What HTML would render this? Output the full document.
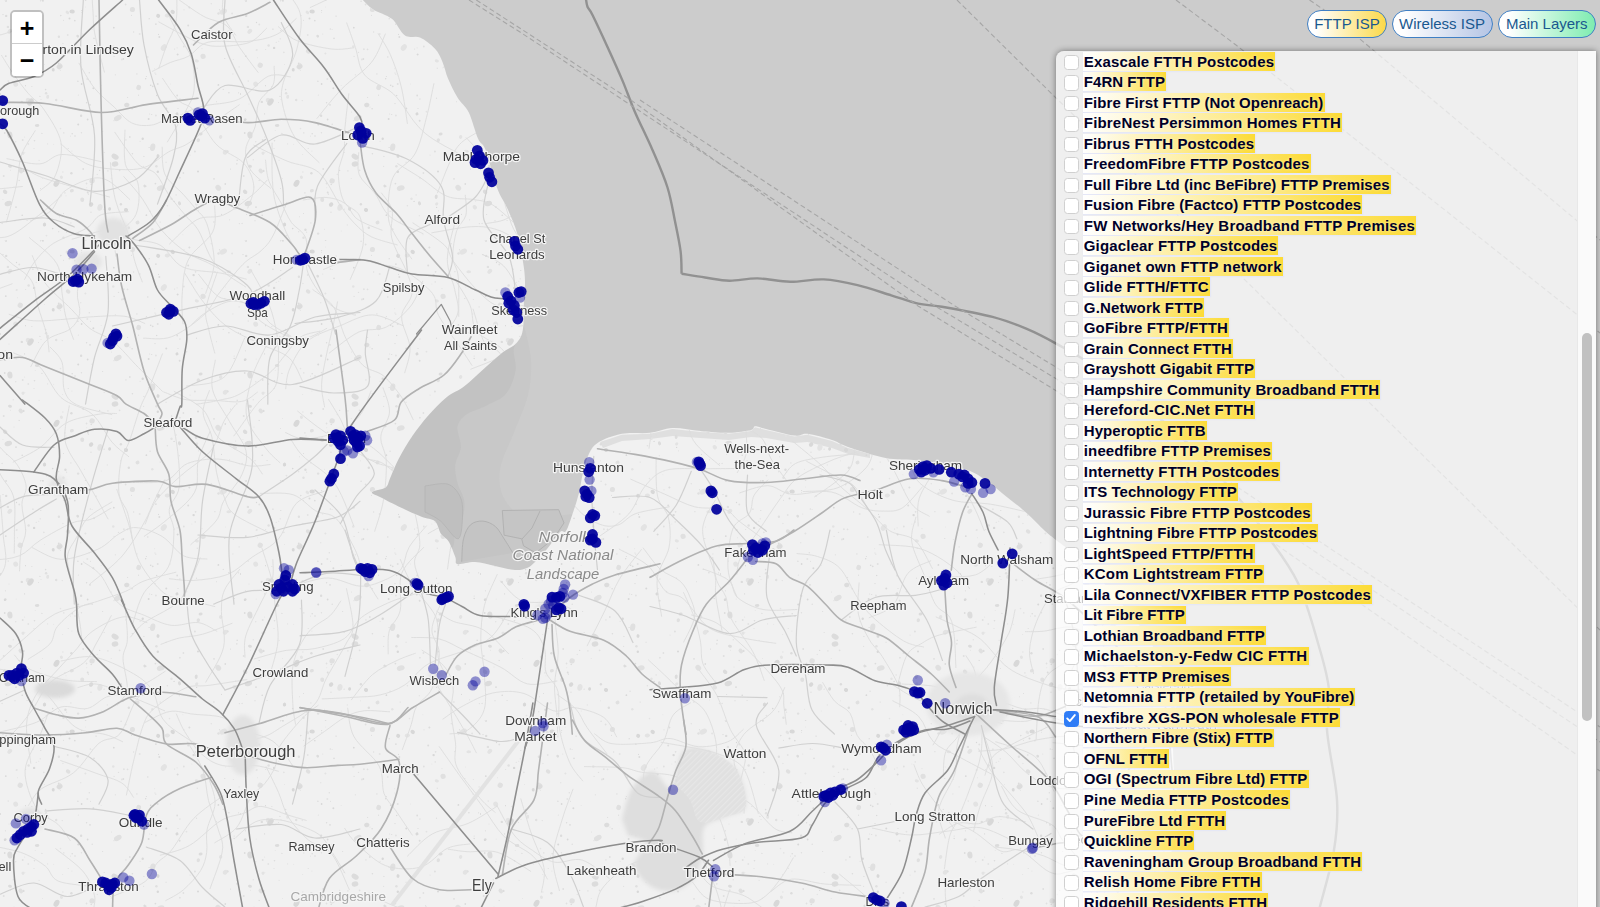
<!DOCTYPE html>
<html lang="en"><head><meta charset="utf-8"><title>FTTP ISP map</title>
<style>
html,body{margin:0;padding:0;}
body{width:1600px;height:907px;overflow:hidden;position:relative;background:#cccccc;font-family:"Liberation Sans",sans-serif;}
#map{position:absolute;left:0;top:0;width:1600px;height:907px;}
#map text{font-family:"Liberation Sans",sans-serif;}
.zoomctl{position:absolute;left:10px;top:10px;width:30px;border:2px solid rgba(0,0,0,0.2);border-radius:5px;background-clip:padding-box;}
.zoomctl a{display:block;width:30px;height:31px;background:#fff;color:#000;text-align:center;font:bold 25px/32px "Liberation Sans",sans-serif;text-decoration:none;position:relative;overflow:hidden;}
.zoomctl a:last-child{height:31.5px;line-height:33px;}
.zoomctl a:first-child{border-bottom:1px solid #ccc;border-radius:3px 3px 0 0;}
.zoomctl a:last-child{border-radius:0 0 3px 3px;}
.zoomctl i{position:absolute;background:#000;display:block;}
.btns{position:absolute;top:10px;right:4px;height:28px;}
.btn{position:absolute;top:10px;height:26px;border:1px solid #3f7fc4;border-radius:14px;color:#19588f;font-size:15px;line-height:26px;text-align:center;white-space:nowrap;}
#panel{position:absolute;left:1056px;top:51px;width:540px;height:880px;background:rgba(255,255,255,0.68);border-radius:8px 0 0 0;box-shadow:0 0 6px rgba(0,0,0,0.45);overflow:hidden;}
#track{position:absolute;right:0;top:0;width:18.7px;height:100%;background:#fafafa;border-left:1px solid #e8e8e8;box-sizing:border-box;}
#thumb{position:absolute;left:1582px;top:333.4px;width:10.3px;height:387.4px;border-radius:5.2px;background:#c1c1c1;}
.row{position:absolute;left:0;height:20.5px;white-space:nowrap;}
.cb{position:absolute;left:7.6px;top:3.4px;width:13.6px;height:13.6px;border:1px solid #d0d0d0;border-radius:3.5px;background:#fff;box-sizing:content-box;}
.cb.checked{background:#2f7cf6;border-color:#2f7cf6;}
.cb svg{position:absolute;left:-0.5px;top:-0.5px;width:14px;height:14px;}
label{position:absolute;left:27.3px;top:0.6px;height:18.8px;line-height:18.8px;padding-top:0.8px;font-weight:bold;font-size:15px;color:#000028;background:linear-gradient(to right,#ffffff,#fcdb36);padding-left:0.5px;box-sizing:border-box;text-shadow:0 0 3px rgba(255,255,255,0.55);overflow:hidden;box-shadow:0.5px 0.5px 1px 0.5px rgba(225,230,250,0.7);}
</style></head><body>
<svg id="map" width="1600" height="907" viewBox="0 0 1600 907">
<defs><filter id="soft" x="0" y="0" width="100%" height="100%"><feGaussianBlur stdDeviation="0.55"/></filter></defs>
<g filter="url(#soft)">
<rect x="-5" y="-5" width="1610" height="917" fill="#cccccc"/>
<path d="M524.0,325.0 C525.2,330.8 530.3,348.3 531.0,360.0 C531.7,371.7 530.7,383.3 528.0,395.0 C525.3,406.7 519.7,417.5 515.0,430.0 C510.3,442.5 501.7,458.3 500.0,470.0 C498.3,481.7 500.0,491.7 505.0,500.0 C510.0,508.3 518.3,517.5 530.0,520.0 C541.7,522.5 568.3,511.7 575.0,515.0 C581.7,518.3 575.0,529.2 570.0,540.0 C565.0,550.8 565.0,573.3 545.0,580.0 C525.0,586.7 477.5,593.3 450.0,580.0 C422.5,566.7 388.3,525.0 380.0,500.0 C371.7,475.0 385.0,453.3 400.0,430.0 C415.0,406.7 458.3,371.7 470.0,360.0Z" fill="#c8c8c8"/>
<path d="M521.6,332.3 C520.3,335.1 514.8,342.8 513.8,349.1 C512.8,355.5 516.9,363.0 515.6,370.5 C514.3,378.0 510.7,388.3 505.9,394.1 C501.1,399.9 493.3,402.0 486.8,405.4 C480.2,408.8 471.4,410.8 466.5,414.4 C461.6,417.9 458.5,421.3 457.5,426.8 C456.6,432.2 461.3,440.6 460.9,447.0 C460.5,453.4 455.8,459.0 455.3,465.0 C454.7,471.0 456.0,477.0 457.5,483.0 C459.0,489.0 463.5,494.6 464.3,501.0 C465.0,507.4 463.5,516.0 462.0,521.3 C460.5,526.5 456.9,528.1 455.3,532.5 C453.6,537.0 455.4,545.4 452.0,548.0 C448.6,550.6 443.7,552.3 435.0,548.0 C426.3,543.7 411.7,530.5 400.0,522.0 C388.3,513.5 368.7,505.7 365.0,497.0 C361.3,488.3 372.5,480.8 378.0,470.0 C383.5,459.2 389.7,444.2 398.0,432.0 C406.3,419.8 416.3,408.0 428.0,397.0 C439.7,386.0 455.3,376.0 468.0,366.0 C480.7,356.0 496.2,344.3 504.0,337.0 C511.8,329.7 513.2,324.5 515.0,322.0Z" fill="#c2c2c2"/>
<path d="M502.3,510.5 L558.7,509.7 L564,522.9 L553.5,538.8 L535.8,552.9 L523.5,545.8 L521.7,538.8 L504.1,535.2Z" fill="#c5c5c5" stroke="#b2b2b2" stroke-width="1"/>
<path d="M540,511 L532,528 L522,539" fill="none" stroke="#b2b2b2" stroke-width="1"/>
<path d="M461.7,561.7 C462.0,557.9 462.0,545.0 463.5,538.8 C465.0,532.6 467.4,527.7 470.6,524.7 C473.8,521.8 478.8,520.8 482.9,521.1 C487.0,521.4 491.8,523.5 495.3,526.4 C498.8,529.3 501.2,534.4 504.1,538.8 C507.0,543.2 511.4,550.5 512.9,552.9" fill="#c4c4c4" stroke="#b2b2b2" stroke-width="1"/>
<path d="M425.0,486.0 C428.8,485.7 441.8,482.4 447.6,484.1 C453.4,485.8 457.5,491.4 460.0,496.4 C462.5,501.4 462.9,507.0 462.6,514.1 C462.3,521.2 461.9,537.6 458.2,538.8 C454.5,540.0 446.1,525.6 440.6,521.1 C435.1,516.6 427.6,513.5 425.0,512.0Z" fill="#bfbfbf" stroke="#b4b4b4" stroke-width="0.8"/>
<path d="M360.9,-2.0 C362.9,-0.1 367.9,5.9 373.1,9.4 C378.3,12.9 386.6,14.4 391.9,18.8 C397.2,23.2 400.3,32.5 405.0,35.6 C409.7,38.7 415.0,35.3 420.0,37.5 C425.0,39.7 431.2,44.7 435.0,48.8 C438.8,52.9 440.3,56.9 442.5,61.9 C444.7,66.9 445.6,72.9 448.1,78.8 C450.6,84.7 454.1,91.9 457.5,97.5 C460.9,103.1 465.4,105.6 468.8,112.5 C472.2,119.4 475.3,132.6 478.1,138.8 C480.9,145.1 482.5,141.9 485.6,150.0 C488.7,158.1 493.1,177.5 496.9,187.5 C500.6,197.5 504.7,202.2 508.1,210.0 C511.5,217.8 515.0,225.7 517.5,234.4 C520.0,243.2 521.9,254.7 523.1,262.5 C524.4,270.3 524.9,275.1 525.0,281.3 C525.1,287.6 524.4,291.9 524.0,300.0 C523.6,308.1 524.1,322.8 522.8,330.0 C521.5,337.2 519.4,339.8 516.0,343.5 C512.6,347.2 507.8,348.4 502.5,352.5 C497.2,356.6 490.9,362.7 484.5,368.3 C478.1,373.9 470.7,381.4 464.3,386.3 C457.9,391.2 452.3,392.6 446.3,397.5 C440.3,402.4 433.9,409.1 428.3,415.5 C422.7,421.9 417.4,428.7 412.5,435.8 C407.6,442.9 402.8,451.2 399.0,458.3 C395.2,465.4 392.2,473.6 390.0,478.5 C387.8,483.4 388.5,485.2 385.5,487.5 C382.5,489.8 372.9,490.4 372.0,492.0 C371.1,493.6 375.1,494.4 380.0,497.0 C384.9,499.6 394.4,504.5 401.3,507.8 C408.2,511.1 415.9,514.5 421.5,516.8 C427.1,519.0 431.8,518.4 435.0,521.3 C438.2,524.2 438.8,530.7 441.0,534.0 C443.2,537.3 446.1,537.5 448.5,541.3 C450.9,545.1 453.8,553.2 455.3,557.0 C456.8,560.8 454.2,563.2 457.5,564.0 C460.8,564.8 468.8,561.7 475.0,562.0 C481.2,562.3 488.3,564.7 495.0,566.0 C501.7,567.3 509.7,569.7 515.0,570.0 C520.3,570.3 523.7,569.3 527.0,568.0 C530.3,566.7 531.7,565.2 535.0,562.0 C538.3,558.8 542.8,554.0 547.0,549.0 C551.2,544.0 556.8,535.0 560.0,532.0 C563.2,529.0 563.8,534.2 566.0,531.0 C568.2,527.8 570.9,518.7 573.0,512.5 C575.1,506.3 577.2,500.1 578.8,493.8 C580.4,487.6 581.0,481.3 582.5,475.0 C584.0,468.7 585.5,461.3 588.0,456.0 C590.5,450.7 591.9,446.7 597.5,443.0 C603.1,439.3 613.1,435.5 621.9,433.8 C630.6,432.1 641.6,433.8 650.0,432.8 C658.4,431.8 664.1,428.3 672.5,428.0 C680.9,427.7 691.2,430.2 700.6,431.0 C710.0,431.8 720.4,433.0 728.8,432.8 C737.2,432.6 746.6,431.1 751.0,430.0 C755.4,428.9 752.5,426.5 755.0,426.3 C757.5,426.1 759.4,427.4 766.0,429.0 C772.6,430.6 787.5,434.8 794.4,435.6 C801.3,436.4 801.2,433.1 807.5,433.8 C813.8,434.5 825.2,437.8 832.0,440.0 C838.8,442.2 839.1,443.9 848.0,446.9 C856.9,449.9 874.6,455.8 885.6,458.0 C896.6,460.2 904.4,459.0 913.8,460.0 C923.2,461.0 932.6,462.0 942.0,463.8 C951.4,465.6 962.2,467.9 970.0,471.0 C977.8,474.1 982.5,478.1 988.8,482.5 C995.0,486.9 1001.3,492.5 1007.5,497.5 C1013.7,502.5 1019.8,506.9 1026.0,512.5 C1032.2,518.1 1040.0,526.4 1045.0,531.0 C1050.0,535.6 1051.0,536.0 1056.0,540.0 C1061.0,544.0 1066.0,546.7 1075.0,555.0 C1084.0,563.3 1097.8,576.2 1110.0,590.0 C1122.2,603.8 1138.7,623.0 1148.0,638.0 C1157.3,653.0 1162.0,666.3 1166.0,680.0 C1170.0,693.7 1170.7,705.0 1172.0,720.0 C1173.3,735.0 1172.7,754.2 1174.0,770.0 C1175.3,785.8 1180.3,801.7 1180.0,815.0 C1179.7,828.3 1175.0,839.2 1172.0,850.0 C1169.0,860.8 1164.8,870.0 1162.0,880.0 C1159.2,890.0 1156.2,905.0 1155.0,910.0 L-5,910 L-5,-2Z" fill="#f1f1f1"/>
<path d="M600.0,442.0 L621.9,434.8 L650.0,433.8 L672.5,429.0 L700.6,432.0 L728.8,433.8 L751.0,431.0 L755.0,427.3 L766.0,430.0 L794.4,436.6 L807.5,434.8 L832.0,441.0 L848.0,447.9 L870.0,454.0 L870.0,458.0 L848.0,454.0 L832.0,448.0 L807.5,442.0 L794.4,443.0 L766.0,438.0 L751.0,437.0 L728.8,440.0 L700.6,438.0 L672.5,436.0 L650.0,439.0 L621.9,441.0 L603.0,448.0Z" fill="#dfdfdf"/>
<defs><pattern id="spk" width="240" height="240" patternUnits="userSpaceOnUse">
<ellipse cx="77.7" cy="36.2" rx="1.3" ry="1.5" fill="#dcdcdc" transform="rotate(137 77.7 36.2)"/>
<circle cx="22.6" cy="139.9" r="1.0" fill="#e0e0e0"/>
<circle cx="9.0" cy="104.1" r="0.5" fill="#e0e0e0"/>
<circle cx="21.8" cy="101.9" r="1.2" fill="#dcdcdc"/>
<circle cx="227.4" cy="151.4" r="1.2" fill="#dcdcdc"/>
<circle cx="138.5" cy="95.2" r="0.6" fill="#dcdcdc"/>
<circle cx="133.6" cy="32.0" r="0.8" fill="#e0e0e0"/>
<circle cx="129.8" cy="137.0" r="1.0" fill="#e0e0e0"/>
<circle cx="24.7" cy="137.1" r="0.6" fill="#e3e3e3"/>
<circle cx="23.4" cy="170.9" r="1.2" fill="#dcdcdc"/>
<circle cx="148.6" cy="119.1" r="1.0" fill="#d8d8d8"/>
<circle cx="186.5" cy="111.7" r="0.9" fill="#e3e3e3"/>
<ellipse cx="71.9" cy="190.7" rx="1.7" ry="2.0" fill="#e0e0e0" transform="rotate(76 71.9 190.7)"/>
<ellipse cx="126.0" cy="210.0" rx="2.1" ry="2.0" fill="#d8d8d8" transform="rotate(18 126.0 210.0)"/>
<ellipse cx="28.3" cy="100.3" rx="2.4" ry="2.6" fill="#e3e3e3" transform="rotate(125 28.3 100.3)"/>
<circle cx="101.2" cy="230.9" r="0.5" fill="#e3e3e3"/>
<circle cx="81.6" cy="84.0" r="0.9" fill="#d8d8d8"/>
<circle cx="16.5" cy="22.5" r="0.7" fill="#d8d8d8"/>
<ellipse cx="167.3" cy="15.6" rx="2.6" ry="2.0" fill="#e3e3e3" transform="rotate(174 167.3 15.6)"/>
<circle cx="197.3" cy="68.3" r="0.8" fill="#e3e3e3"/>
<circle cx="5.4" cy="110.8" r="0.6" fill="#dcdcdc"/>
<circle cx="118.5" cy="52.4" r="0.7" fill="#e0e0e0"/>
<circle cx="177.2" cy="95.5" r="0.9" fill="#dcdcdc"/>
<circle cx="39.9" cy="96.4" r="0.7" fill="#e0e0e0"/>
<circle cx="196.6" cy="207.4" r="0.7" fill="#d8d8d8"/>
<circle cx="236.8" cy="163.9" r="0.8" fill="#e0e0e0"/>
<circle cx="36.2" cy="42.3" r="0.6" fill="#e0e0e0"/>
<circle cx="2.9" cy="199.5" r="0.6" fill="#e3e3e3"/>
<circle cx="67.7" cy="35.0" r="1.0" fill="#e3e3e3"/>
<circle cx="146.4" cy="76.5" r="0.6" fill="#dcdcdc"/>
<ellipse cx="109.6" cy="209.0" rx="1.7" ry="1.5" fill="#d8d8d8" transform="rotate(100 109.6 209.0)"/>
<circle cx="24.8" cy="152.2" r="0.5" fill="#e0e0e0"/>
<circle cx="16.2" cy="50.1" r="0.6" fill="#dcdcdc"/>
<circle cx="81.6" cy="12.6" r="0.5" fill="#e0e0e0"/>
<circle cx="128.8" cy="227.7" r="1.2" fill="#dcdcdc"/>
<circle cx="16.9" cy="49.9" r="0.8" fill="#e0e0e0"/>
<circle cx="152.3" cy="229.3" r="1.2" fill="#e3e3e3"/>
<circle cx="113.8" cy="27.7" r="0.9" fill="#d8d8d8"/>
<circle cx="115.3" cy="74.8" r="0.6" fill="#dcdcdc"/>
<circle cx="179.9" cy="177.7" r="0.9" fill="#e0e0e0"/>
<circle cx="123.9" cy="49.3" r="1.0" fill="#e3e3e3"/>
<circle cx="35.2" cy="130.4" r="0.5" fill="#e3e3e3"/>
<ellipse cx="234.8" cy="207.2" rx="2.4" ry="2.0" fill="#e3e3e3" transform="rotate(42 234.8 207.2)"/>
<circle cx="85.4" cy="53.5" r="1.0" fill="#e3e3e3"/>
<ellipse cx="152.7" cy="147.2" rx="3.8" ry="2.6" fill="#e0e0e0" transform="rotate(102 152.7 147.2)"/>
<circle cx="177.6" cy="54.4" r="1.0" fill="#d8d8d8"/>
<circle cx="85.3" cy="7.0" r="0.5" fill="#e3e3e3"/>
<circle cx="113.3" cy="46.5" r="1.2" fill="#e3e3e3"/>
<circle cx="107.3" cy="224.9" r="0.7" fill="#e3e3e3"/>
<circle cx="19.3" cy="24.5" r="0.9" fill="#e0e0e0"/>
<circle cx="81.1" cy="115.8" r="1.2" fill="#dcdcdc"/>
<ellipse cx="115.1" cy="156.7" rx="3.8" ry="2.6" fill="#dcdcdc" transform="rotate(30 115.1 156.7)"/>
<ellipse cx="218.3" cy="187.8" rx="3.1" ry="2.6" fill="#e0e0e0" transform="rotate(45 218.3 187.8)"/>
<circle cx="104.1" cy="152.6" r="0.5" fill="#d8d8d8"/>
<circle cx="111.2" cy="178.4" r="0.5" fill="#e0e0e0"/>
<circle cx="40.8" cy="30.5" r="0.6" fill="#d8d8d8"/>
<circle cx="193.6" cy="35.1" r="1.2" fill="#d8d8d8"/>
<circle cx="157.7" cy="84.1" r="1.0" fill="#e0e0e0"/>
<ellipse cx="5.1" cy="191.8" rx="2.4" ry="2.0" fill="#dcdcdc" transform="rotate(35 5.1 191.8)"/>
<circle cx="104.1" cy="209.2" r="0.6" fill="#dcdcdc"/>
<circle cx="60.4" cy="70.3" r="0.6" fill="#e3e3e3"/>
<circle cx="62.2" cy="100.6" r="0.6" fill="#dcdcdc"/>
<circle cx="218.4" cy="84.9" r="0.9" fill="#d8d8d8"/>
<circle cx="198.5" cy="210.8" r="0.6" fill="#e0e0e0"/>
<circle cx="125.6" cy="4.5" r="0.9" fill="#e0e0e0"/>
<circle cx="146.1" cy="186.2" r="0.6" fill="#e0e0e0"/>
<circle cx="34.0" cy="148.6" r="0.5" fill="#dcdcdc"/>
<circle cx="78.2" cy="124.4" r="1.0" fill="#d8d8d8"/>
<circle cx="188.2" cy="25.5" r="1.0" fill="#dcdcdc"/>
<ellipse cx="59.6" cy="66.5" rx="3.1" ry="2.6" fill="#dcdcdc" transform="rotate(143 59.6 66.5)"/>
<circle cx="6.7" cy="214.6" r="0.5" fill="#d8d8d8"/>
<circle cx="78.1" cy="233.6" r="1.2" fill="#e0e0e0"/>
<circle cx="166.3" cy="108.6" r="1.0" fill="#d8d8d8"/>
<circle cx="121.9" cy="59.4" r="1.0" fill="#e3e3e3"/>
<circle cx="221.5" cy="214.3" r="0.6" fill="#d8d8d8"/>
<circle cx="32.9" cy="29.2" r="0.9" fill="#e3e3e3"/>
<circle cx="17.4" cy="57.8" r="0.5" fill="#e0e0e0"/>
<ellipse cx="160.7" cy="188.1" rx="4.0" ry="2.6" fill="#e0e0e0" transform="rotate(164 160.7 188.1)"/>
<circle cx="158.5" cy="34.3" r="0.6" fill="#d8d8d8"/>
<circle cx="52.7" cy="228.6" r="0.8" fill="#d8d8d8"/>
<circle cx="39.1" cy="160.3" r="0.6" fill="#e0e0e0"/>
<circle cx="169.5" cy="238.6" r="0.8" fill="#e3e3e3"/>
<circle cx="101.1" cy="85.6" r="0.5" fill="#e3e3e3"/>
<circle cx="4.7" cy="133.0" r="0.9" fill="#dcdcdc"/>
<circle cx="92.2" cy="124.2" r="0.7" fill="#dcdcdc"/>
<circle cx="27.1" cy="220.5" r="0.6" fill="#dcdcdc"/>
<ellipse cx="20.2" cy="65.3" rx="2.6" ry="2.6" fill="#e0e0e0" transform="rotate(33 20.2 65.3)"/>
<ellipse cx="196.7" cy="203.9" rx="1.7" ry="1.5" fill="#e3e3e3" transform="rotate(137 196.7 203.9)"/>
<ellipse cx="220.6" cy="136.9" rx="1.7" ry="2.0" fill="#e3e3e3" transform="rotate(14 220.6 136.9)"/>
<circle cx="191.9" cy="44.0" r="0.5" fill="#e3e3e3"/>
<ellipse cx="225.2" cy="152.3" rx="2.3" ry="2.6" fill="#e3e3e3" transform="rotate(56 225.2 152.3)"/>
<circle cx="16.0" cy="207.1" r="0.9" fill="#dcdcdc"/>
<circle cx="81.4" cy="132.7" r="0.7" fill="#e0e0e0"/>
<circle cx="10.4" cy="170.3" r="0.5" fill="#e0e0e0"/>
<circle cx="62.9" cy="43.5" r="0.7" fill="#e3e3e3"/>
<circle cx="127.5" cy="49.4" r="0.9" fill="#e0e0e0"/>
<circle cx="64.9" cy="192.9" r="0.7" fill="#dcdcdc"/>
<circle cx="3.7" cy="175.9" r="1.0" fill="#e0e0e0"/>
<circle cx="123.4" cy="59.0" r="0.9" fill="#dcdcdc"/>
<ellipse cx="158.0" cy="156.0" rx="1.9" ry="1.5" fill="#d8d8d8" transform="rotate(100 158.0 156.0)"/>
<circle cx="232.9" cy="73.9" r="0.6" fill="#e0e0e0"/>
<ellipse cx="82.2" cy="199.7" rx="2.2" ry="2.0" fill="#e0e0e0" transform="rotate(88 82.2 199.7)"/>
<circle cx="235.7" cy="200.9" r="0.5" fill="#dcdcdc"/>
<circle cx="150.1" cy="211.2" r="0.8" fill="#e0e0e0"/>
<circle cx="13.3" cy="159.7" r="0.8" fill="#e3e3e3"/>
<circle cx="143.7" cy="166.2" r="0.5" fill="#d8d8d8"/>
<circle cx="44.5" cy="64.6" r="0.5" fill="#e3e3e3"/>
<circle cx="87.4" cy="78.9" r="1.0" fill="#e3e3e3"/>
<circle cx="58.7" cy="231.8" r="0.7" fill="#e0e0e0"/>
<circle cx="85.6" cy="0.3" r="0.8" fill="#dcdcdc"/>
<circle cx="113.9" cy="120.7" r="0.6" fill="#e0e0e0"/>
<circle cx="121.1" cy="1.2" r="0.7" fill="#dcdcdc"/>
<circle cx="34.5" cy="140.8" r="0.8" fill="#dcdcdc"/>
<circle cx="71.9" cy="151.1" r="0.5" fill="#e0e0e0"/>
<circle cx="157.8" cy="171.8" r="1.2" fill="#d8d8d8"/>
<circle cx="183.4" cy="173.0" r="0.9" fill="#e0e0e0"/>
<circle cx="68.2" cy="148.5" r="0.6" fill="#dcdcdc"/>
<circle cx="198.0" cy="171.6" r="1.0" fill="#d8d8d8"/>
<circle cx="176.1" cy="194.9" r="0.6" fill="#dcdcdc"/>
<ellipse cx="198.3" cy="140.2" rx="1.7" ry="2.0" fill="#e0e0e0" transform="rotate(10 198.3 140.2)"/>
<circle cx="31.9" cy="86.6" r="0.5" fill="#d8d8d8"/>
<ellipse cx="200.6" cy="134.0" rx="2.0" ry="1.5" fill="#dcdcdc" transform="rotate(174 200.6 134.0)"/>
<circle cx="58.7" cy="63.3" r="0.9" fill="#dcdcdc"/>
<circle cx="179.6" cy="120.7" r="1.0" fill="#dcdcdc"/>
<ellipse cx="158.2" cy="15.9" rx="2.0" ry="2.0" fill="#d8d8d8" transform="rotate(19 158.2 15.9)"/>
<ellipse cx="203.1" cy="56.3" rx="2.6" ry="2.6" fill="#e0e0e0" transform="rotate(166 203.1 56.3)"/>
<circle cx="234.2" cy="118.5" r="0.8" fill="#dcdcdc"/>
<ellipse cx="115.0" cy="164.1" rx="3.4" ry="2.6" fill="#dcdcdc" transform="rotate(164 115.0 164.1)"/>
<circle cx="47.6" cy="143.9" r="0.7" fill="#e3e3e3"/>
<circle cx="156.4" cy="166.3" r="1.2" fill="#e0e0e0"/>
<circle cx="3.0" cy="14.6" r="0.7" fill="#dcdcdc"/>
<circle cx="166.1" cy="162.2" r="0.7" fill="#e3e3e3"/>
<circle cx="111.5" cy="111.9" r="0.5" fill="#e0e0e0"/>
<circle cx="74.8" cy="20.6" r="0.9" fill="#dcdcdc"/>
<circle cx="69.5" cy="18.4" r="1.0" fill="#d8d8d8"/>
<circle cx="238.6" cy="92.8" r="0.6" fill="#dcdcdc"/>
<circle cx="139.6" cy="34.0" r="1.0" fill="#e3e3e3"/>
<ellipse cx="228.7" cy="31.8" rx="2.3" ry="1.5" fill="#e3e3e3" transform="rotate(180 228.7 31.8)"/>
<circle cx="87.6" cy="119.5" r="0.9" fill="#d8d8d8"/>
<circle cx="6.0" cy="0.9" r="0.9" fill="#d8d8d8"/>
<circle cx="97.3" cy="174.5" r="0.8" fill="#e3e3e3"/>
<circle cx="90.3" cy="29.0" r="0.7" fill="#dcdcdc"/>
<circle cx="77.9" cy="81.2" r="0.8" fill="#dcdcdc"/>
<circle cx="225.6" cy="47.0" r="0.5" fill="#e3e3e3"/>
<circle cx="60.8" cy="15.6" r="0.8" fill="#dcdcdc"/>
<circle cx="86.6" cy="102.7" r="0.7" fill="#dcdcdc"/>
<ellipse cx="67.4" cy="12.4" rx="2.0" ry="1.5" fill="#e3e3e3" transform="rotate(38 67.4 12.4)"/>
<circle cx="59.8" cy="63.8" r="1.0" fill="#e3e3e3"/>
<circle cx="45.6" cy="89.6" r="0.8" fill="#dcdcdc"/>
<circle cx="194.9" cy="151.4" r="1.0" fill="#e0e0e0"/>
<ellipse cx="172.7" cy="11.9" rx="2.3" ry="2.0" fill="#d8d8d8" transform="rotate(35 172.7 11.9)"/>
<circle cx="154.7" cy="68.7" r="0.5" fill="#e0e0e0"/>
<circle cx="41.0" cy="99.6" r="0.7" fill="#e3e3e3"/>
<ellipse cx="61.4" cy="177.3" rx="1.7" ry="1.5" fill="#e3e3e3" transform="rotate(61 61.4 177.3)"/>
<circle cx="72.2" cy="133.8" r="0.8" fill="#dcdcdc"/>
<circle cx="40.2" cy="38.8" r="0.6" fill="#d8d8d8"/>
<circle cx="132.1" cy="108.7" r="0.7" fill="#d8d8d8"/>
<circle cx="102.6" cy="131.5" r="0.6" fill="#dcdcdc"/>
<circle cx="41.9" cy="133.4" r="0.7" fill="#e0e0e0"/>
<circle cx="88.4" cy="194.2" r="0.6" fill="#dcdcdc"/>
<circle cx="179.9" cy="99.1" r="0.8" fill="#e0e0e0"/>
<circle cx="90.4" cy="81.2" r="0.5" fill="#d8d8d8"/>
<circle cx="66.6" cy="232.2" r="0.6" fill="#e0e0e0"/>
<circle cx="22.2" cy="215.2" r="0.8" fill="#d8d8d8"/>
<circle cx="155.0" cy="103.6" r="0.7" fill="#dcdcdc"/>
<ellipse cx="30.5" cy="102.0" rx="4.1" ry="2.6" fill="#d8d8d8" transform="rotate(125 30.5 102.0)"/>
<circle cx="0.0" cy="94.0" r="1.0" fill="#d8d8d8"/>
<circle cx="233.3" cy="59.6" r="0.5" fill="#e0e0e0"/>
<ellipse cx="37.1" cy="125.4" rx="2.3" ry="1.5" fill="#dcdcdc" transform="rotate(179 37.1 125.4)"/>
<circle cx="155.4" cy="183.6" r="0.9" fill="#dcdcdc"/>
<ellipse cx="132.4" cy="9.5" rx="2.6" ry="2.6" fill="#e0e0e0" transform="rotate(9 132.4 9.5)"/>
<circle cx="154.9" cy="72.9" r="0.6" fill="#e3e3e3"/>
<ellipse cx="126.8" cy="105.0" rx="2.3" ry="2.6" fill="#dcdcdc" transform="rotate(76 126.8 105.0)"/>
<circle cx="125.9" cy="139.9" r="0.8" fill="#e3e3e3"/>
<circle cx="53.7" cy="144.3" r="0.5" fill="#e3e3e3"/>
<circle cx="239.1" cy="66.9" r="0.7" fill="#e0e0e0"/>
<circle cx="114.1" cy="56.3" r="0.6" fill="#dcdcdc"/>
<circle cx="230.5" cy="169.1" r="0.7" fill="#dcdcdc"/>
<ellipse cx="5.2" cy="119.6" rx="1.3" ry="1.5" fill="#d8d8d8" transform="rotate(58 5.2 119.6)"/>
<circle cx="160.2" cy="222.0" r="0.6" fill="#d8d8d8"/>
<circle cx="8.2" cy="81.1" r="0.8" fill="#e3e3e3"/>
<ellipse cx="163.8" cy="47.5" rx="3.6" ry="2.6" fill="#e3e3e3" transform="rotate(129 163.8 47.5)"/>
<circle cx="16.2" cy="119.0" r="0.6" fill="#e3e3e3"/>
<circle cx="183.8" cy="46.5" r="0.9" fill="#e0e0e0"/>
<circle cx="63.6" cy="213.4" r="0.5" fill="#d8d8d8"/>
<circle cx="146.4" cy="215.2" r="0.9" fill="#d8d8d8"/>
<circle cx="218.5" cy="13.5" r="1.2" fill="#e0e0e0"/>
<circle cx="221.3" cy="13.0" r="0.5" fill="#e0e0e0"/>
<circle cx="99.7" cy="170.4" r="0.6" fill="#d8d8d8"/>
<circle cx="107.9" cy="170.9" r="0.7" fill="#dcdcdc"/>
<circle cx="239.4" cy="223.6" r="0.7" fill="#e0e0e0"/>
<ellipse cx="44.5" cy="224.6" rx="1.7" ry="2.0" fill="#d8d8d8" transform="rotate(170 44.5 224.6)"/>
<circle cx="174.1" cy="201.4" r="0.7" fill="#d8d8d8"/>
<circle cx="40.6" cy="0.7" r="0.7" fill="#dcdcdc"/>
<circle cx="84.4" cy="229.3" r="0.5" fill="#e0e0e0"/>
<circle cx="91.2" cy="184.5" r="0.7" fill="#d8d8d8"/>
<circle cx="21.1" cy="169.3" r="0.6" fill="#e3e3e3"/>
<circle cx="130.0" cy="107.1" r="0.7" fill="#e3e3e3"/>
<ellipse cx="177.0" cy="113.9" rx="1.5" ry="1.5" fill="#d8d8d8" transform="rotate(160 177.0 113.9)"/>
<circle cx="184.0" cy="9.8" r="0.5" fill="#d8d8d8"/>
<circle cx="15.0" cy="220.8" r="0.7" fill="#e0e0e0"/>
<circle cx="179.3" cy="215.7" r="0.7" fill="#e3e3e3"/>
<circle cx="65.4" cy="229.8" r="1.2" fill="#dcdcdc"/>
<circle cx="62.9" cy="172.0" r="0.7" fill="#e3e3e3"/>
<circle cx="71.4" cy="173.2" r="1.2" fill="#dcdcdc"/>
<circle cx="5.8" cy="56.1" r="0.9" fill="#d8d8d8"/>
<circle cx="228.9" cy="92.8" r="0.7" fill="#d8d8d8"/>
<circle cx="195.6" cy="31.8" r="0.9" fill="#e0e0e0"/>
<circle cx="2.1" cy="223.5" r="0.7" fill="#e0e0e0"/>
<circle cx="145.7" cy="78.7" r="0.7" fill="#d8d8d8"/>
<circle cx="86.8" cy="187.7" r="0.5" fill="#e0e0e0"/>
<circle cx="94.0" cy="38.4" r="0.8" fill="#dcdcdc"/>
<circle cx="155.9" cy="115.6" r="1.0" fill="#e3e3e3"/>
<circle cx="38.6" cy="102.4" r="0.5" fill="#dcdcdc"/>
<circle cx="63.6" cy="20.2" r="0.5" fill="#d8d8d8"/>
<circle cx="119.6" cy="170.3" r="0.9" fill="#e0e0e0"/>
<circle cx="56.2" cy="100.0" r="1.2" fill="#e0e0e0"/>
<ellipse cx="179.5" cy="203.3" rx="2.1" ry="1.5" fill="#dcdcdc" transform="rotate(75 179.5 203.3)"/>
<circle cx="70.5" cy="136.1" r="0.7" fill="#e3e3e3"/>
<circle cx="177.1" cy="47.8" r="0.6" fill="#e0e0e0"/>
<circle cx="58.9" cy="36.8" r="1.2" fill="#e0e0e0"/>
<circle cx="78.3" cy="95.1" r="0.6" fill="#e0e0e0"/>
<circle cx="155.9" cy="24.1" r="0.9" fill="#dcdcdc"/>
<circle cx="24.6" cy="113.9" r="0.6" fill="#d8d8d8"/>
<circle cx="219.5" cy="9.7" r="0.7" fill="#e0e0e0"/>
<circle cx="28.6" cy="45.5" r="1.2" fill="#e0e0e0"/>
<circle cx="223.2" cy="89.3" r="0.6" fill="#d8d8d8"/>
<ellipse cx="144.7" cy="186.0" rx="1.3" ry="1.5" fill="#dcdcdc" transform="rotate(152 144.7 186.0)"/>
<circle cx="170.3" cy="83.9" r="0.5" fill="#e3e3e3"/>
<circle cx="81.6" cy="10.6" r="0.7" fill="#dcdcdc"/>
<circle cx="143.9" cy="156.4" r="0.6" fill="#dcdcdc"/>
<circle cx="196.5" cy="98.2" r="0.7" fill="#e0e0e0"/>
<circle cx="149.0" cy="18.7" r="0.5" fill="#d8d8d8"/>
<circle cx="131.5" cy="15.2" r="0.5" fill="#d8d8d8"/>
<circle cx="159.4" cy="37.1" r="1.0" fill="#dcdcdc"/>
<circle cx="156.7" cy="95.5" r="0.7" fill="#d8d8d8"/>
<circle cx="237.2" cy="160.3" r="0.8" fill="#dcdcdc"/>
<circle cx="75.0" cy="136.0" r="0.7" fill="#d8d8d8"/>
<ellipse cx="99.9" cy="207.4" rx="3.4" ry="2.6" fill="#e3e3e3" transform="rotate(100 99.9 207.4)"/>
<circle cx="174.7" cy="48.9" r="0.5" fill="#d8d8d8"/>
<circle cx="216.4" cy="101.7" r="0.5" fill="#d8d8d8"/>
<ellipse cx="138.7" cy="87.5" rx="2.4" ry="2.6" fill="#e0e0e0" transform="rotate(13 138.7 87.5)"/>
<circle cx="132.4" cy="153.8" r="0.8" fill="#dcdcdc"/>
<ellipse cx="137.5" cy="222.5" rx="1.8" ry="2.0" fill="#e0e0e0" transform="rotate(72 137.5 222.5)"/>
<circle cx="38.8" cy="41.2" r="0.5" fill="#dcdcdc"/>
<ellipse cx="92.1" cy="180.9" rx="2.7" ry="2.6" fill="#e0e0e0" transform="rotate(11 92.1 180.9)"/>
<circle cx="234.1" cy="115.9" r="0.5" fill="#d8d8d8"/>
<ellipse cx="20.7" cy="171.0" rx="2.6" ry="2.0" fill="#e0e0e0" transform="rotate(56 20.7 171.0)"/>
<circle cx="149.1" cy="147.5" r="0.6" fill="#d8d8d8"/>
<circle cx="43.9" cy="52.4" r="0.8" fill="#e0e0e0"/>
<circle cx="92.1" cy="29.5" r="0.6" fill="#e0e0e0"/>
<ellipse cx="9.9" cy="135.0" rx="3.5" ry="2.6" fill="#dcdcdc" transform="rotate(82 9.9 135.0)"/>
<circle cx="28.3" cy="143.9" r="1.0" fill="#e3e3e3"/>
<circle cx="155.8" cy="74.0" r="0.6" fill="#d8d8d8"/>
<circle cx="93.4" cy="88.2" r="1.0" fill="#d8d8d8"/>
<circle cx="42.9" cy="0.8" r="0.9" fill="#d8d8d8"/>
<ellipse cx="56.5" cy="183.3" rx="3.8" ry="2.6" fill="#d8d8d8" transform="rotate(121 56.5 183.3)"/>
<circle cx="96.1" cy="16.1" r="0.7" fill="#d8d8d8"/>
<circle cx="87.7" cy="192.5" r="1.0" fill="#dcdcdc"/>
<ellipse cx="9.8" cy="31.3" rx="2.8" ry="2.0" fill="#e3e3e3" transform="rotate(130 9.8 31.3)"/>
<circle cx="19.2" cy="180.5" r="0.8" fill="#e0e0e0"/>
<circle cx="6.2" cy="15.9" r="1.2" fill="#dcdcdc"/>
<circle cx="46.5" cy="235.6" r="0.9" fill="#e3e3e3"/>
<circle cx="229.6" cy="219.8" r="0.6" fill="#e0e0e0"/>
<ellipse cx="15.7" cy="84.2" rx="2.4" ry="2.6" fill="#e3e3e3" transform="rotate(157 15.7 84.2)"/>
<circle cx="66.0" cy="195.8" r="0.6" fill="#e3e3e3"/>
<circle cx="120.5" cy="220.8" r="0.6" fill="#e3e3e3"/>
<circle cx="147.8" cy="57.0" r="0.7" fill="#dcdcdc"/>
<ellipse cx="47.7" cy="96.8" rx="2.0" ry="1.5" fill="#e3e3e3" transform="rotate(96 47.7 96.8)"/>
<circle cx="40.5" cy="188.4" r="0.5" fill="#dcdcdc"/>
<circle cx="152.7" cy="86.3" r="0.9" fill="#dcdcdc"/>
<circle cx="60.5" cy="128.6" r="0.8" fill="#e3e3e3"/>
<circle cx="63.5" cy="237.7" r="1.2" fill="#e0e0e0"/>
<circle cx="86.5" cy="183.5" r="0.9" fill="#e0e0e0"/>
<circle cx="42.4" cy="178.5" r="0.5" fill="#e3e3e3"/>
<ellipse cx="196.8" cy="60.9" rx="2.1" ry="1.5" fill="#e3e3e3" transform="rotate(8 196.8 60.9)"/>
<ellipse cx="53.2" cy="69.8" rx="1.7" ry="1.5" fill="#d8d8d8" transform="rotate(93 53.2 69.8)"/>
<circle cx="214.9" cy="31.7" r="0.6" fill="#dcdcdc"/>
<circle cx="5.3" cy="0.6" r="0.7" fill="#e3e3e3"/>
<circle cx="25.5" cy="85.7" r="0.6" fill="#d8d8d8"/>
<circle cx="140.1" cy="141.4" r="0.6" fill="#e3e3e3"/>
<circle cx="149.7" cy="114.0" r="0.6" fill="#dcdcdc"/>
<circle cx="224.8" cy="58.5" r="0.6" fill="#d8d8d8"/>
<ellipse cx="23.0" cy="153.2" rx="1.7" ry="1.5" fill="#e3e3e3" transform="rotate(67 23.0 153.2)"/>
<circle cx="232.1" cy="13.5" r="1.0" fill="#e3e3e3"/>
<circle cx="142.7" cy="138.8" r="1.2" fill="#d8d8d8"/>
<circle cx="59.6" cy="216.8" r="0.5" fill="#dcdcdc"/>
<circle cx="127.6" cy="97.4" r="0.6" fill="#e0e0e0"/>
<circle cx="14.0" cy="186.9" r="0.5" fill="#e0e0e0"/>
<circle cx="34.1" cy="47.9" r="1.2" fill="#d8d8d8"/>
<circle cx="195.2" cy="41.9" r="0.7" fill="#dcdcdc"/>
<ellipse cx="72.1" cy="11.6" rx="2.7" ry="2.0" fill="#d8d8d8" transform="rotate(1 72.1 11.6)"/>
<circle cx="90.0" cy="104.8" r="0.9" fill="#dcdcdc"/>
<circle cx="178.0" cy="108.6" r="0.6" fill="#dcdcdc"/>
<circle cx="62.7" cy="154.6" r="0.5" fill="#e3e3e3"/>
<circle cx="213.9" cy="222.0" r="0.7" fill="#dcdcdc"/>
<circle cx="63.8" cy="132.9" r="0.8" fill="#e3e3e3"/>
<circle cx="70.9" cy="222.9" r="0.6" fill="#dcdcdc"/>
<circle cx="211.2" cy="3.7" r="0.7" fill="#e0e0e0"/>
<circle cx="202.0" cy="48.7" r="0.6" fill="#e3e3e3"/>
<circle cx="46.1" cy="93.3" r="1.2" fill="#e0e0e0"/>
<ellipse cx="91.1" cy="204.5" rx="2.4" ry="2.0" fill="#d8d8d8" transform="rotate(135 91.1 204.5)"/>
<circle cx="167.4" cy="205.8" r="0.8" fill="#e0e0e0"/>
<circle cx="136.9" cy="73.9" r="0.6" fill="#d8d8d8"/>
<circle cx="149.4" cy="18.7" r="0.6" fill="#e0e0e0"/>
<circle cx="7.9" cy="26.9" r="1.2" fill="#e0e0e0"/>
<circle cx="82.8" cy="34.0" r="0.5" fill="#dcdcdc"/>
<ellipse cx="10.0" cy="166.2" rx="2.0" ry="1.5" fill="#dcdcdc" transform="rotate(11 10.0 166.2)"/>
<circle cx="15.8" cy="141.7" r="0.7" fill="#e0e0e0"/>
<ellipse cx="196.2" cy="196.7" rx="2.3" ry="1.5" fill="#dcdcdc" transform="rotate(98 196.2 196.7)"/>
<circle cx="25.7" cy="49.4" r="0.5" fill="#dcdcdc"/>
<ellipse cx="8.3" cy="203.5" rx="3.8" ry="2.6" fill="#dcdcdc" transform="rotate(161 8.3 203.5)"/>
<circle cx="151.7" cy="114.5" r="0.6" fill="#dcdcdc"/>
<circle cx="190.1" cy="155.1" r="0.7" fill="#e3e3e3"/>
<circle cx="80.8" cy="62.7" r="0.7" fill="#e3e3e3"/>
<ellipse cx="223.2" cy="11.6" rx="4.0" ry="2.6" fill="#e3e3e3" transform="rotate(154 223.2 11.6)"/>
<circle cx="120.9" cy="204.3" r="1.2" fill="#dcdcdc"/>
<circle cx="189.4" cy="7.5" r="1.0" fill="#dcdcdc"/>
<circle cx="83.2" cy="169.1" r="1.0" fill="#e0e0e0"/>
<circle cx="171.5" cy="198.7" r="1.2" fill="#e3e3e3"/>
<circle cx="40.9" cy="0.3" r="0.6" fill="#e3e3e3"/>
<circle cx="182.9" cy="234.7" r="0.5" fill="#e3e3e3"/>
<ellipse cx="117.8" cy="118.0" rx="4.1" ry="2.6" fill="#e0e0e0" transform="rotate(151 117.8 118.0)"/>
<circle cx="83.3" cy="199.6" r="0.7" fill="#e0e0e0"/>
<ellipse cx="68.1" cy="51.5" rx="2.4" ry="2.0" fill="#e0e0e0" transform="rotate(28 68.1 51.5)"/>
<circle cx="225.3" cy="184.0" r="0.9" fill="#dcdcdc"/>
<circle cx="150.7" cy="85.3" r="0.8" fill="#d8d8d8"/>
<circle cx="214.0" cy="178.9" r="0.8" fill="#dcdcdc"/>
<circle cx="89.3" cy="72.8" r="0.8" fill="#e0e0e0"/>
<circle cx="91.0" cy="212.2" r="0.6" fill="#d8d8d8"/>
</pattern>
<clipPath id="landclip"><path d="M360.9,-2.0 C362.9,-0.1 367.9,5.9 373.1,9.4 C378.3,12.9 386.6,14.4 391.9,18.8 C397.2,23.2 400.3,32.5 405.0,35.6 C409.7,38.7 415.0,35.3 420.0,37.5 C425.0,39.7 431.2,44.7 435.0,48.8 C438.8,52.9 440.3,56.9 442.5,61.9 C444.7,66.9 445.6,72.9 448.1,78.8 C450.6,84.7 454.1,91.9 457.5,97.5 C460.9,103.1 465.4,105.6 468.8,112.5 C472.2,119.4 475.3,132.6 478.1,138.8 C480.9,145.1 482.5,141.9 485.6,150.0 C488.7,158.1 493.1,177.5 496.9,187.5 C500.6,197.5 504.7,202.2 508.1,210.0 C511.5,217.8 515.0,225.7 517.5,234.4 C520.0,243.2 521.9,254.7 523.1,262.5 C524.4,270.3 524.9,275.1 525.0,281.3 C525.1,287.6 524.4,291.9 524.0,300.0 C523.6,308.1 524.1,322.8 522.8,330.0 C521.5,337.2 519.4,339.8 516.0,343.5 C512.6,347.2 507.8,348.4 502.5,352.5 C497.2,356.6 490.9,362.7 484.5,368.3 C478.1,373.9 470.7,381.4 464.3,386.3 C457.9,391.2 452.3,392.6 446.3,397.5 C440.3,402.4 433.9,409.1 428.3,415.5 C422.7,421.9 417.4,428.7 412.5,435.8 C407.6,442.9 402.8,451.2 399.0,458.3 C395.2,465.4 392.2,473.6 390.0,478.5 C387.8,483.4 388.5,485.2 385.5,487.5 C382.5,489.8 372.9,490.4 372.0,492.0 C371.1,493.6 375.1,494.4 380.0,497.0 C384.9,499.6 394.4,504.5 401.3,507.8 C408.2,511.1 415.9,514.5 421.5,516.8 C427.1,519.0 431.8,518.4 435.0,521.3 C438.2,524.2 438.8,530.7 441.0,534.0 C443.2,537.3 446.1,537.5 448.5,541.3 C450.9,545.1 453.8,553.2 455.3,557.0 C456.8,560.8 454.2,563.2 457.5,564.0 C460.8,564.8 468.8,561.7 475.0,562.0 C481.2,562.3 488.3,564.7 495.0,566.0 C501.7,567.3 509.7,569.7 515.0,570.0 C520.3,570.3 523.7,569.3 527.0,568.0 C530.3,566.7 531.7,565.2 535.0,562.0 C538.3,558.8 542.8,554.0 547.0,549.0 C551.2,544.0 556.8,535.0 560.0,532.0 C563.2,529.0 563.8,534.2 566.0,531.0 C568.2,527.8 570.9,518.7 573.0,512.5 C575.1,506.3 577.2,500.1 578.8,493.8 C580.4,487.6 581.0,481.3 582.5,475.0 C584.0,468.7 585.5,461.3 588.0,456.0 C590.5,450.7 591.9,446.7 597.5,443.0 C603.1,439.3 613.1,435.5 621.9,433.8 C630.6,432.1 641.6,433.8 650.0,432.8 C658.4,431.8 664.1,428.3 672.5,428.0 C680.9,427.7 691.2,430.2 700.6,431.0 C710.0,431.8 720.4,433.0 728.8,432.8 C737.2,432.6 746.6,431.1 751.0,430.0 C755.4,428.9 752.5,426.5 755.0,426.3 C757.5,426.1 759.4,427.4 766.0,429.0 C772.6,430.6 787.5,434.8 794.4,435.6 C801.3,436.4 801.2,433.1 807.5,433.8 C813.8,434.5 825.2,437.8 832.0,440.0 C838.8,442.2 839.1,443.9 848.0,446.9 C856.9,449.9 874.6,455.8 885.6,458.0 C896.6,460.2 904.4,459.0 913.8,460.0 C923.2,461.0 932.6,462.0 942.0,463.8 C951.4,465.6 962.2,467.9 970.0,471.0 C977.8,474.1 982.5,478.1 988.8,482.5 C995.0,486.9 1001.3,492.5 1007.5,497.5 C1013.7,502.5 1019.8,506.9 1026.0,512.5 C1032.2,518.1 1040.0,526.4 1045.0,531.0 C1050.0,535.6 1051.0,536.0 1056.0,540.0 C1061.0,544.0 1066.0,546.7 1075.0,555.0 C1084.0,563.3 1097.8,576.2 1110.0,590.0 C1122.2,603.8 1138.7,623.0 1148.0,638.0 C1157.3,653.0 1162.0,666.3 1166.0,680.0 C1170.0,693.7 1170.7,705.0 1172.0,720.0 C1173.3,735.0 1172.7,754.2 1174.0,770.0 C1175.3,785.8 1180.3,801.7 1180.0,815.0 C1179.7,828.3 1175.0,839.2 1172.0,850.0 C1169.0,860.8 1164.8,870.0 1162.0,880.0 C1159.2,890.0 1156.2,905.0 1155.0,910.0 L-5,910 L-5,-2Z"/></clipPath></defs>
<g clip-path="url(#landclip)">
<rect width="1200" height="907" fill="url(#spk)"/>
<g fill="none" stroke="#dddddd" stroke-width="0.9" stroke-linecap="round">
<path d="M132.3,538.4 C131.5,534.2 129.9,520.6 127.7,513.2 C125.5,505.7 120.1,502.3 119.0,493.6 C117.9,484.9 119.2,469.9 121.0,461.1 C122.7,452.4 126.2,450.0 129.4,441.1 C132.6,432.2 137.0,416.5 140.2,407.8 C143.5,399.1 145.1,397.8 148.8,388.9 C152.5,379.9 160.1,359.8 162.4,353.9"/>
<path d="M265.5,160.1 C266.1,163.6 266.3,174.1 268.9,181.2 C271.6,188.4 277.6,196.3 281.3,203.2 C285.0,210.0 287.2,216.3 291.3,222.3 C295.4,228.2 303.2,230.4 306.0,238.9 C308.7,247.3 303.8,261.9 307.9,272.9 C312.0,283.8 322.7,297.8 330.5,304.8 C338.4,311.9 350.9,313.4 354.9,315.1"/>
<path d="M1160.6,727.2 C1159.2,724.1 1153.0,715.7 1152.2,708.6 C1151.5,701.5 1152.3,692.3 1156.0,684.7 C1159.6,677.1 1170.9,672.7 1174.0,663.0 C1177.1,653.3 1174.6,636.1 1174.4,626.2 C1174.2,616.3 1170.6,610.6 1172.6,603.4 C1174.6,596.2 1184.1,586.5 1186.4,583.1"/>
<path d="M6.5,221.8 C8.2,215.7 13.9,196.3 16.4,185.1 C18.9,174.0 18.4,163.9 21.5,154.9 C24.6,145.9 32.7,135.1 34.9,131.2"/>
<path d="M254.3,658.9 C259.6,657.5 276.2,652.1 286.1,650.4 C296.1,648.7 304.4,650.7 314.1,648.7 C323.7,646.7 336.3,643.8 344.2,638.6 C352.1,633.4 353.6,623.6 361.4,617.5 C369.3,611.3 382.5,605.4 391.1,601.6 C399.8,597.7 405.5,597.5 413.5,594.4 C421.5,591.3 434.9,584.9 439.1,583.1"/>
<path d="M725.9,364.8 C726.2,360.6 731.0,348.8 728.0,339.7 C724.9,330.5 710.9,318.1 707.4,309.7 C703.9,301.4 708.3,296.3 706.8,289.4 C705.2,282.5 699.7,271.8 698.3,268.2"/>
<path d="M839.5,874.2 C843.4,877.5 854.9,886.8 863.0,893.9 C871.0,901.0 879.6,909.5 887.6,917.0 C895.5,924.6 905.1,931.0 910.6,939.4 C916.0,947.8 915.8,956.8 920.3,967.2 C924.9,977.6 934.8,996.2 937.7,1002.0"/>
<path d="M232.1,623.3 C227.2,625.1 211.4,631.8 202.6,634.2 C193.8,636.7 186.2,636.4 179.3,638.0 C172.4,639.7 164.0,643.2 161.0,644.3"/>
<path d="M70.2,840.5 C68.2,837.8 63.5,829.7 57.9,824.3 C52.2,818.9 41.9,817.1 36.4,808.2 C31.0,799.2 24.5,782.7 25.1,770.4 C25.8,758.1 36.7,743.8 40.4,734.4 C44.2,725.0 46.6,717.5 47.8,714.1"/>
<path d="M1095.3,44.8 C1096.6,39.9 1102.6,26.8 1103.1,15.4 C1103.6,4.0 1100.9,-11.9 1098.3,-23.5 C1095.8,-35.0 1089.0,-42.8 1088.0,-53.8 C1087.0,-64.8 1091.5,-83.6 1092.2,-89.5"/>
<path d="M541.7,256.7 C538.1,253.7 525.4,245.0 520.0,238.5 C514.6,232.1 512.2,226.9 509.3,218.1 C506.5,209.2 501.5,195.8 503.0,185.6 C504.5,175.3 515.7,161.3 518.3,156.4"/>
<path d="M557.9,737.1 C557.7,733.0 557.2,721.2 556.7,712.5 C556.1,703.8 554.3,695.1 554.5,685.2 C554.8,675.2 558.1,664.6 558.2,652.9 C558.3,641.1 554.4,623.9 555.2,614.6 C556.0,605.2 561.7,599.9 563.0,597.0"/>
<path d="M973.5,831.5 C974.6,827.3 976.9,815.9 980.0,806.7 C983.0,797.5 989.9,784.8 991.8,776.5 C993.6,768.2 992.9,765.1 991.1,756.9 C989.3,748.7 982.8,732.1 981.1,727.1"/>
<path d="M674.2,782.9 C676.3,785.8 684.2,791.5 686.6,800.3 C689.0,809.1 685.1,824.3 688.5,835.7 C691.9,847.0 701.9,857.4 707.1,868.3 C712.3,879.3 716.8,889.5 719.7,901.2 C722.6,912.9 725.5,926.5 724.6,938.5 C723.8,950.6 716.5,967.8 714.8,973.6"/>
<path d="M216.8,631.2 C213.7,629.8 205.8,623.6 198.2,622.6 C190.5,621.6 180.0,626.5 171.1,625.3 C162.1,624.1 153.2,619.1 144.5,615.4 C135.7,611.7 125.8,610.0 118.5,603.3 C111.2,596.6 106.4,582.0 100.6,575.1 C94.7,568.2 86.2,564.2 83.4,562.0"/>
<path d="M699.5,670.5 C702.4,674.7 711.7,685.6 716.9,695.4 C722.0,705.3 725.7,719.9 730.3,729.4 C734.9,738.9 742.5,745.4 744.6,752.6 C746.6,759.7 744.5,763.7 742.7,772.1 C740.9,780.5 735.2,797.7 733.7,802.8"/>
<path d="M14.2,553.1 C14.3,549.8 14.5,542.1 14.4,533.0 C14.4,523.9 15.9,507.4 13.9,498.4 C12.0,489.3 6.7,484.7 2.8,478.6 C-1.1,472.5 -2.3,466.6 -9.4,461.8 C-16.5,457.0 -34.6,451.9 -39.7,449.9"/>
<path d="M389.6,711.8 C385.3,711.7 371.4,710.0 364.1,710.8 C356.8,711.7 352.4,713.3 345.8,716.7 C339.2,720.1 331.6,726.5 324.6,731.4 C317.6,736.3 307.3,743.5 303.9,746.0"/>
<path d="M1161.1,800.6 C1156.9,804.6 1142.0,817.4 1135.4,825.0 C1128.9,832.5 1125.6,837.5 1121.8,845.9 C1118.1,854.3 1117.1,865.4 1112.9,875.5 C1108.7,885.6 1099.2,901.5 1096.5,906.7"/>
<path d="M28.1,659.3 C31.7,656.7 45.0,649.4 49.9,643.9 C54.8,638.4 52.6,632.4 57.5,626.4 C62.3,620.4 72.4,612.0 79.0,607.8 C85.6,603.6 89.5,604.1 97.2,601.4 C105.0,598.6 117.7,594.8 125.5,591.4 C133.3,588.0 135.6,584.2 144.0,581.0 C152.4,577.8 170.6,573.6 175.9,572.2"/>
<path d="M1031.6,58.0 C1034.9,59.5 1043.3,61.7 1051.5,67.0 C1059.7,72.2 1073.2,84.0 1081.0,89.5 C1088.8,95.0 1094.1,95.5 1098.3,100.0 C1102.4,104.5 1104.9,110.4 1105.8,116.6 C1106.8,122.9 1103.2,128.6 1103.8,137.6 C1104.5,146.6 1108.6,165.2 1109.6,170.7"/>
<path d="M1014.9,153.7 C1020.3,154.3 1039.1,154.7 1046.8,157.5 C1054.5,160.2 1056.7,165.8 1061.2,170.2 C1065.7,174.6 1071.9,181.7 1074.1,184.0"/>
<path d="M122.6,741.7 C119.8,740.5 113.6,737.0 105.7,734.6 C97.9,732.2 85.0,733.4 75.6,727.2 C66.2,721.0 57.0,705.7 49.6,697.4 C42.2,689.1 39.3,682.3 31.1,677.6 C22.8,673.0 8.7,670.2 0.0,669.3 C-8.7,668.4 -17.6,671.8 -21.1,672.3"/>
<path d="M-1.4,-15.5 C0.2,-21.4 7.1,-41.8 8.3,-51.1 C9.5,-60.5 6.8,-64.2 5.6,-71.6 C4.5,-79.0 2.3,-91.4 1.6,-95.3"/>
<path d="M662.8,403.7 C661.5,398.1 656.2,379.3 655.1,370.2 C654.0,361.0 654.4,356.3 656.2,349.0 C658.0,341.7 664.3,330.3 665.9,326.6"/>
<path d="M649.0,448.2 C649.2,445.0 651.9,435.0 650.4,429.1 C648.9,423.2 641.8,421.2 639.8,413.0 C637.7,404.7 638.0,389.8 638.3,379.9 C638.6,370.0 641.7,363.1 641.5,353.5 C641.3,344.0 637.8,327.8 637.0,322.6"/>
<path d="M1129.2,764.8 C1124.8,762.4 1111.8,754.8 1102.3,750.1 C1092.8,745.5 1083.1,738.6 1072.2,736.9 C1061.3,735.2 1047.9,738.0 1036.8,739.9 C1025.7,741.9 1015.5,746.8 1005.8,748.7 C996.1,750.5 983.3,750.8 978.7,751.2"/>
<path d="M442.9,719.1 C446.3,716.9 454.8,710.2 463.1,705.9 C471.4,701.5 482.6,695.1 492.8,693.0 C502.9,691.0 513.9,690.5 524.0,693.5 C534.0,696.4 544.8,708.4 553.2,710.7 C561.6,713.1 565.9,706.5 574.3,707.6 C582.7,708.7 596.6,712.4 603.6,717.3 C610.7,722.2 614.4,733.6 616.6,736.8"/>
<path d="M444.8,333.6 C447.0,330.2 456.2,320.5 457.8,313.2 C459.4,305.8 456.4,298.5 454.7,289.6 C452.9,280.7 447.3,270.7 447.3,259.6 C447.3,248.4 453.5,228.9 454.8,222.8"/>
<path d="M30.8,763.2 C30.1,756.7 25.7,735.3 26.6,724.0 C27.4,712.7 31.1,703.9 35.7,695.4 C40.4,686.9 47.9,680.5 54.4,673.2 C60.9,665.8 68.4,658.2 74.7,651.2 C81.0,644.3 84.1,637.2 92.2,631.5 C100.2,625.7 113.6,618.4 122.8,616.9 C131.9,615.5 142.9,621.7 146.9,622.6"/>
<path d="M49.1,351.8 C48.6,348.8 48.4,341.5 46.5,333.7 C44.6,326.0 40.2,314.1 37.6,305.2 C35.1,296.3 35.7,287.3 31.2,280.2 C26.8,273.1 17.2,268.4 10.9,262.8 C4.6,257.3 -3.8,249.5 -6.7,246.9"/>
<path d="M980.0,281.7 C976.6,283.2 966.6,284.7 959.5,290.3 C952.4,295.9 943.6,306.8 937.3,315.3 C931.0,323.8 926.2,332.6 921.7,341.4 C917.3,350.3 912.2,364.0 910.3,368.5"/>
<path d="M158.8,21.9 C162.7,24.0 175.0,30.9 181.8,34.4 C188.7,37.8 193.7,40.9 199.7,42.9 C205.8,44.8 209.8,46.4 218.1,46.3 C226.3,46.2 241.1,45.5 249.2,42.5 C257.3,39.5 263.7,30.6 266.6,28.2"/>
<path d="M1024.9,511.5 C1019.2,510.3 1002.7,506.1 990.6,504.2 C978.4,502.3 963.7,503.5 952.0,500.0 C940.2,496.5 927.0,489.7 920.0,483.3 C913.0,477.0 911.7,465.6 910.0,462.0"/>
<path d="M25.4,168.9 C28.2,170.4 34.0,174.5 42.1,177.5 C50.3,180.5 63.0,183.9 74.2,187.1 C85.5,190.4 103.6,195.4 109.5,197.0"/>
<path d="M1053.8,791.2 C1052.5,788.1 1049.6,778.9 1045.9,772.8 C1042.3,766.7 1040.2,759.7 1031.8,754.5 C1023.4,749.3 1001.7,743.9 995.7,741.8"/>
<path d="M587.8,151.7 C594.2,149.8 617.1,144.1 625.9,140.2 C634.7,136.3 635.9,134.0 640.6,128.4 C645.2,122.7 646.1,112.8 654.0,106.4 C661.8,99.9 679.1,92.3 687.9,89.5 C696.8,86.8 703.8,89.7 707.0,89.8"/>
<path d="M923.6,647.0 C920.3,646.0 911.9,645.8 903.4,640.8 C894.9,635.8 880.4,624.3 872.8,617.2 C865.1,610.0 863.1,606.0 857.6,597.9 C852.1,589.7 846.5,575.0 839.8,568.1 C833.1,561.2 824.7,558.9 817.5,556.5 C810.4,554.1 800.4,554.1 797.0,553.6"/>
<path d="M557.6,138.5 C554.5,143.9 545.2,160.2 539.3,171.3 C533.4,182.5 527.9,197.5 522.3,205.4 C516.7,213.4 511.7,216.1 505.8,219.1 C499.8,222.1 489.7,222.7 486.5,223.5"/>
<path d="M722.4,330.7 C726.2,325.6 740.0,307.7 745.2,299.8 C750.4,291.9 753.0,292.6 753.6,283.4 C754.2,274.1 751.1,254.4 748.9,244.3 C746.7,234.2 745.3,229.0 740.5,222.7 C735.7,216.4 728.6,211.7 720.0,206.6 C711.4,201.6 694.1,194.8 688.9,192.4"/>
<path d="M196.3,404.3 C200.2,403.6 212.5,401.9 219.8,400.1 C227.1,398.4 231.9,398.4 240.2,393.8 C248.6,389.2 262.6,378.8 269.9,372.6 C277.2,366.3 279.1,362.1 284.2,356.2 C289.3,350.4 294.5,341.4 300.4,337.2 C306.4,333.0 316.8,332.2 320.0,331.2"/>
<path d="M1154.3,33.4 C1159.4,30.1 1177.2,22.1 1184.9,13.6 C1192.5,5.2 1193.6,-10.2 1200.3,-17.3 C1207.0,-24.5 1218.2,-24.6 1225.1,-29.3 C1231.9,-34.0 1238.8,-43.0 1241.5,-45.7"/>
<path d="M265.8,346.7 C263.5,351.9 255.1,366.0 251.9,377.7 C248.7,389.4 244.5,405.3 246.7,416.9 C248.9,428.6 259.7,439.9 265.2,447.5 C270.8,455.1 277.4,460.1 279.9,462.7"/>
<path d="M-17.7,762.3 C-20.8,762.4 -29.5,762.1 -36.6,762.9 C-43.7,763.6 -51.4,762.5 -60.4,766.6 C-69.4,770.7 -82.2,781.8 -90.5,787.3 C-98.7,792.9 -106.6,797.8 -109.9,799.9"/>
<path d="M190.8,544.6 C195.0,540.7 210.7,528.1 216.1,520.9 C221.6,513.7 219.4,508.9 223.6,501.3 C227.9,493.6 238.0,483.5 241.7,475.0 C245.4,466.6 247.9,459.5 245.9,450.6 C243.9,441.7 235.1,431.9 229.6,421.7 C224.0,411.5 214.9,399.7 212.5,389.4 C210.1,379.2 214.8,365.0 215.3,360.2"/>
<path d="M397.2,244.9 C392.9,243.5 378.4,240.3 371.4,236.8 C364.3,233.3 360.1,229.1 355.0,223.9 C349.8,218.6 346.4,214.1 340.4,205.5 C334.3,196.9 327.5,179.7 318.6,172.3 C309.7,164.9 297.9,165.6 287.1,161.1 C276.3,156.6 259.3,147.9 253.8,145.2"/>
<path d="M407.4,856.2 C411.6,852.5 422.5,839.2 432.6,833.8 C442.7,828.3 457.4,828.0 468.1,823.4 C478.9,818.8 492.3,809.1 497.1,806.2"/>
<path d="M437.7,686.2 C440.2,690.3 447.8,702.5 452.8,710.9 C457.8,719.2 463.9,729.4 467.8,736.4 C471.8,743.4 474.9,750.1 476.3,752.8"/>
<path d="M1140.9,190.3 C1144.1,194.2 1156.7,206.7 1160.1,213.6 C1163.5,220.6 1163.8,224.1 1161.0,232.0 C1158.2,240.0 1146.2,256.4 1143.2,261.3"/>
<path d="M293.7,767.1 C290.2,762.8 282.0,747.4 272.7,741.1 C263.3,734.7 246.0,732.7 237.6,728.8 C229.3,724.9 229.7,719.9 222.4,717.5 C215.1,715.0 202.5,715.2 193.7,714.2 C184.9,713.3 177.8,710.2 169.7,711.5 C161.6,712.9 149.2,720.6 145.1,722.4"/>
<path d="M144.3,536.3 C148.1,533.5 158.6,526.9 167.0,519.6 C175.4,512.2 189.4,502.1 194.6,492.2 C199.8,482.3 195.7,470.5 198.3,460.4 C200.8,450.3 208.1,436.4 210.0,431.6"/>
<path d="M703.3,14.0 C707.5,14.9 719.9,19.0 728.3,19.1 C736.6,19.3 742.8,17.4 753.3,15.1 C763.9,12.8 785.3,6.9 791.7,5.2"/>
<path d="M945.3,838.0 C944.2,833.2 937.4,819.9 938.9,809.3 C940.5,798.7 951.8,784.6 954.8,774.2 C957.8,763.8 955.4,755.7 956.8,747.0 C958.3,738.2 961.4,729.1 963.5,721.8 C965.6,714.5 967.4,711.0 969.3,703.2 C971.3,695.3 975.9,682.6 975.4,674.7 C974.8,666.8 967.5,659.0 966.0,655.8"/>
<path d="M1143.6,710.0 C1149.9,710.2 1172.2,709.4 1181.1,711.4 C1189.9,713.3 1191.3,717.1 1196.8,721.6 C1202.3,726.0 1211.0,735.4 1213.9,738.2"/>
<path d="M794.1,237.0 C790.6,235.4 780.5,230.8 772.8,227.1 C765.1,223.4 754.1,220.5 748.2,214.8 C742.2,209.1 738.9,196.8 737.0,193.2"/>
<path d="M346.5,588.7 C347.6,595.0 353.2,617.0 353.0,626.4 C352.9,635.7 349.9,636.1 345.5,644.7 C341.0,653.4 331.7,668.2 326.5,678.2 C321.2,688.2 321.5,696.8 314.2,704.8 C306.9,712.8 291.5,720.8 282.7,726.3 C273.9,731.7 270.7,734.8 261.5,737.6 C252.3,740.4 233.3,742.2 227.6,743.1"/>
<path d="M324.6,406.9 C324.1,403.2 321.3,393.0 321.6,384.7 C321.8,376.3 324.1,366.6 326.0,356.9 C327.9,347.1 331.1,335.4 333.0,326.2 C335.0,317.0 336.8,305.9 337.5,301.8"/>
<path d="M270.7,188.3 C267.4,185.3 255.1,176.8 250.9,170.4 C246.7,163.9 245.0,156.8 245.7,149.4 C246.5,142.0 253.1,134.0 255.3,126.2 C257.5,118.4 255.9,109.4 258.8,102.5 C261.8,95.6 270.6,90.8 273.1,84.8 C275.7,78.7 274.0,69.4 274.1,66.3"/>
<path d="M641.4,549.6 C637.7,554.4 625.7,568.6 619.7,578.7 C613.6,588.9 610.4,599.1 605.0,610.3 C599.6,621.5 590.1,639.9 587.2,645.8"/>
<path d="M793.2,857.9 C791.3,861.1 786.1,870.9 781.6,877.1 C777.0,883.4 771.7,891.2 766.1,895.6 C760.4,899.9 757.0,902.7 747.5,903.3 C738.1,904.0 718.6,902.9 709.4,899.4 C700.3,895.9 695.5,885.2 692.7,882.4"/>
<path d="M736.8,574.2 C737.5,571.3 737.3,563.8 740.9,556.6 C744.5,549.4 751.7,540.7 758.3,531.1 C764.9,521.4 773.7,507.5 780.3,498.6 C786.9,489.8 789.3,484.1 797.7,477.8 C806.1,471.5 821.1,465.0 830.8,460.7 C840.4,456.5 851.6,453.7 855.7,452.3"/>
<path d="M522.7,410.4 C520.9,405.8 515.0,392.7 511.9,382.9 C508.8,373.1 510.1,360.2 504.2,351.6 C498.3,342.9 482.2,338.8 476.6,331.1 C470.9,323.4 473.7,314.1 470.1,305.5 C466.6,296.9 457.6,284.0 455.2,279.7"/>
<path d="M943.5,389.5 C942.1,395.7 936.4,414.5 935.2,426.8 C933.9,439.1 938.8,451.4 936.1,463.4 C933.4,475.3 922.1,488.2 919.2,498.6 C916.2,509.0 918.4,521.4 918.2,526.0"/>
<path d="M1072.7,-9.9 C1075.4,-6.9 1083.6,2.2 1088.9,8.6 C1094.1,14.9 1099.5,20.8 1104.3,28.1 C1109.0,35.4 1115.0,42.6 1117.5,52.3 C1120.0,62.0 1118.1,76.0 1119.0,86.3 C1119.9,96.6 1118.4,105.7 1123.0,114.2 C1127.5,122.8 1140.0,131.6 1146.2,137.5 C1152.3,143.4 1157.6,147.5 1159.9,149.5"/>
<path d="M61.9,195.5 C58.1,198.8 47.8,208.4 38.9,215.2 C29.9,222.1 18.0,233.1 8.1,236.4 C-1.8,239.7 -10.5,235.1 -20.6,235.1 C-30.6,235.1 -43.6,238.7 -52.3,236.3 C-61.0,233.9 -64.6,227.1 -72.5,220.7 C-80.5,214.2 -91.4,202.4 -100.0,197.5 C-108.7,192.7 -120.3,192.6 -124.3,191.6"/>
<path d="M1154.1,756.5 C1150.2,755.3 1141.0,751.0 1130.7,749.3 C1120.4,747.6 1105.2,747.4 1092.2,746.3 C1079.3,745.2 1059.6,743.3 1053.0,742.7"/>
<path d="M737.3,472.6 C738.8,469.2 745.0,461.1 746.4,452.4 C747.8,443.7 745.3,430.1 745.7,420.6 C746.1,411.0 744.4,402.9 748.8,395.0 C753.2,387.1 768.2,376.7 772.1,373.0"/>
<path d="M30.8,366.7 C33.3,362.4 39.5,347.0 46.1,340.7 C52.6,334.4 64.5,333.5 70.1,329.0 C75.7,324.4 78.5,319.6 79.7,313.4 C80.9,307.1 76.4,300.1 77.4,291.6 C78.4,283.1 84.2,267.2 85.6,262.3"/>
<path d="M1025.4,821.8 C1020.9,821.0 1006.6,816.3 998.8,816.6 C991.0,816.9 985.3,822.6 978.6,823.7 C971.8,824.8 964.8,821.4 958.2,823.1 C951.7,824.9 942.6,832.3 939.5,834.1"/>
<path d="M607.0,753.8 C603.7,749.4 592.1,734.9 587.0,727.4 C581.8,720.0 581.1,714.8 576.1,709.3 C571.1,703.8 560.3,696.9 557.1,694.5"/>
<path d="M19.5,571.0 C19.7,567.3 20.1,555.5 21.1,548.8 C22.2,542.2 25.6,538.3 25.7,531.0 C25.8,523.6 21.8,512.0 21.9,504.5 C21.9,497.0 26.9,492.7 26.1,486.0 C25.3,479.4 21.2,470.7 17.1,464.6 C13.1,458.5 6.7,454.8 1.9,449.4 C-2.8,444.0 -9.3,435.1 -11.5,432.2"/>
<path d="M-12.6,795.0 C-19.1,795.9 -38.5,798.5 -51.4,800.3 C-64.2,802.1 -79.6,802.8 -89.9,805.8 C-100.2,808.9 -105.5,815.7 -113.2,818.6 C-120.8,821.5 -126.3,819.6 -135.6,823.1 C-144.9,826.6 -158.1,834.2 -168.9,839.8 C-179.7,845.3 -195.0,853.5 -200.2,856.3"/>
<path d="M272.1,143.1 C272.1,149.3 271.7,170.0 272.4,180.5 C273.1,191.0 273.4,196.1 276.4,206.1 C279.3,216.2 284.9,230.5 290.3,240.6 C295.7,250.7 305.8,262.6 309.0,267.0"/>
<path d="M1133.5,376.9 C1135.8,374.0 1143.5,366.0 1147.2,359.5 C1150.9,353.0 1155.6,346.6 1155.5,337.8 C1155.3,329.0 1149.5,314.9 1146.2,306.5 C1143.0,298.2 1138.3,294.2 1135.8,287.8 C1133.3,281.4 1135.3,276.7 1131.4,268.3 C1127.5,259.8 1119.8,244.6 1112.6,237.1 C1105.4,229.7 1092.4,225.9 1088.3,223.7"/>
<path d="M983.6,736.6 C987.3,739.2 998.4,745.7 1005.7,751.9 C1013.1,758.1 1019.7,767.8 1027.5,773.7 C1035.3,779.6 1042.2,784.5 1052.5,787.3 C1062.8,790.1 1077.0,787.9 1089.2,790.5 C1101.5,793.2 1119.7,801.1 1125.8,803.2"/>
<path d="M1177.5,540.2 C1173.3,541.6 1159.6,546.3 1152.0,548.8 C1144.5,551.3 1141.0,554.3 1132.3,555.2 C1123.5,556.0 1110.1,551.0 1099.4,553.9 C1088.6,556.8 1078.7,568.3 1067.7,572.6 C1056.8,576.9 1039.3,578.4 1033.6,579.6"/>
<path d="M14.5,655.1 C16.9,657.4 20.7,664.7 28.9,668.8 C37.2,672.9 52.7,677.7 63.9,679.8 C75.2,682.0 91.0,681.3 96.5,681.6"/>
<path d="M110.8,508.3 C107.5,510.1 97.8,516.6 91.3,519.1 C84.8,521.6 80.3,519.6 71.8,523.1 C63.3,526.6 48.9,534.9 40.2,540.3 C31.5,545.7 27.6,552.4 19.5,555.7 C11.4,559.0 1.6,559.5 -8.4,560.1 C-18.3,560.8 -29.4,562.8 -40.2,559.5 C-51.1,556.1 -68.0,543.2 -73.5,539.9"/>
<path d="M191.7,324.6 C194.0,322.6 199.2,316.5 205.8,312.6 C212.5,308.6 223.0,301.8 231.5,301.1 C240.1,300.4 250.8,304.8 257.3,308.5 C263.8,312.3 265.0,319.0 270.6,323.6 C276.2,328.3 287.6,334.2 291.0,336.3"/>
<path d="M710.7,186.0 C707.5,184.4 698.8,178.1 691.5,176.3 C684.2,174.4 674.1,174.9 666.8,175.1 C659.6,175.2 656.2,174.9 648.1,177.3 C640.0,179.7 627.4,182.8 618.4,189.3 C609.4,195.8 602.1,208.0 593.8,216.3 C585.6,224.5 572.9,235.1 568.8,238.9"/>
<path d="M285.7,388.8 C286.3,385.5 286.1,376.7 289.7,368.8 C293.2,360.9 298.6,348.6 307.1,341.4 C315.6,334.2 329.8,329.9 340.7,325.5 C351.6,321.0 361.9,314.8 372.3,314.9 C382.7,314.9 398.2,324.0 403.4,325.9"/>
<path d="M24.6,279.4 C26.2,276.6 29.6,268.2 34.4,262.2 C39.2,256.2 44.8,249.1 53.4,243.4 C62.1,237.8 78.4,233.1 86.3,228.3 C94.3,223.5 94.1,217.6 101.1,214.8 C108.1,212.1 123.7,212.3 128.3,211.7"/>
<path d="M1096.3,630.1 C1095.9,624.7 1097.1,607.6 1094.3,597.3 C1091.5,587.0 1081.8,578.8 1079.4,568.1 C1077.0,557.3 1079.8,542.5 1079.9,532.9 C1080.0,523.4 1076.3,519.3 1079.9,510.8 C1083.4,502.2 1095.3,489.2 1101.3,481.6 C1107.2,474.0 1113.2,467.9 1115.6,465.1"/>
<path d="M176.4,714.0 C177.8,716.9 180.6,725.0 184.6,731.5 C188.7,738.0 194.4,747.6 200.7,753.2 C207.0,758.9 213.1,763.4 222.3,765.5 C231.5,767.5 246.5,764.7 255.9,765.7 C265.2,766.7 274.7,770.4 278.4,771.3"/>
<path d="M270.1,464.5 C266.6,464.7 257.7,466.8 249.2,465.9 C240.7,465.0 229.3,459.4 219.0,459.1 C208.7,458.7 196.3,459.9 187.5,463.5 C178.7,467.1 175.2,477.4 166.1,480.6 C157.1,483.8 138.8,482.2 133.3,482.5"/>
<path d="M165.7,900.6 C168.7,898.8 177.5,894.9 183.3,889.9 C189.1,884.9 196.7,876.9 200.6,870.6 C204.5,864.3 205.6,859.0 206.7,852.3 C207.7,845.5 205.6,838.1 207.0,829.9 C208.4,821.8 214.8,811.8 215.1,803.3 C215.4,794.8 210.0,783.0 209.0,778.9"/>
<path d="M542.4,321.2 C546.7,323.1 561.7,326.6 568.2,332.7 C574.7,338.9 578.7,349.8 581.5,358.2 C584.2,366.6 584.3,379.1 584.8,383.3"/>
<path d="M866.8,228.6 C863.1,224.0 851.9,208.2 844.8,201.1 C837.6,193.9 831.6,188.4 824.1,185.5 C816.6,182.6 809.4,185.3 799.9,183.7 C790.3,182.1 776.9,179.8 766.7,175.8 C756.5,171.9 748.9,162.2 738.5,160.0 C728.0,157.8 709.8,162.3 704.1,162.8"/>
<path d="M10.4,351.6 C15.1,354.0 30.4,358.5 38.9,366.1 C47.3,373.8 52.2,389.5 61.0,397.5 C69.9,405.5 83.6,406.7 92.1,414.1 C100.6,421.6 105.9,435.1 112.0,442.1 C118.1,449.2 125.9,454.1 128.7,456.6"/>
<path d="M970.4,280.9 C964.5,282.4 943.6,286.3 935.0,289.6 C926.4,292.8 924.1,293.0 918.9,300.2 C913.7,307.3 912.0,323.6 903.8,332.5 C895.6,341.3 877.8,347.7 869.6,353.2 C861.4,358.6 859.3,359.2 854.7,365.2 C850.1,371.2 848.8,380.7 841.8,389.2 C834.7,397.8 817.5,412.0 812.6,416.5"/>
<path d="M703.2,568.9 C707.4,570.8 722.7,575.4 728.5,580.2 C734.3,585.1 732.2,593.0 737.9,597.8 C743.7,602.7 753.2,607.5 763.0,609.5 C772.9,611.4 791.3,609.5 796.9,609.5"/>
<path d="M-16.6,770.4 C-14.5,766.9 -9.4,756.7 -3.8,749.8 C1.8,742.9 10.8,735.8 16.9,729.0 C23.0,722.3 27.1,717.0 32.8,709.1 C38.4,701.3 42.4,689.7 50.9,682.0 C59.3,674.3 75.9,669.5 83.6,662.9 C91.3,656.3 92.3,650.2 96.9,642.3 C101.5,634.5 108.9,620.1 111.3,615.6"/>
<path d="M397.7,163.7 C401.6,166.1 412.8,172.8 421.0,178.2 C429.2,183.6 438.3,192.7 447.1,196.3 C455.9,199.9 466.1,198.1 473.7,199.6 C481.3,201.0 485.3,200.4 492.8,205.0 C500.2,209.5 514.2,223.4 518.5,227.0"/>
<path d="M377.9,598.9 C375.4,594.8 367.1,582.3 363.4,574.2 C359.7,566.2 360.2,560.2 355.7,550.9 C351.2,541.7 343.0,525.5 336.4,518.8 C329.7,512.1 322.9,514.9 315.7,510.8 C308.5,506.8 302.2,497.6 293.0,494.7 C283.8,491.8 265.9,493.7 260.5,493.4"/>
<path d="M426.4,525.9 C423.5,529.5 413.2,540.2 409.0,547.4 C404.7,554.6 405.6,563.4 401.1,569.1 C396.7,574.7 389.1,578.3 382.2,581.1 C375.3,584.0 368.8,586.6 359.9,586.1 C350.9,585.6 339.2,578.3 328.6,578.0 C318.0,577.6 305.6,583.3 296.4,583.9 C287.2,584.5 277.4,581.8 273.6,581.4"/>
<path d="M529.8,488.8 C531.0,483.8 532.1,468.2 537.0,459.1 C541.8,450.1 552.1,440.1 559.0,434.6 C565.8,429.1 570.5,429.4 578.1,426.1 C585.7,422.7 593.9,415.9 604.8,414.3 C615.7,412.7 630.8,414.6 643.6,416.5 C656.4,418.4 670.7,423.0 681.6,425.7 C692.5,428.4 704.3,431.6 708.8,432.8"/>
<path d="M803.2,491.6 C809.0,491.0 827.4,491.8 838.0,487.7 C848.5,483.6 860.5,474.3 866.5,467.3 C872.5,460.2 872.3,452.0 874.0,445.3 C875.7,438.6 876.3,430.2 876.8,427.2"/>
<path d="M693.2,180.3 C691.9,186.5 688.9,205.2 685.3,217.1 C681.7,228.9 676.7,240.2 671.6,251.6 C666.4,263.0 660.2,278.0 654.3,285.7 C648.4,293.4 639.2,295.7 636.2,297.6"/>
<path d="M874.5,300.9 C876.3,298.0 881.4,291.5 885.2,283.2 C889.0,274.9 890.6,259.6 897.4,251.2 C904.1,242.8 921.0,235.7 925.7,232.6"/>
<path d="M32.2,547.6 C37.0,549.5 50.2,559.0 61.2,559.3 C72.1,559.6 88.3,553.4 97.9,549.2 C107.4,545.0 112.4,537.7 118.7,534.1 C125.1,530.5 128.8,527.2 136.0,527.6 C143.3,528.0 154.3,531.8 162.2,536.5 C170.2,541.2 176.1,552.0 183.6,555.8 C191.0,559.5 203.1,558.5 207.0,559.0"/>
<path d="M160.3,855.2 C165.2,853.6 179.5,851.2 189.6,845.4 C199.7,839.6 211.9,825.9 220.9,820.6 C229.9,815.2 237.0,815.7 243.7,813.3 C250.4,811.0 253.5,806.1 260.9,806.4 C268.3,806.7 280.7,812.8 288.2,815.1 C295.8,817.4 303.2,819.5 306.2,820.4"/>
<path d="M984.6,50.1 C980.7,47.4 971.1,37.4 961.2,33.9 C951.2,30.4 937.2,29.9 924.9,29.2 C912.7,28.6 897.2,30.3 887.7,30.0 C878.3,29.7 875.2,27.5 868.2,27.4 C861.2,27.4 854.0,31.6 845.6,29.8 C837.1,28.0 825.9,18.0 817.6,16.4 C809.4,14.9 799.9,19.9 796.3,20.6"/>
<path d="M413.2,419.7 C411.3,416.0 406.8,404.9 401.8,397.5 C396.8,390.2 389.8,381.2 383.3,375.7 C376.7,370.3 368.7,371.1 362.5,364.8 C356.2,358.6 350.6,347.9 345.8,338.2 C340.9,328.5 338.7,314.7 333.3,306.6 C327.8,298.5 316.3,292.5 312.9,289.7"/>
<path d="M56.2,911.9 C51.9,916.8 38.0,936.0 30.7,941.5 C23.4,946.9 21.1,943.6 12.2,944.7 C3.3,945.7 -11.5,949.6 -22.6,947.7 C-33.7,945.7 -44.7,938.5 -54.4,932.9 C-64.0,927.3 -72.4,919.1 -80.4,914.3 C-88.4,909.5 -94.6,910.5 -102.4,904.2 C-110.1,897.9 -123.0,881.1 -127.1,876.4"/>
<path d="M1106.4,620.5 C1103.3,624.3 1094.4,636.7 1088.1,643.3 C1081.8,649.8 1075.5,654.5 1068.6,660.0 C1061.7,665.4 1051.9,669.3 1046.9,675.9 C1042.0,682.6 1040.7,689.4 1038.9,700.1 C1037.1,710.7 1036.6,733.1 1036.1,739.7"/>
<path d="M557.8,325.2 C555.6,328.1 548.4,333.3 544.8,342.2 C541.1,351.1 539.4,368.6 535.8,378.6 C532.2,388.7 527.4,393.0 523.4,402.5 C519.4,412.0 513.7,430.0 511.8,435.5"/>
<path d="M1095.4,531.6 C1099.7,534.3 1112.4,540.5 1121.3,547.7 C1130.3,555.0 1141.0,570.1 1149.3,575.3 C1157.6,580.6 1163.8,575.1 1171.1,579.3 C1178.4,583.6 1185.7,595.3 1193.1,601.0 C1200.5,606.6 1211.9,611.3 1215.7,613.4"/>
<path d="M541.4,892.3 C541.9,888.2 545.7,877.5 543.9,867.4 C542.1,857.4 534.6,843.5 530.8,832.0 C526.9,820.6 522.5,804.3 520.8,798.8"/>
<path d="M731.7,202.7 C735.5,202.6 744.3,201.6 754.1,202.4 C764.0,203.1 781.2,205.1 790.8,207.1 C800.5,209.2 808.4,213.3 811.9,214.5"/>
<path d="M860.7,885.4 C854.7,885.1 836.3,885.0 824.7,884.0 C813.2,883.0 800.2,877.9 791.3,879.2 C782.3,880.5 774.2,889.6 770.8,891.7"/>
<path d="M751.0,-5.9 C750.8,-1.7 751.9,10.1 749.6,19.3 C747.2,28.4 740.5,38.7 736.9,48.9 C733.3,59.2 729.5,75.4 728.1,80.7"/>
<path d="M385.3,34.0 C383.0,38.7 378.8,53.2 371.5,62.3 C364.3,71.4 351.0,79.4 341.9,88.8 C332.8,98.1 321.1,113.5 317.0,118.4"/>
<path d="M1028.0,4.2 C1029.0,9.3 1033.7,25.7 1034.3,35.1 C1034.9,44.4 1030.3,52.8 1031.4,60.1 C1032.5,67.5 1034.6,72.8 1040.9,79.4 C1047.2,85.9 1058.7,95.9 1069.4,99.5 C1080.1,103.1 1099.3,100.7 1105.3,100.9"/>
<path d="M487.9,486.3 C481.3,485.9 458.8,484.7 448.4,483.5 C438.0,482.4 435.1,482.2 425.7,479.5 C416.3,476.8 400.5,470.4 391.9,467.5 C383.3,464.5 381.7,465.4 374.1,461.8 C366.4,458.2 355.3,451.5 345.9,445.8 C336.6,440.0 326.1,433.0 318.0,427.2 C310.0,421.5 301.0,413.8 297.6,411.1"/>
<path d="M615.6,237.5 C615.6,242.9 617.5,260.5 616.1,269.9 C614.6,279.3 611.6,288.2 606.7,294.1 C601.8,300.1 593.3,303.1 586.7,305.5 C580.1,307.9 572.7,305.6 567.0,308.7 C561.3,311.7 555.7,316.6 552.7,324.0 C549.6,331.3 550.2,344.4 548.7,352.7 C547.3,361.1 544.8,370.7 544.1,374.2"/>
<path d="M1107.7,323.7 C1108.4,329.8 1112.5,349.4 1111.9,360.3 C1111.2,371.1 1105.5,378.4 1103.8,388.8 C1102.0,399.1 1101.8,410.5 1101.5,422.3 C1101.2,434.0 1101.9,453.1 1102.0,459.2"/>
<path d="M235.8,837.6 C239.0,835.0 248.7,824.9 255.3,821.9 C262.0,818.9 269.0,819.3 275.6,819.6 C282.1,819.9 287.3,821.2 294.6,823.7 C301.8,826.2 313.1,830.2 319.1,834.6 C325.1,839.0 326.4,843.6 330.7,850.0 C335.0,856.4 342.5,869.2 344.9,873.0"/>
<path d="M1083.0,868.3 C1079.9,867.8 1071.3,867.7 1064.7,865.6 C1058.1,863.6 1051.1,858.4 1043.5,855.8 C1035.9,853.2 1027.1,851.5 1019.0,850.1 C1011.0,848.6 999.1,847.5 995.1,847.0"/>
<path d="M1035.3,448.7 C1041.7,447.7 1060.7,442.5 1073.4,443.0 C1086.1,443.5 1101.1,451.4 1111.4,451.8 C1121.7,452.1 1129.1,448.4 1135.0,445.0 C1141.0,441.5 1144.9,433.6 1146.9,431.3"/>
<path d="M1026.5,214.7 C1024.0,218.7 1017.8,229.5 1011.3,238.2 C1004.8,247.0 993.3,256.4 987.6,267.2 C981.9,278.0 979.5,291.3 977.3,303.2 C975.1,315.0 976.9,329.3 974.3,338.2 C971.8,347.1 970.0,350.4 962.0,356.4 C954.0,362.5 934.6,369.3 926.4,374.5 C918.2,379.6 915.1,385.0 912.9,387.1"/>
<path d="M113.9,895.9 C119.1,893.5 137.8,887.0 145.0,881.6 C152.1,876.2 152.4,868.7 156.8,863.4 C161.3,858.2 165.5,857.5 171.6,850.0 C177.7,842.5 184.9,827.7 193.5,818.7 C202.0,809.6 218.1,799.6 223.0,795.8"/>
<path d="M1155.6,10.9 C1158.9,14.5 1167.9,26.8 1175.3,32.4 C1182.7,37.9 1192.8,42.7 1200.0,44.3 C1207.2,46.0 1215.3,42.8 1218.3,42.5"/>
<path d="M1168.9,277.5 C1175.4,276.7 1198.5,273.7 1208.0,272.7 C1217.5,271.6 1218.5,273.6 1226.0,271.1 C1233.4,268.6 1248.1,259.7 1252.6,257.5"/>
<path d="M739.8,492.8 C744.5,491.6 759.2,485.5 767.9,485.7 C776.6,486.0 781.5,493.3 792.1,494.3 C802.7,495.3 819.7,489.7 831.3,492.0 C842.9,494.2 853.0,504.4 861.6,507.6 C870.3,510.8 876.4,511.1 883.2,511.1 C890.0,511.1 895.9,511.9 902.5,507.8 C909.0,503.7 919.2,490.2 922.6,486.7"/>
<path d="M469.7,503.2 C468.3,506.0 464.3,513.6 461.3,520.1 C458.3,526.7 454.2,534.3 451.9,542.4 C449.6,550.6 448.3,564.7 447.5,569.1"/>
<path d="M1172.0,680.6 C1172.6,685.0 1177.3,699.2 1175.7,707.5 C1174.2,715.8 1166.3,722.4 1162.5,730.5 C1158.6,738.5 1153.5,744.9 1152.8,755.7 C1152.1,766.5 1153.5,785.2 1158.2,795.3 C1163.0,805.4 1176.6,809.2 1181.4,816.5 C1186.1,823.9 1185.9,835.7 1186.8,839.5"/>
<path d="M713.1,334.4 C712.5,337.6 711.3,347.8 709.7,354.0 C708.1,360.2 707.2,365.1 703.5,371.6 C699.7,378.2 693.7,385.5 687.3,393.2 C681.0,400.9 669.0,413.8 665.4,417.9"/>
<path d="M510.9,607.9 C507.7,612.7 499.2,629.5 491.7,636.5 C484.2,643.5 476.4,645.5 465.8,650.1 C455.3,654.6 438.6,658.1 428.4,663.9 C418.2,669.7 412.6,679.9 404.6,685.0 C396.6,690.2 388.7,692.9 380.2,694.9 C371.7,697.0 363.3,696.6 353.6,697.3 C344.0,698.0 327.4,698.7 322.2,698.9"/>
<path d="M792.6,282.8 C789.4,277.3 777.1,259.2 773.2,249.8 C769.4,240.3 768.2,236.0 769.5,226.3 C770.8,216.5 778.5,202.2 781.0,191.3 C783.5,180.3 782.3,172.1 784.2,160.5 C786.1,148.8 793.3,133.1 792.3,121.3 C791.4,109.5 783.1,97.9 778.7,89.4 C774.3,81.0 768.2,73.9 766.1,70.8"/>
<path d="M183.0,323.8 C182.8,319.2 181.3,306.4 182.1,295.7 C183.0,285.1 183.1,270.6 188.2,260.0 C193.3,249.4 208.2,241.2 212.6,232.1 C217.1,223.1 214.4,210.2 214.7,205.8"/>
<path d="M978.5,748.7 C980.7,752.5 985.8,763.6 991.5,771.6 C997.1,779.5 1006.5,789.1 1012.5,796.4 C1018.6,803.8 1023.6,808.9 1027.9,815.7 C1032.2,822.5 1036.5,833.8 1038.2,837.4"/>
<path d="M328.6,399.4 C330.5,402.5 336.5,412.4 339.9,418.1 C343.3,423.8 343.3,428.8 349.0,433.8 C354.6,438.9 365.8,442.4 373.7,448.4 C381.7,454.5 388.8,462.3 396.8,470.2 C404.8,478.0 413.1,489.1 421.9,495.5 C430.6,501.9 444.6,506.3 449.2,508.5"/>
<path d="M-19.0,224.1 C-21.6,221.0 -28.7,211.0 -34.4,205.6 C-40.2,200.3 -48.6,197.2 -53.3,191.9 C-58.0,186.7 -59.2,183.0 -62.5,174.1 C-65.7,165.3 -68.1,148.1 -72.8,138.7 C-77.5,129.3 -87.5,121.3 -90.4,117.9"/>
<path d="M930.8,560.8 C926.9,562.9 914.0,566.1 907.8,573.4 C901.5,580.8 899.9,597.5 893.4,604.9 C887.0,612.3 873.2,615.6 869.1,617.7"/>
<path d="M708.9,221.4 C711.9,225.8 724.1,237.2 726.5,247.6 C729.0,258.1 724.7,275.0 723.6,284.3 C722.5,293.5 719.2,294.1 720.0,303.3 C720.7,312.5 723.4,330.1 728.2,339.3 C732.9,348.5 741.3,352.6 748.4,358.4 C755.5,364.2 765.1,366.3 770.6,373.9 C776.2,381.5 779.9,399.1 781.7,404.1"/>
<path d="M930.0,81.3 C926.4,78.4 912.8,70.5 908.5,64.0 C904.2,57.5 908.1,49.2 904.2,42.5 C900.3,35.9 893.7,28.6 884.9,24.0 C876.1,19.5 860.5,15.2 851.4,15.3 C842.4,15.5 837.2,19.7 830.5,25.0 C823.7,30.4 814.1,43.8 810.8,47.6"/>
<path d="M1090.9,256.3 C1088.3,258.5 1079.2,264.4 1075.0,269.4 C1070.8,274.5 1070.0,281.9 1065.8,286.8 C1061.5,291.7 1054.2,291.4 1049.5,298.8 C1044.7,306.2 1040.8,322.9 1037.4,331.2 C1033.9,339.5 1034.0,341.4 1029.0,348.5 C1024.0,355.7 1010.9,369.9 1007.3,374.2"/>
<path d="M559.3,31.5 C559.7,28.0 561.3,17.2 561.7,10.5 C562.0,3.9 560.7,-1.3 561.3,-8.6 C561.9,-15.9 566.4,-22.8 565.2,-33.3 C564.1,-43.8 559.5,-61.3 554.4,-71.4 C549.3,-81.5 540.2,-87.6 534.8,-93.9 C529.5,-100.3 524.3,-106.8 522.2,-109.3"/>
<path d="M440.5,604.1 C439.0,608.4 432.0,621.7 431.9,630.0 C431.7,638.2 439.3,643.8 439.3,653.5 C439.3,663.2 435.8,679.6 432.0,688.4 C428.2,697.2 420.1,700.3 416.6,706.4 C413.2,712.4 413.5,717.6 411.2,724.7 C408.8,731.9 403.9,745.3 402.4,749.5"/>
<path d="M537.1,439.6 C535.3,435.8 530.7,425.3 526.2,416.6 C521.6,407.8 514.2,397.5 510.0,387.2 C505.8,376.8 505.0,361.7 500.8,354.4 C496.6,347.1 489.4,350.8 484.8,343.2 C480.2,335.7 475.1,314.8 473.1,309.1"/>
<path d="M22.4,186.5 C16.5,187.0 -2.6,189.3 -13.1,189.6 C-23.7,190.0 -32.8,191.5 -41.1,188.5 C-49.5,185.5 -58.3,177.4 -63.2,171.7 C-68.2,165.9 -69.4,156.8 -70.6,153.9"/>
<path d="M500.5,580.9 C504.0,584.2 512.5,596.9 521.7,600.6 C530.9,604.3 546.5,601.1 555.5,602.9 C564.4,604.7 572.1,609.9 575.4,611.3"/>
<path d="M245.0,657.2 C245.1,653.6 243.3,644.4 245.8,635.7 C248.3,627.0 255.5,614.4 259.8,605.0 C264.2,595.7 270.0,587.2 272.2,579.6 C274.3,572.1 272.7,563.0 272.8,559.6"/>
<path d="M40.4,190.3 C42.9,187.8 52.1,183.2 55.5,175.2 C58.9,167.2 62.8,153.2 61.0,142.4 C59.1,131.5 49.7,118.2 44.3,110.0 C38.8,101.8 33.4,99.4 28.2,93.4 C23.0,87.3 17.5,79.8 13.1,73.5 C8.6,67.1 3.5,58.4 1.6,55.4"/>
<path d="M1074.3,284.9 C1079.3,282.9 1094.8,279.5 1104.7,273.0 C1114.5,266.6 1126.8,253.6 1133.5,246.1 C1140.3,238.7 1141.8,236.4 1145.3,228.2 C1148.7,220.0 1152.9,202.3 1154.4,197.1"/>
<path d="M813.0,166.3 C816.7,170.3 825.6,184.9 835.1,190.7 C844.5,196.6 857.7,201.1 869.7,201.4 C881.7,201.7 895.0,191.2 907.0,192.6 C919.0,194.0 935.8,207.0 941.6,209.9"/>
<path d="M611.6,253.3 C605.8,255.8 585.2,263.0 576.7,268.5 C568.1,274.0 565.4,278.8 560.4,286.3 C555.3,293.9 551.6,306.8 546.5,313.9 C541.5,321.0 536.9,322.5 530.1,329.1 C523.2,335.8 515.3,347.2 505.4,353.9 C495.6,360.5 476.6,366.6 470.8,369.2"/>
<path d="M674.5,261.9 C672.8,258.0 664.9,247.6 664.3,238.4 C663.7,229.3 671.6,215.9 671.0,206.7 C670.4,197.6 662.4,187.4 660.7,183.6"/>
<path d="M519.5,212.6 C516.2,207.5 503.5,193.1 499.2,182.5 C494.9,171.9 495.9,160.2 493.7,149.0 C491.6,137.8 489.8,123.6 486.1,115.4 C482.3,107.3 473.6,102.5 471.1,99.9"/>
<path d="M451.9,13.7 C457.0,12.1 474.0,9.2 482.6,3.8 C491.1,-1.7 497.6,-11.4 503.3,-18.9 C509.0,-26.5 511.9,-35.1 516.7,-41.5 C521.4,-47.9 527.2,-48.3 531.6,-57.1 C536.0,-65.9 540.7,-81.8 543.0,-94.1 C545.4,-106.3 542.4,-120.5 545.4,-130.5 C548.4,-140.6 558.6,-150.4 561.3,-154.3"/>
<path d="M158.8,68.4 C160.1,64.6 163.7,53.3 166.5,45.7 C169.3,38.0 174.2,31.3 175.9,22.4 C177.6,13.4 176.6,-3.0 176.7,-8.1"/>
<path d="M30.5,220.9 C33.8,219.2 45.1,215.9 50.7,211.0 C56.2,206.2 57.2,197.1 63.8,191.8 C70.3,186.4 82.5,180.8 89.8,179.0 C97.2,177.2 101.4,177.3 108.1,180.7 C114.8,184.1 126.2,196.4 129.8,199.5"/>
<path d="M929.3,516.2 C926.3,514.1 917.5,511.7 911.4,503.7 C905.3,495.8 898.9,478.7 892.8,468.4 C886.8,458.1 882.7,448.5 875.1,442.0 C867.6,435.5 852.0,431.3 847.4,429.2"/>
<path d="M124.9,604.1 C125.3,609.9 127.7,630.2 127.4,639.2 C127.1,648.2 123.1,649.8 123.0,658.1 C123.0,666.4 128.1,681.2 127.1,689.0 C126.2,696.9 118.9,702.5 117.3,705.2"/>
<path d="M721.9,630.3 C720.9,624.6 717.0,605.5 715.8,596.2 C714.6,586.8 716.9,584.0 714.8,574.2 C712.7,564.4 704.9,546.7 703.3,537.4 C701.7,528.2 703.1,525.0 705.1,518.8 C707.1,512.6 713.6,503.3 715.3,500.2"/>
<path d="M593.7,137.1 C592.9,130.8 589.2,110.9 589.3,99.0 C589.3,87.1 594.7,74.0 594.1,65.8 C593.6,57.5 587.2,55.4 586.1,49.6 C585.0,43.8 587.2,34.0 587.4,30.8"/>
<path d="M610.7,290.2 C613.7,292.4 621.5,296.7 628.8,303.3 C636.1,309.8 648.9,322.1 654.3,329.5 C659.8,337.0 660.1,340.8 661.6,348.2 C663.0,355.6 659.6,364.0 663.2,373.9 C666.9,383.7 678.3,396.5 683.3,407.6 C688.4,418.7 687.3,430.8 693.4,440.5 C699.4,450.1 715.2,461.3 719.6,465.5"/>
<path d="M1104.6,830.5 C1102.4,826.6 1095.9,817.3 1091.8,807.3 C1087.8,797.3 1083.8,782.1 1080.2,770.4 C1076.7,758.8 1072.9,748.2 1070.5,737.4 C1068.0,726.5 1066.2,713.9 1065.4,705.4 C1064.7,696.8 1063.4,694.5 1066.0,685.9 C1068.5,677.2 1074.0,663.2 1080.7,653.4 C1087.4,643.6 1102.1,631.6 1106.4,627.3"/>
<path d="M268.1,532.4 C262.5,529.3 241.4,519.9 234.2,514.2 C226.9,508.4 227.4,504.7 224.5,497.7 C221.5,490.7 218.5,482.3 216.5,472.3 C214.4,462.2 214.3,447.4 212.0,437.5 C209.8,427.6 203.5,420.6 203.1,412.7 C202.6,404.9 208.4,394.3 209.4,390.6"/>
<path d="M786.3,724.3 C785.9,721.3 784.8,712.4 783.9,706.4 C783.0,700.3 785.4,695.8 781.1,688.2 C776.9,680.6 765.8,668.8 758.2,660.7 C750.6,652.5 742.5,645.4 735.5,639.1 C728.5,632.7 723.5,626.7 716.1,622.7 C708.8,618.7 695.6,616.3 691.5,615.0"/>
<path d="M993.4,562.1 C990.4,564.3 982.9,572.5 975.4,574.9 C967.9,577.4 956.9,576.4 948.5,576.8 C940.1,577.2 929.1,577.2 925.2,577.2"/>
<path d="M239.6,569.5 C237.1,572.9 227.6,582.9 224.6,589.9 C221.5,596.9 221.6,601.8 221.4,611.4 C221.3,620.9 226.2,635.4 223.6,647.2 C221.0,659.0 208.8,676.3 205.8,682.1"/>
<path d="M350.3,279.4 C352.4,273.7 361.4,256.0 363.0,245.4 C364.6,234.9 362.8,223.4 359.6,216.0 C356.4,208.6 347.3,208.1 343.7,201.0 C340.2,193.9 338.3,181.9 338.4,173.5 C338.5,165.1 343.0,157.9 344.0,150.7 C345.1,143.5 344.0,140.0 344.7,130.5 C345.5,121.0 348.1,99.8 348.8,93.7"/>
<path d="M596.6,334.1 C599.8,333.4 608.0,330.8 615.9,329.9 C623.7,329.0 635.4,326.5 643.6,328.7 C651.8,331.0 657.9,337.0 665.0,343.3 C672.2,349.7 679.2,359.9 686.7,366.8 C694.2,373.6 706.3,381.7 710.2,384.6"/>
<path d="M791.9,832.8 C788.9,832.0 781.5,833.3 774.1,828.1 C766.7,822.9 756.1,807.1 747.4,801.6 C738.7,796.2 731.1,796.2 721.9,795.2 C712.8,794.2 702.1,793.1 692.7,795.7 C683.2,798.2 669.8,808.2 665.2,810.8"/>
<path d="M530.7,871.3 C525.2,868.2 508.7,855.8 498.1,852.5 C487.5,849.2 475.5,852.3 467.2,851.7 C458.9,851.1 451.5,849.6 448.3,849.2"/>
<path d="M450.7,682.5 C448.8,679.1 441.7,668.6 439.4,662.1 C437.2,655.6 437.8,651.2 437.2,643.7 C436.5,636.1 439.8,626.5 435.7,616.7 C431.6,607.0 418.5,595.0 412.6,585.5 C406.7,575.9 402.3,563.7 400.3,559.4"/>
<path d="M1149.5,318.6 C1151.9,314.1 1156.7,299.5 1163.8,291.5 C1171.0,283.6 1185.4,276.8 1192.5,270.7 C1199.7,264.6 1200.0,262.2 1206.6,255.0 C1213.2,247.8 1226.3,237.8 1232.1,227.7 C1237.9,217.7 1239.9,200.3 1241.5,194.8"/>
<path d="M184.8,273.3 C188.0,278.2 196.8,293.8 203.9,302.7 C210.9,311.6 217.6,319.7 227.0,326.6 C236.5,333.5 250.1,338.8 260.4,344.0 C270.7,349.2 281.9,351.5 288.9,357.7 C295.9,363.8 300.2,377.0 302.4,380.9"/>
<path d="M797.9,320.1 C797.5,323.8 798.7,335.1 795.4,342.4 C792.0,349.8 785.6,358.3 777.8,364.1 C769.9,369.8 757.5,374.7 748.5,377.0 C739.4,379.3 732.7,374.7 723.5,377.6 C714.4,380.6 702.7,389.1 693.3,394.6 C684.0,400.1 671.9,407.9 667.6,410.6"/>
<path d="M784.7,687.5 C782.7,691.5 779.6,703.6 772.8,711.4 C766.0,719.1 750.5,726.1 744.0,734.2 C737.6,742.4 734.1,751.2 734.0,760.2 C733.8,769.3 741.5,779.7 743.2,788.5 C744.9,797.3 744.0,809.1 744.1,813.2"/>
<path d="M702.6,318.2 C705.7,319.5 712.8,321.7 721.1,326.1 C729.3,330.6 743.9,337.0 752.0,345.0 C760.1,352.9 766.8,368.8 769.8,373.6"/>
<path d="M1096.0,136.0 C1096.4,140.4 1100.7,153.2 1098.1,162.6 C1095.5,171.9 1084.8,182.9 1080.5,192.0 C1076.2,201.2 1073.6,213.1 1072.2,217.3"/>
<path d="M946.9,308.7 C948.6,313.3 954.7,325.5 957.2,336.3 C959.7,347.2 958.6,364.2 961.8,373.9 C965.1,383.5 970.2,389.5 976.9,394.4 C983.7,399.2 998.3,401.6 1002.6,403.1"/>
<path d="M582.6,780.8 C580.4,777.7 573.4,771.0 569.5,762.2 C565.7,753.5 561.4,740.2 559.4,728.4 C557.5,716.7 560.2,701.1 558.0,691.7 C555.7,682.3 548.2,679.3 546.0,672.2 C543.7,665.1 547.0,656.2 544.5,649.0 C542.0,641.8 539.5,634.4 531.0,628.9 C522.6,623.4 500.0,618.3 493.8,616.2"/>
<path d="M1096.3,338.1 C1094.8,341.8 1087.5,351.5 1087.1,360.3 C1086.7,369.1 1093.6,381.9 1093.7,390.9 C1093.9,399.9 1088.3,406.5 1088.0,414.2 C1087.6,421.8 1087.4,429.0 1091.6,436.8 C1095.9,444.7 1109.5,451.3 1113.5,461.3 C1117.6,471.3 1115.5,491.0 1115.8,496.9"/>
<path d="M411.7,637.5 C416.3,637.7 430.8,636.9 439.7,639.1 C448.6,641.3 454.8,646.0 465.0,650.7 C475.2,655.4 490.5,661.8 500.8,667.3 C511.2,672.8 517.8,681.5 527.2,683.8 C536.5,686.1 551.9,681.5 556.9,681.0"/>
<path d="M541.1,434.7 C537.1,437.7 523.9,445.2 517.3,452.5 C510.8,459.8 507.6,471.8 501.5,478.3 C495.5,484.7 489.7,489.6 481.2,491.4 C472.7,493.1 459.2,490.5 450.6,488.5 C442.0,486.6 432.9,481.3 429.4,479.8"/>
<path d="M187.6,742.1 C190.2,746.8 199.4,760.4 202.9,770.1 C206.4,779.8 206.0,790.8 208.5,800.5 C211.0,810.1 215.5,819.8 217.8,828.2 C220.1,836.6 223.7,840.7 222.4,850.7 C221.1,860.8 212.1,882.3 210.0,888.7"/>
<path d="M945.0,883.7 C945.5,888.4 944.7,903.5 947.9,912.0 C951.0,920.6 959.4,925.9 964.0,934.9 C968.6,944.0 972.1,957.2 975.8,966.4 C979.5,975.5 981.1,982.8 986.2,989.6 C991.3,996.5 1003.1,1004.3 1006.5,1007.3"/>
<path d="M319.1,162.6 C315.0,158.3 300.9,146.8 294.8,137.2 C288.7,127.6 284.7,114.2 282.7,105.1 C280.8,96.0 280.9,92.0 283.3,82.6 C285.6,73.3 294.0,60.3 296.9,48.8 C299.7,37.3 302.8,24.4 300.3,13.7 C297.7,3.0 286.0,-7.5 281.7,-15.1 C277.4,-22.7 275.6,-29.1 274.4,-31.9"/>
<path d="M404.7,372.8 C405.6,368.6 410.5,356.9 410.0,347.6 C409.5,338.2 401.3,325.7 401.6,316.8 C401.9,307.9 410.9,301.5 411.8,294.2 C412.7,286.9 410.5,282.2 407.1,272.9 C403.8,263.6 394.3,248.8 391.8,238.3 C389.3,227.9 393.8,217.9 392.1,210.3 C390.4,202.8 383.2,195.9 381.5,193.0"/>
<path d="M164.7,710.8 C159.2,708.5 143.0,701.6 131.9,697.1 C120.8,692.7 107.2,685.9 98.2,684.3 C89.2,682.7 81.4,687.0 78.0,687.5"/>
<path d="M656.1,457.5 C656.3,463.9 655.5,486.0 657.5,496.1 C659.6,506.1 666.4,509.1 668.4,517.6 C670.3,526.1 671.0,536.8 669.1,547.0 C667.3,557.2 658.5,567.3 657.2,578.8 C656.0,590.4 660.9,610.0 661.6,616.3"/>
<path d="M504.0,110.0 C506.3,112.1 512.9,114.4 517.7,122.6 C522.5,130.8 525.4,149.7 532.7,159.0 C540.1,168.4 551.9,174.7 561.7,178.9 C571.6,183.2 582.4,179.4 591.8,184.6 C601.2,189.8 609.6,203.3 618.4,210.2 C627.2,217.0 634.9,220.4 644.4,225.7 C653.9,231.1 670.1,239.3 675.3,242.1"/>
<path d="M1064.9,-13.1 C1066.3,-10.1 1071.1,-1.2 1073.7,5.2 C1076.3,11.5 1076.0,18.1 1080.3,24.9 C1084.6,31.6 1093.0,37.7 1099.3,45.5 C1105.5,53.3 1113.3,62.8 1117.9,71.5 C1122.6,80.2 1125.5,93.3 1127.0,97.6"/>
<path d="M61.1,661.0 C66.4,660.3 81.7,655.2 93.2,657.0 C104.7,658.7 120.3,666.3 130.1,671.8 C139.9,677.2 146.6,681.8 152.0,689.7 C157.5,697.5 157.3,711.1 162.9,719.1 C168.4,727.0 176.7,731.5 185.3,737.3 C193.9,743.1 209.5,751.1 214.3,753.9"/>
<path d="M940.0,815.9 C945.4,818.4 962.6,825.2 972.7,831.0 C982.9,836.9 992.7,847.8 1000.6,851.0 C1008.6,854.3 1012.6,847.1 1020.7,850.5 C1028.8,854.0 1041.3,868.3 1049.3,871.9 C1057.2,875.4 1059.2,874.1 1068.3,871.8 C1077.5,869.5 1094.3,864.0 1104.2,857.9 C1114.2,851.8 1124.0,839.1 1128.0,835.3"/>
<path d="M1096.4,580.3 C1098.4,576.0 1103.6,564.8 1108.0,554.5 C1112.4,544.2 1116.2,529.0 1122.9,518.4 C1129.7,507.9 1143.6,499.2 1148.6,491.2 C1153.5,483.2 1150.7,479.0 1152.6,470.4 C1154.4,461.8 1158.6,444.8 1159.8,439.7"/>
<path d="M367.9,459.2 C370.8,460.1 378.7,460.2 385.1,464.8 C391.5,469.3 401.1,478.3 406.1,486.5 C411.1,494.7 412.9,504.4 415.2,514.1 C417.4,523.8 419.9,536.6 419.8,544.8 C419.7,553.1 413.7,556.0 414.6,563.8 C415.4,571.7 423.2,587.3 425.0,592.0"/>
<path d="M329.2,353.1 C334.1,349.6 349.2,336.5 358.7,332.1 C368.2,327.8 377.6,331.4 386.3,327.0 C395.0,322.7 404.7,313.6 410.8,306.0 C416.8,298.3 420.7,285.4 422.7,281.2"/>
<path d="M112.5,897.9 C109.6,896.2 104.4,890.4 95.4,887.6 C86.4,884.9 66.9,884.8 58.5,881.2 C50.2,877.6 51.1,870.8 45.4,866.2 C39.6,861.6 32.2,856.9 24.0,853.6 C15.8,850.3 0.7,847.7 -4.0,846.5"/>
<path d="M671.5,294.8 C674.3,296.7 682.2,300.6 688.3,306.5 C694.4,312.5 701.9,322.9 708.1,330.6 C714.3,338.3 722.5,349.0 725.3,352.7"/>
<path d="M468.9,554.4 C468.5,548.3 466.3,527.1 466.7,518.0 C467.1,508.9 467.6,508.3 471.2,499.9 C474.9,491.5 485.8,473.0 488.7,467.6"/>
<path d="M496.9,805.5 C499.7,810.3 507.7,827.0 513.7,834.5 C519.6,842.0 525.6,845.8 532.5,850.4 C539.3,855.0 546.3,860.6 554.6,862.2 C563.0,863.8 573.2,857.4 582.3,860.1 C591.4,862.8 604.6,875.2 609.1,878.3"/>
<path d="M1098.6,696.6 C1099.5,692.8 1102.8,680.6 1104.0,673.7 C1105.2,666.8 1107.3,664.4 1106.0,655.4 C1104.6,646.3 1096.3,629.2 1095.9,619.2 C1095.6,609.2 1098.8,603.7 1103.9,595.3 C1108.9,586.8 1122.6,572.9 1126.4,568.4"/>
<path d="M1047.8,726.9 C1042.3,729.6 1023.8,738.0 1014.7,742.9 C1005.6,747.8 998.1,750.9 993.1,756.3 C988.1,761.6 986.3,772.1 984.9,775.2"/>
<path d="M529.6,178.8 C536.0,178.7 557.4,175.4 567.8,178.0 C578.3,180.6 585.3,187.1 592.4,194.2 C599.5,201.3 606.0,212.6 610.4,220.5 C614.9,228.4 617.5,231.8 619.2,241.5 C620.9,251.3 621.5,268.3 620.6,279.0 C619.6,289.6 612.9,294.9 613.5,305.5 C614.0,316.2 622.1,336.7 623.9,342.9"/>
<path d="M712.7,557.4 C713.4,561.3 714.5,574.0 716.7,580.5 C718.9,587.1 723.4,590.4 725.8,596.8 C728.2,603.1 726.8,609.6 731.2,618.7 C735.7,627.8 747.2,641.3 752.7,651.5 C758.2,661.8 762.3,675.5 764.2,680.3"/>
<path d="M767.3,542.0 C762.8,538.6 747.0,527.2 739.9,521.8 C732.8,516.4 732.3,511.9 724.7,509.4 C717.1,506.9 704.5,509.3 694.6,506.8 C684.6,504.2 675.5,498.8 664.8,494.2 C654.2,489.6 636.4,481.7 630.7,479.2"/>
<path d="M1084.9,403.0 C1087.6,399.5 1095.0,388.1 1101.5,381.8 C1108.0,375.5 1116.9,369.0 1123.8,365.2 C1130.7,361.4 1135.6,358.8 1142.9,358.9 C1150.2,359.1 1161.0,362.8 1167.4,366.1 C1173.8,369.4 1178.8,376.7 1181.1,378.9"/>
<path d="M974.5,192.7 C977.7,190.2 989.5,183.8 993.4,177.7 C997.3,171.6 994.8,162.2 998.1,156.0 C1001.4,149.8 1006.3,146.0 1013.2,140.7 C1020.0,135.4 1031.4,128.1 1039.2,124.1 C1047.0,120.1 1056.5,117.9 1059.9,116.7"/>
<path d="M152.4,71.3 C155.4,69.8 164.3,65.1 170.3,62.5 C176.4,60.0 182.3,59.5 188.6,56.2 C194.9,52.8 198.4,44.7 208.0,42.2 C217.7,39.8 235.3,42.7 246.6,41.5 C257.9,40.3 267.6,38.8 275.8,34.9 C284.1,31.1 292.8,21.3 296.2,18.6"/>
<path d="M864.6,328.3 C864.6,334.6 862.1,354.8 864.8,366.3 C867.5,377.7 878.4,388.9 880.6,397.2 C882.8,405.4 878.6,412.6 878.2,415.7"/>
<path d="M758.3,813.4 C756.6,807.4 751.3,785.8 747.8,777.3 C744.3,768.8 743.1,766.6 737.3,762.4 C731.5,758.3 721.0,754.9 713.1,752.3 C705.1,749.8 698.1,748.9 689.4,747.2 C680.7,745.6 665.8,743.1 661.1,742.3"/>
<path d="M111.9,502.0 C107.9,504.6 94.0,511.8 88.0,517.7 C82.1,523.7 79.8,531.2 76.4,537.6 C73.0,544.1 68.3,548.9 67.5,556.2 C66.7,563.6 69.6,571.3 71.6,581.9 C73.6,592.4 77.6,610.1 79.3,619.7 C81.0,629.2 81.4,635.9 81.8,639.1"/>
<path d="M246.9,679.6 C240.5,680.5 218.8,684.0 208.6,685.4 C198.3,686.8 194.5,684.3 185.4,688.1 C176.4,691.9 161.4,702.2 154.4,708.3 C147.4,714.4 146.9,715.8 143.4,724.8 C139.9,733.7 136.3,750.0 133.4,761.8 C130.6,773.5 127.6,789.6 126.4,795.1"/>
<path d="M69.3,405.8 C68.6,411.7 63.2,430.2 65.1,440.9 C67.0,451.7 76.2,462.2 80.7,470.5 C85.3,478.9 88.0,483.0 92.5,491.1 C97.1,499.1 105.4,514.2 108.0,518.9"/>
<path d="M953.9,828.5 C951.6,825.4 945.7,817.0 940.5,809.6 C935.2,802.2 926.7,791.6 922.3,784.1 C917.9,776.6 915.3,767.9 913.9,764.6"/>
<path d="M944.4,868.8 C945.2,863.5 947.3,845.0 949.5,836.9 C951.6,828.8 953.9,828.3 957.2,820.3 C960.6,812.3 965.9,799.9 969.8,788.8 C973.8,777.7 979.1,766.3 981.0,753.9 C982.9,741.5 981.3,721.0 981.3,714.4"/>
<path d="M987.1,266.2 C983.3,268.5 971.0,277.0 964.3,280.3 C957.6,283.5 953.4,286.1 946.8,285.7 C940.3,285.4 933.2,281.0 924.9,278.3 C916.6,275.7 901.6,271.3 896.9,269.9"/>
<path d="M1118.0,442.6 C1121.2,444.4 1130.4,449.8 1137.3,453.6 C1144.2,457.3 1153.1,460.0 1159.4,464.9 C1165.6,469.9 1172.0,474.5 1174.7,483.3 C1177.5,492.1 1173.3,509.3 1175.8,517.9 C1178.3,526.5 1183.4,528.2 1189.7,534.9 C1196.1,541.5 1206.2,549.8 1214.1,558.0 C1221.9,566.3 1233.1,580.1 1236.9,584.5"/>
<path d="M266.1,766.7 C268.2,771.0 274.8,784.0 278.5,792.4 C282.2,800.7 283.4,809.1 288.3,817.0 C293.3,824.9 301.1,833.7 308.3,839.9 C315.5,846.0 324.8,845.5 331.6,853.8 C338.4,862.1 346.3,883.7 349.3,889.6"/>
<path d="M142.3,281.9 C141.1,278.6 137.2,269.5 134.9,261.6 C132.5,253.7 131.7,244.8 128.4,234.4 C125.2,224.0 118.3,211.2 115.2,199.2 C112.2,187.3 111.2,168.7 110.4,162.6"/>
<path d="M1128.3,232.8 C1131.1,229.1 1136.2,217.4 1144.8,210.7 C1153.3,203.9 1170.5,195.2 1179.5,192.4 C1188.6,189.6 1192.5,192.2 1199.0,194.0 C1205.6,195.8 1212.3,201.9 1218.8,203.2 C1225.4,204.5 1231.2,203.0 1238.4,201.8 C1245.6,200.6 1258.3,196.9 1262.3,195.9"/>
<path d="M775.8,643.3 C770.4,642.5 754.8,640.6 743.7,638.1 C732.7,635.5 719.6,634.6 709.5,628.1 C699.5,621.5 690.8,605.0 683.4,598.9 C676.1,592.7 671.3,596.5 665.4,591.0 C659.5,585.5 655.8,572.8 648.1,565.8 C640.4,558.8 624.1,552.0 619.3,549.2"/>
<path d="M286.8,202.4 C284.5,207.9 277.3,227.7 273.0,235.7 C268.7,243.8 266.1,246.0 261.0,250.8 C256.0,255.6 250.0,257.2 242.9,264.4 C235.8,271.6 225.1,285.5 218.6,293.9 C212.2,302.4 211.9,307.7 204.0,314.8 C196.2,322.0 181.8,332.9 171.7,336.7 C161.7,340.6 148.2,337.9 143.5,338.2"/>
<path d="M369.1,893.0 C372.4,894.8 379.5,899.6 388.9,903.8 C398.2,908.1 416.9,912.8 425.3,918.3 C433.6,923.8 436.7,933.8 439.0,936.9"/>
<path d="M862.3,318.1 C859.0,316.3 849.6,309.3 842.3,307.0 C835.0,304.8 825.5,303.1 818.6,304.5 C811.6,305.9 807.1,310.7 800.6,315.4 C794.1,320.0 784.4,324.7 779.3,332.4 C774.3,340.2 771.6,356.9 770.1,361.8"/>
<path d="M1110.9,522.3 C1108.5,527.8 1102.5,545.5 1096.8,555.3 C1091.0,565.1 1083.5,574.6 1076.2,581.0 C1068.9,587.4 1059.4,587.1 1052.8,593.8 C1046.3,600.5 1040.6,611.8 1036.7,621.3 C1032.8,630.7 1030.0,641.8 1029.5,650.5 C1029.0,659.2 1032.9,669.8 1033.5,673.6"/>
<path d="M690.6,702.8 C687.7,704.9 677.5,708.8 673.0,715.3 C668.4,721.7 668.2,732.3 663.4,741.6 C658.6,750.8 647.1,759.6 644.3,770.7 C641.5,781.9 646.4,797.6 646.4,808.4 C646.4,819.2 644.7,830.9 644.3,835.4"/>
<path d="M652.8,7.3 C651.7,3.6 649.9,-8.8 646.4,-15.3 C642.9,-21.7 635.2,-23.0 631.8,-31.5 C628.3,-40.0 628.3,-57.8 625.8,-66.3 C623.2,-74.7 617.8,-79.5 616.2,-82.1"/>
<path d="M79.0,63.2 C81.6,67.4 88.6,80.9 94.5,88.2 C100.4,95.6 107.9,101.3 114.1,107.0 C120.3,112.8 125.5,119.9 131.7,122.9 C137.9,125.9 145.0,125.9 151.4,125.1 C157.9,124.3 161.6,120.3 170.2,118.1 C178.7,115.8 197.4,112.9 202.9,111.8"/>
<path d="M295.5,724.2 C295.1,720.7 293.1,713.4 292.8,703.3 C292.4,693.2 290.9,675.4 293.4,663.5 C296.0,651.7 302.2,640.3 308.3,632.4 C314.3,624.4 324.5,621.0 329.9,615.8 C335.4,610.5 339.0,603.4 340.8,601.0"/>
<path d="M353.7,47.8 C350.0,48.0 341.0,50.2 331.5,49.0 C322.0,47.8 305.7,44.3 296.8,40.6 C287.9,36.8 281.4,29.0 278.4,26.7"/>
<path d="M92.0,603.6 C85.8,605.4 65.8,608.5 54.9,614.0 C43.9,619.6 35.3,629.1 26.3,636.7 C17.3,644.3 8.5,652.6 0.6,659.8 C-7.4,666.9 -17.7,676.1 -21.4,679.4"/>
<path d="M378.2,33.7 C380.3,37.2 386.6,46.0 390.4,54.8 C394.2,63.5 398.3,74.8 401.1,86.2 C404.0,97.7 406.4,117.3 407.4,123.5"/>
<path d="M225.6,272.5 C222.7,270.9 215.3,266.5 208.6,263.1 C202.0,259.7 193.6,257.5 185.7,252.0 C177.8,246.4 168.5,238.5 161.3,229.8 C154.2,221.0 148.9,208.2 142.7,199.3 C136.4,190.4 127.0,180.4 123.8,176.6"/>
<path d="M347.7,708.2 C348.7,712.9 348.8,727.1 354.0,736.7 C359.3,746.4 374.1,756.5 379.1,766.0 C384.1,775.5 381.3,786.2 384.1,793.7 C386.9,801.1 391.1,803.8 395.8,810.7 C400.5,817.6 409.5,831.0 412.3,835.1"/>
<path d="M415.4,653.3 C412.4,654.5 404.3,656.8 397.2,660.4 C390.0,663.9 380.0,668.2 372.4,674.7 C364.8,681.3 354.9,695.6 351.4,699.8"/>
<path d="M246.3,279.1 C242.0,278.1 231.4,275.1 220.8,273.1 C210.2,271.1 193.0,271.7 182.9,267.0 C172.7,262.4 168.5,249.7 160.1,245.1 C151.7,240.5 141.0,241.7 132.7,239.2 C124.4,236.6 120.6,229.7 110.5,229.7 C100.4,229.7 78.5,237.6 72.1,239.2"/>
<path d="M1071.6,101.2 C1068.1,105.3 1059.1,119.8 1050.5,125.9 C1042.0,132.0 1029.3,133.0 1020.2,137.8 C1011.1,142.5 1002.5,146.6 995.8,154.2 C989.2,161.9 987.1,174.9 980.5,183.8 C973.9,192.8 961.2,197.8 956.4,208.1 C951.6,218.5 954.2,234.9 951.6,245.8 C949.1,256.7 942.8,268.9 941.1,273.6"/>
<path d="M820.2,277.0 C823.0,274.8 831.9,271.0 837.2,263.5 C842.5,256.0 848.1,241.2 852.0,232.0 C855.9,222.7 859.7,215.8 860.4,208.0 C861.1,200.1 855.1,191.9 856.0,185.1 C856.8,178.2 863.0,175.4 865.3,166.7 C867.6,158.0 865.1,143.3 869.8,132.7 C874.5,122.1 889.7,108.2 893.7,103.3"/>
<path d="M547.3,879.0 C545.0,875.2 540.5,863.5 533.3,856.4 C526.1,849.3 512.7,844.9 504.1,836.5 C495.5,828.0 489.2,815.6 481.8,805.5 C474.5,795.4 466.9,785.5 459.8,775.7 C452.7,765.8 442.6,751.4 439.2,746.6"/>
<path d="M13.2,462.1 C17.8,459.5 32.1,453.3 40.9,446.9 C49.6,440.5 56.1,428.8 65.5,423.4 C74.9,418.0 88.8,416.1 97.3,414.5 C105.8,412.8 113.3,413.6 116.5,413.5"/>
<path d="M-19.9,197.8 C-24.1,202.5 -36.9,220.3 -45.3,225.8 C-53.7,231.2 -60.1,231.6 -70.0,230.7 C-79.9,229.9 -94.4,222.0 -104.5,220.5 C-114.6,219.0 -122.0,220.4 -130.5,221.5 C-139.1,222.6 -151.5,226.1 -155.7,227.0"/>
<path d="M433.9,83.6 C432.6,89.3 429.6,106.0 426.4,117.8 C423.3,129.5 420.5,144.1 414.9,154.0 C409.3,164.0 397.3,167.4 392.9,177.5 C388.4,187.6 387.8,205.2 388.2,214.8 C388.5,224.3 391.2,227.6 395.1,234.9 C399.1,242.2 408.9,254.8 411.7,258.8"/>
<path d="M371.1,390.8 C369.4,394.7 365.8,407.4 360.9,414.0 C355.9,420.7 350.6,426.5 341.4,430.7 C332.3,434.8 315.0,438.6 305.7,438.9 C296.4,439.3 289.0,433.7 285.6,432.6"/>
<path d="M1105.9,679.6 C1105.6,673.5 1100.7,654.4 1104.1,643.1 C1107.6,631.8 1120.4,620.7 1126.8,611.6 C1133.1,602.4 1139.7,592.0 1142.2,588.0"/>
<path d="M878.7,767.1 C877.1,764.1 873.0,754.5 869.4,749.2 C865.7,743.9 860.3,741.2 857.1,735.3 C853.9,729.3 853.8,719.0 850.1,713.3 C846.4,707.7 839.3,706.5 834.8,701.3 C830.2,696.2 824.7,685.7 822.7,682.5"/>
<path d="M534.5,357.7 C534.8,352.4 533.4,335.1 536.5,325.9 C539.6,316.7 544.9,308.8 552.9,302.7 C560.8,296.7 574.2,295.6 584.4,289.6 C594.5,283.6 606.0,272.4 613.8,266.8 C621.6,261.2 622.7,260.4 631.1,256.0 C639.4,251.7 658.4,243.3 663.9,240.8"/>
<path d="M602.2,435.0 C599.7,438.5 592.2,446.5 586.8,455.9 C581.4,465.2 575.0,482.7 570.0,491.1 C564.9,499.6 561.6,503.3 556.3,506.7 C551.0,510.2 541.2,510.9 538.2,511.8"/>
<path d="M689.0,386.4 C690.8,383.2 696.8,375.0 699.5,367.0 C702.2,359.0 702.6,345.9 705.4,338.3 C708.1,330.6 709.8,326.9 715.8,321.0 C721.8,315.1 735.7,310.0 741.4,302.9 C747.1,295.8 743.9,285.7 750.0,278.3 C756.1,270.9 773.3,261.8 777.9,258.6"/>
<path d="M169.3,578.7 C173.4,579.0 184.2,581.1 193.9,580.4 C203.6,579.7 217.8,578.3 227.5,574.5 C237.2,570.6 243.5,563.2 252.1,557.2 C260.6,551.2 271.5,547.4 278.8,538.5 C286.2,529.5 288.7,511.3 296.2,503.5 C303.7,495.6 319.4,493.4 324.0,491.4"/>
<path d="M934.3,152.3 C937.7,152.2 948.1,151.6 954.7,151.7 C961.3,151.7 966.6,155.2 973.9,152.9 C981.2,150.5 988.3,140.0 998.5,137.4 C1008.8,134.9 1023.8,135.8 1035.3,137.5 C1046.7,139.2 1057.4,146.3 1067.4,147.5 C1077.4,148.8 1087.6,147.4 1095.4,144.8 C1103.3,142.3 1111.3,134.5 1114.4,132.4"/>
<path d="M163.8,392.0 C167.6,393.3 178.0,398.4 186.2,399.7 C194.5,401.1 204.2,400.0 213.5,400.3 C222.7,400.6 234.4,402.8 241.8,401.4 C249.1,400.1 254.8,393.7 257.4,392.2"/>
<path d="M388.2,653.9 C388.4,650.0 387.3,638.0 389.3,630.8 C391.3,623.6 398.1,620.0 400.2,610.5 C402.3,600.9 397.8,583.8 401.7,573.3 C405.6,562.8 420.0,551.8 423.6,547.5"/>
<path d="M111.8,414.6 C105.9,413.0 84.6,408.9 76.7,404.8 C68.8,400.7 66.7,397.2 64.3,390.2 C61.9,383.1 64.4,369.7 62.1,362.5 C59.7,355.3 52.1,349.6 50.1,347.1"/>
<path d="M936.2,617.0 C939.7,618.6 949.5,622.8 956.9,626.5 C964.3,630.2 972.1,632.4 980.7,639.3 C989.2,646.2 998.1,660.7 1008.4,668.0 C1018.6,675.4 1032.1,679.7 1042.2,683.3 C1052.4,686.8 1059.3,688.6 1069.1,689.3 C1079.0,690.1 1095.8,688.2 1101.1,687.9"/>
<path d="M514.6,114.0 C511.6,112.0 503.1,106.5 496.1,102.1 C489.0,97.7 478.0,94.7 472.4,87.8 C466.7,81.0 463.8,65.5 462.1,61.0"/>
<path d="M1113.8,423.1 C1115.3,427.7 1118.5,442.8 1122.8,450.7 C1127.0,458.6 1133.9,465.1 1139.1,470.6 C1144.3,476.1 1145.7,480.4 1153.8,483.5 C1161.9,486.5 1176.3,488.4 1187.5,488.9 C1198.7,489.4 1210.4,484.8 1220.9,486.6 C1231.4,488.3 1239.9,495.0 1250.5,499.3 C1261.1,503.5 1278.9,509.9 1284.6,512.0"/>
<path d="M637.5,19.1 C637.6,13.8 635.3,-3.7 637.9,-12.7 C640.5,-21.7 648.6,-27.6 653.1,-34.8 C657.6,-42.1 660.0,-48.2 665.0,-56.3 C670.0,-64.4 674.8,-75.0 682.9,-83.5 C691.0,-92.0 706.8,-99.4 713.6,-107.4 C720.5,-115.3 722.4,-127.2 724.1,-131.2"/>
<path d="M1001.9,723.6 C995.8,721.4 975.5,714.5 965.3,710.6 C955.2,706.6 948.3,701.5 940.7,699.8 C933.2,698.2 928.8,703.4 920.2,700.5 C911.6,697.7 894.5,685.7 889.3,682.7"/>
<path d="M12.1,283.8 C7.7,285.9 -7.9,289.9 -14.5,296.5 C-21.2,303.1 -22.4,316.3 -27.7,323.5 C-33.1,330.7 -40.3,336.8 -46.9,339.8 C-53.5,342.9 -59.2,339.2 -67.3,341.8 C-75.5,344.3 -85.3,350.8 -95.8,355.1 C-106.3,359.4 -124.7,365.5 -130.4,367.6"/>
<path d="M0.1,732.0 C6.2,730.4 26.3,726.5 36.4,722.3 C46.6,718.1 52.5,709.3 61.0,707.0 C69.4,704.7 79.6,710.2 87.2,708.5 C94.8,706.8 100.0,699.6 106.6,696.9 C113.3,694.3 120.5,695.1 127.3,692.6 C134.1,690.2 141.3,685.9 147.6,682.3 C154.0,678.8 162.3,673.2 165.2,671.3"/>
<path d="M1145.4,832.5 C1150.1,836.9 1162.6,853.1 1173.6,858.5 C1184.6,863.9 1201.4,863.6 1211.4,864.9 C1221.4,866.3 1224.3,863.8 1233.6,866.7 C1242.9,869.5 1261.6,879.3 1267.2,881.9"/>
<path d="M442.9,67.6 C448.1,63.5 468.0,50.4 474.0,43.3 C480.1,36.1 479.0,30.8 479.0,24.7 C479.0,18.6 474.8,15.2 474.2,6.9 C473.5,-1.4 474.9,-19.7 475.0,-25.0"/>
<path d="M114.8,132.3 C118.6,137.5 130.9,156.6 137.7,163.5 C144.5,170.4 150.5,168.4 155.7,173.7 C160.9,179.0 163.8,187.9 169.0,195.1 C174.1,202.2 181.6,210.7 186.5,216.6 C191.4,222.6 193.7,222.7 198.6,230.7 C203.4,238.7 207.6,255.2 215.5,264.5 C223.3,273.9 240.7,283.2 245.7,287.0"/>
<path d="M932.4,568.5 C929.5,563.8 922.3,546.7 915.1,540.4 C907.9,534.1 897.2,535.8 889.3,530.5 C881.3,525.3 875.7,516.8 867.3,509.2 C858.9,501.6 846.3,492.2 838.8,485.0 C831.2,477.7 829.7,473.3 821.9,465.9 C814.2,458.6 797.2,445.1 792.3,441.0"/>
<path d="M1011.3,839.9 C1006.2,837.9 991.0,829.2 980.5,827.7 C970.0,826.2 960.1,829.8 948.4,831.0 C936.8,832.2 923.0,835.5 910.3,835.0 C897.7,834.5 878.7,829.2 872.3,828.1"/>
<path d="M993.4,320.2 C992.3,314.7 990.2,298.6 987.2,286.8 C984.2,275.0 975.2,261.8 975.3,249.5 C975.4,237.2 983.7,222.9 987.7,213.1 C991.8,203.4 997.5,194.8 999.5,191.1"/>
<path d="M431.9,232.8 C438.5,231.8 460.5,227.2 471.2,226.7 C481.9,226.1 488.4,227.1 496.1,229.4 C503.8,231.6 510.9,236.2 517.3,240.1 C523.7,244.0 529.8,246.3 534.7,252.7 C539.7,259.1 540.7,269.7 547.1,278.6 C553.6,287.6 562.9,300.3 573.5,306.4 C584.2,312.4 604.8,313.6 611.0,315.0"/>
<path d="M888.3,120.1 C888.1,116.1 887.5,105.4 887.1,95.7 C886.7,86.0 889.4,71.6 885.8,62.2 C882.1,52.8 872.6,44.5 865.0,39.2 C857.4,34.0 847.7,36.2 840.1,30.9 C832.5,25.5 827.4,15.5 819.5,7.3 C811.5,-0.9 798.1,-11.1 792.4,-18.5 C786.6,-25.9 786.3,-33.8 785.1,-36.9"/>
<path d="M518.7,326.3 C524.0,325.3 541.4,323.6 550.6,320.6 C559.8,317.6 563.4,309.8 573.7,308.4 C584.0,307.0 602.6,308.4 612.3,312.3 C621.9,316.2 624.5,324.0 631.4,331.9 C638.3,339.9 649.9,355.3 653.6,359.9"/>
<path d="M890.2,408.8 C894.8,405.7 910.0,393.0 917.7,390.0 C925.5,387.0 928.4,387.7 936.8,390.8 C945.1,393.9 957.7,404.3 968.0,408.4 C978.3,412.4 989.2,410.3 998.5,415.3 C1007.8,420.3 1018.6,430.3 1023.8,438.3 C1029.0,446.3 1028.5,459.2 1029.5,463.4"/>
<path d="M1001.6,786.4 C1004.2,790.4 1009.2,803.8 1017.5,810.1 C1025.8,816.4 1043.9,819.5 1051.3,824.4 C1058.8,829.3 1057.5,833.4 1062.2,839.7 C1067.0,845.9 1074.9,852.9 1079.8,861.9 C1084.8,870.9 1086.4,883.0 1091.9,893.7 C1097.5,904.3 1106.6,918.6 1113.1,925.8 C1119.7,933.0 1128.1,934.9 1131.1,936.7"/>
<path d="M957.6,92.9 C960.1,95.5 969.1,102.4 972.2,108.9 C975.2,115.3 976.6,124.1 976.0,131.5 C975.4,138.8 969.8,146.3 968.6,153.1 C967.3,160.0 965.6,163.3 968.7,172.5 C971.8,181.6 979.5,197.2 987.1,207.9 C994.7,218.6 1005.6,231.1 1014.5,236.9 C1023.4,242.6 1036.1,241.3 1040.4,242.2"/>
<path d="M729.6,889.8 C727.6,895.4 722.8,913.1 717.6,923.4 C712.4,933.8 702.5,942.5 698.3,951.8 C694.0,961.2 697.2,969.7 692.1,979.3 C687.0,989.0 675.1,1003.8 667.6,1010.0 C660.1,1016.1 655.5,1015.1 647.1,1016.4 C638.6,1017.7 622.0,1017.6 616.9,1017.8"/>
<path d="M466.2,137.7 C470.6,142.4 486.0,158.5 492.5,165.8 C499.0,173.2 498.8,173.9 504.9,181.7 C511.1,189.5 521.9,204.9 529.3,212.7 C536.7,220.5 541.7,225.4 549.4,228.4 C557.2,231.5 565.4,233.4 575.7,231.0 C585.9,228.6 605.2,216.9 611.2,214.0"/>
<path d="M578.4,245.7 C576.2,249.1 566.9,259.4 564.9,266.6 C563.0,273.8 564.3,282.0 567.0,289.0 C569.6,296.1 576.5,300.9 581.0,308.8 C585.4,316.7 592.7,326.4 593.7,336.4 C594.8,346.4 588.4,357.0 587.4,368.9 C586.3,380.7 588.3,396.4 587.4,407.7 C586.4,419.1 582.7,432.3 581.8,437.2"/>
<path d="M1015.1,609.7 C1014.0,613.6 1012.8,624.6 1008.8,633.3 C1004.8,642.0 996.9,653.6 991.1,661.9 C985.3,670.2 977.8,676.5 974.1,683.2 C970.4,689.9 971.3,693.7 968.9,702.0 C966.5,710.4 963.5,725.0 959.6,733.3 C955.8,741.6 948.4,744.7 945.7,751.8 C943.0,759.0 943.7,772.0 943.3,776.0"/>
<path d="M100.9,161.6 C94.4,160.4 72.2,154.1 62.0,154.5 C51.9,154.9 48.9,163.2 39.8,163.9 C30.6,164.6 12.4,159.6 6.9,158.7"/>
<path d="M598.2,309.0 C598.8,306.0 602.1,297.7 601.9,291.1 C601.7,284.6 597.2,276.5 597.3,269.7 C597.3,262.8 598.5,255.9 602.3,250.1 C606.2,244.2 612.6,237.9 620.4,234.4 C628.2,231.0 638.5,232.8 649.3,229.2 C660.0,225.6 674.3,218.6 685.0,212.9 C695.6,207.2 708.5,198.1 713.2,195.2"/>
<path d="M60.7,760.6 C66.6,762.7 86.0,769.5 96.2,773.3 C106.3,777.0 115.6,779.0 121.8,783.0 C128.0,787.0 131.6,794.9 133.5,797.3"/>
<path d="M12.7,31.2 C9.2,32.0 0.3,35.8 -8.2,36.3 C-16.7,36.8 -27.0,33.6 -38.3,34.0 C-49.5,34.4 -66.4,36.3 -75.8,38.6 C-85.2,40.9 -89.4,43.6 -94.7,48.1 C-99.9,52.5 -101.0,58.1 -107.2,65.3 C-113.3,72.5 -126.1,82.3 -131.5,91.3 C-136.9,100.3 -138.1,114.6 -139.4,119.3"/>
<path d="M669.3,506.8 C663.8,508.0 644.5,510.5 636.0,513.5 C627.5,516.5 624.2,523.1 618.2,524.9 C612.2,526.7 606.7,526.8 600.1,524.4 C593.5,521.9 585.5,517.5 578.5,510.2 C571.4,502.8 563.3,489.3 557.8,480.3 C552.2,471.2 548.7,462.7 545.0,455.9 C541.4,449.2 537.3,442.2 535.7,439.5"/>
<path d="M1150.6,913.0 C1153.8,912.8 1163.1,910.2 1169.4,911.9 C1175.8,913.6 1179.7,920.3 1188.6,923.4 C1197.6,926.4 1213.6,926.9 1223.0,930.4 C1232.3,933.8 1235.2,941.8 1244.6,943.8 C1253.9,945.9 1268.7,946.3 1279.2,942.7 C1289.7,939.1 1298.6,929.0 1307.6,922.0 C1316.5,915.0 1328.6,904.2 1332.8,900.6"/>
<path d="M186.5,386.0 C191.0,385.4 206.5,384.6 213.6,382.2 C220.8,379.7 224.1,378.6 229.2,371.3 C234.4,363.9 242.0,343.6 244.6,338.0"/>
<path d="M757.6,127.2 C754.9,125.7 748.6,119.1 740.9,118.4 C733.3,117.6 720.3,122.7 711.8,122.7 C703.3,122.7 693.7,119.0 690.0,118.3"/>
<path d="M465.3,195.2 C465.4,198.5 467.3,209.3 465.9,215.2 C464.5,221.1 458.9,223.7 456.7,230.7 C454.5,237.8 452.5,249.6 452.8,257.2 C453.0,264.8 457.2,266.6 458.2,276.4 C459.2,286.2 458.6,309.6 458.7,316.3"/>
<path d="M382.0,230.2 C377.8,228.4 363.3,223.5 357.2,219.0 C351.1,214.6 350.2,207.2 345.2,203.6 C340.2,200.1 334.0,198.1 327.0,197.5 C320.0,196.9 307.3,199.5 303.3,200.0"/>
<path d="M734.1,339.5 C730.0,336.0 717.9,325.6 709.2,318.3 C700.5,310.9 692.3,301.6 681.8,295.2 C671.4,288.8 655.5,286.0 646.4,279.9 C637.4,273.8 635.3,263.8 627.6,258.6 C620.0,253.4 605.2,250.5 600.7,248.9"/>
<path d="M132.5,624.6 C134.4,619.3 138.1,602.4 144.0,592.8 C150.0,583.2 163.3,577.1 168.3,567.0 C173.2,556.8 173.7,541.4 173.9,531.8 C174.1,522.2 168.4,516.8 169.3,509.4 C170.1,502.1 177.7,497.3 179.1,487.6 C180.5,477.9 178.9,463.4 177.7,451.4 C176.4,439.4 172.6,421.6 171.6,415.7"/>
<path d="M174.2,391.5 C179.0,394.5 195.6,401.8 203.0,409.5 C210.4,417.1 210.7,429.4 218.4,437.5 C226.2,445.6 242.1,452.0 249.4,458.0 C256.8,464.1 260.2,471.3 262.4,474.0"/>
<path d="M436.7,611.2 C439.5,612.9 445.9,618.4 453.7,621.5 C461.5,624.6 474.4,624.6 483.5,629.9 C492.6,635.3 504.3,649.7 508.5,653.7"/>
<path d="M650.9,858.4 C646.9,859.7 635.4,861.0 627.3,866.1 C619.1,871.2 607.5,881.0 602.0,888.9 C596.4,896.7 597.9,903.2 594.0,913.4 C590.0,923.6 584.0,939.4 578.5,950.1 C573.1,960.7 564.2,969.8 561.1,977.5 C558.1,985.2 560.1,987.7 560.3,996.0 C560.4,1004.2 561.6,1021.9 561.9,1027.1"/>
<path d="M32.3,255.6 C34.4,260.0 38.0,273.3 44.6,282.3 C51.1,291.3 64.1,301.8 71.6,309.5 C79.2,317.2 82.9,323.1 89.8,328.4 C96.8,333.7 105.2,335.0 113.2,341.5 C121.3,348.0 130.0,359.1 138.3,367.4 C146.5,375.7 158.5,387.4 162.5,391.4"/>
<path d="M235.5,404.9 C233.6,407.6 228.1,413.5 224.0,421.2 C219.9,428.8 218.1,441.6 210.8,450.7 C203.5,459.9 189.4,467.8 180.4,476.1 C171.3,484.4 162.2,492.4 156.3,500.4 C150.4,508.3 147.1,520.0 145.2,524.0"/>
<path d="M0.1,495.5 C0.6,502.0 2.4,522.6 3.2,534.6 C3.9,546.5 7.8,556.9 4.6,567.3 C1.4,577.6 -11.5,587.5 -15.9,596.5 C-20.2,605.5 -22.5,611.5 -21.7,621.3 C-20.8,631.0 -12.4,644.6 -10.6,655.0 C-8.8,665.4 -10.9,678.9 -11.0,683.7"/>
<path d="M423.1,233.7 C417.7,230.9 398.4,223.6 390.5,217.0 C382.5,210.3 380.4,200.9 375.2,193.9 C370.1,186.8 362.1,181.6 359.3,174.7 C356.6,167.8 358.8,156.3 358.7,152.7"/>
<path d="M169.4,244.1 C173.9,240.0 187.8,224.6 196.8,219.7 C205.9,214.8 214.5,219.0 223.8,214.8 C233.1,210.7 245.3,200.6 252.5,194.8 C259.7,189.0 264.7,182.7 267.1,180.2"/>
<path d="M1063.3,393.2 C1056.7,392.9 1033.9,391.4 1023.7,391.6 C1013.4,391.7 1010.8,395.2 1001.7,394.1 C992.6,392.9 978.4,385.0 968.9,384.5 C959.4,384.0 950.9,387.6 944.7,390.9 C938.4,394.1 936.9,400.1 931.3,404.1 C925.7,408.0 919.4,410.9 911.3,414.4 C903.2,418.0 887.4,423.5 882.7,425.3"/>
<path d="M258.1,72.4 C255.0,68.3 244.9,55.3 239.7,47.6 C234.5,39.8 233.0,31.2 227.0,26.0 C221.0,20.8 211.9,20.9 203.7,16.4 C195.5,11.9 182.1,1.9 177.8,-1.0"/>
<path d="M592.0,95.0 C589.2,100.7 577.2,119.8 575.2,129.2 C573.3,138.7 577.5,143.9 580.3,151.7 C583.1,159.4 589.0,167.3 592.1,175.7 C595.2,184.1 595.8,194.4 598.6,202.2 C601.5,210.1 607.5,219.5 609.3,222.9"/>
<path d="M740.4,468.5 C734.6,468.6 717.8,468.5 705.3,468.8 C692.9,469.1 675.7,467.3 665.7,470.3 C655.6,473.2 651.0,479.2 644.8,486.5 C638.7,493.7 636.3,505.6 628.8,513.9 C621.3,522.2 604.7,532.4 599.8,536.1"/>
<path d="M638.0,344.0 C642.8,340.8 655.8,329.5 666.9,324.7 C677.9,320.0 694.2,315.9 704.4,315.5 C714.6,315.1 724.3,321.4 728.2,322.6"/>
<path d="M1025.4,631.6 C1028.4,631.5 1035.9,632.0 1043.5,631.2 C1051.2,630.5 1062.8,626.0 1071.3,627.2 C1079.7,628.4 1090.6,636.4 1094.4,638.2"/>
<path d="M422.1,650.3 C425.7,652.8 438.3,659.6 443.4,665.5 C448.6,671.5 451.9,678.2 453.1,685.9 C454.4,693.6 450.6,702.2 451.0,711.7 C451.4,721.2 454.5,733.7 455.5,742.9 C456.5,752.1 452.8,757.9 456.9,767.1 C461.0,776.4 473.8,790.9 480.2,798.4 C486.6,806.0 492.7,810.1 495.2,812.4"/>
<path d="M767.8,480.1 C765.5,482.6 757.2,489.8 754.1,495.3 C751.0,500.9 753.0,507.6 749.4,513.2 C745.9,518.8 736.3,519.7 732.8,528.9 C729.2,538.2 727.3,557.3 728.0,568.6 C728.7,580.0 735.4,592.2 736.9,597.0"/>
<path d="M412.9,222.9 C418.1,226.5 437.3,238.4 444.1,244.8 C450.9,251.3 448.0,254.0 453.6,261.6 C459.2,269.2 469.9,283.1 477.5,290.6 C485.0,298.0 490.5,303.8 499.1,306.4 C507.7,309.0 519.6,304.1 529.1,306.1 C538.7,308.0 552.0,316.0 556.6,318.0"/>
<path d="M61.0,144.0 C65.1,147.2 76.9,159.2 85.8,163.4 C94.7,167.5 104.7,168.5 114.4,169.2 C124.2,169.9 135.5,170.3 144.5,167.4 C153.5,164.5 161.4,155.9 168.6,151.9 C175.8,147.9 180.3,148.4 187.8,143.6 C195.3,138.8 204.9,129.4 213.5,123.0 C222.1,116.5 235.0,107.9 239.3,104.8"/>
<path d="M915.9,517.2 C915.2,521.3 910.3,532.0 911.8,541.9 C913.2,551.7 920.7,565.9 924.7,576.3 C928.6,586.7 931.3,597.6 935.5,604.4 C939.6,611.2 946.7,612.0 949.8,617.3 C952.9,622.7 953.2,628.2 954.3,636.6 C955.3,645.0 955.6,662.4 955.9,667.6"/>
<path d="M806.7,461.4 C812.0,464.2 830.8,473.8 838.9,478.0 C846.9,482.3 850.0,481.4 854.9,486.9 C859.9,492.4 866.4,506.9 868.7,510.9"/>
<path d="M976.2,627.2 C970.1,628.5 948.3,632.4 939.3,635.0 C930.3,637.7 927.8,639.6 922.5,642.9 C917.1,646.2 911.3,647.8 907.1,654.9 C903.0,661.9 899.1,680.1 897.5,685.1"/>
<path d="M125.0,130.1 C125.0,135.8 123.2,155.4 125.4,164.3 C127.5,173.1 136.1,174.7 137.9,183.0 C139.7,191.3 139.7,205.2 136.1,214.2 C132.5,223.2 119.7,229.9 116.3,236.9 C112.9,243.9 115.9,253.0 115.8,256.2"/>
<path d="M323.6,269.4 C328.5,267.7 343.8,259.8 353.0,258.9 C362.2,258.0 370.3,262.1 378.9,264.0 C387.4,266.0 395.4,265.7 404.3,270.6 C413.3,275.5 426.7,286.0 432.5,293.5 C438.2,300.9 434.0,306.4 438.6,315.5 C443.3,324.5 454.9,339.5 460.4,347.8 C466.0,356.1 470.0,362.4 471.9,365.3"/>
<path d="M346.7,22.9 C348.2,27.0 352.4,38.8 355.4,47.5 C358.4,56.2 358.3,67.2 364.7,75.0 C371.0,82.8 385.0,85.9 393.5,94.0 C402.1,102.2 409.4,116.4 415.9,123.8 C422.5,131.3 425.0,133.6 432.8,138.9 C440.6,144.2 457.6,152.8 462.5,155.6"/>
<path d="M769.6,361.7 C765.9,361.5 754.1,363.2 747.6,360.6 C741.0,357.9 734.5,353.6 730.4,345.9 C726.3,338.2 726.9,323.9 722.8,314.4 C718.7,304.9 708.7,293.2 705.9,288.9"/>
<path d="M1061.0,227.9 C1058.5,231.5 1051.2,243.1 1046.2,249.6 C1041.3,256.2 1035.7,261.7 1031.5,267.0 C1027.3,272.3 1022.8,279.3 1021.0,281.7"/>
<path d="M938.4,218.7 C941.2,214.5 947.2,199.9 955.1,193.3 C962.9,186.7 976.9,185.8 985.4,179.2 C993.9,172.6 1001.8,164.4 1005.9,153.6 C1010.0,142.8 1009.4,125.7 1010.2,114.5 C1011.0,103.3 1008.0,95.9 1010.7,86.2 C1013.4,76.6 1021.4,67.0 1026.4,56.4 C1031.4,45.8 1038.3,28.3 1040.6,22.7"/>
<path d="M167.4,142.0 C170.5,136.6 181.7,118.7 186.2,110.0 C190.6,101.4 193.0,98.6 194.0,90.2 C194.9,81.8 194.5,68.9 191.9,59.6 C189.3,50.3 182.5,43.0 178.2,34.7 C173.9,26.4 168.2,13.9 166.2,9.7"/>
<path d="M584.4,766.6 C590.7,766.8 612.5,766.7 622.0,767.6 C631.5,768.6 632.4,770.6 641.7,772.3 C651.0,773.9 668.4,772.7 678.0,777.4 C687.7,782.2 696.1,796.9 699.8,800.8"/>
<path d="M693.4,863.1 C696.3,866.9 703.0,880.2 711.1,885.5 C719.2,890.8 733.8,891.3 741.9,894.8 C750.1,898.2 752.4,900.9 760.0,906.1 C767.6,911.4 776.9,922.5 787.6,926.3 C798.2,930.0 817.9,928.4 823.9,928.9"/>
<path d="M1024.5,27.5 C1026.6,33.1 1032.6,53.0 1037.0,61.6 C1041.4,70.1 1042.4,74.6 1050.9,78.6 C1059.5,82.7 1082.2,84.5 1088.5,85.7"/>
<path d="M247.8,208.1 C248.8,204.4 254.6,193.5 253.8,186.0 C253.1,178.5 249.8,169.9 243.5,163.0 C237.2,156.0 224.2,152.8 216.0,144.1 C207.8,135.4 200.4,118.0 194.2,110.7 C187.9,103.4 183.7,105.7 178.5,100.3 C173.2,94.9 165.3,82.1 162.6,78.4"/>
<path d="M1097.3,348.9 C1094.1,354.0 1085.8,370.8 1078.3,379.2 C1070.9,387.7 1061.0,393.6 1052.4,399.5 C1043.9,405.5 1031.3,412.4 1027.1,414.9"/>
<path d="M889.1,238.0 C889.4,234.9 892.5,228.4 890.8,219.0 C889.0,209.7 879.1,194.6 878.8,182.0 C878.4,169.3 886.1,153.1 888.7,143.3 C891.2,133.5 890.0,132.2 894.0,123.4 C898.1,114.6 908.5,98.9 912.9,90.7 C917.3,82.4 919.1,76.8 920.4,74.1"/>
<path d="M290.7,439.0 C292.7,441.8 296.4,449.6 302.8,455.9 C309.2,462.2 322.8,470.2 329.2,476.8 C335.7,483.5 337.5,487.5 341.6,495.6 C345.6,503.8 351.6,520.7 353.7,525.8"/>
<path d="M769.4,0.6 C765.7,1.9 753.1,4.4 747.6,8.3 C742.1,12.1 738.4,18.0 736.4,23.7 C734.4,29.4 734.3,33.8 735.7,42.6 C737.0,51.5 743.0,67.7 744.4,77.0 C745.8,86.4 744.2,95.0 744.1,98.6"/>
<path d="M90.0,583.8 C94.4,580.2 109.5,568.6 116.1,562.2 C122.8,555.8 125.3,552.3 130.2,545.3 C135.1,538.4 141.4,527.8 145.3,520.5 C149.3,513.3 150.6,508.5 153.9,501.7 C157.1,494.9 163.0,483.3 164.8,479.7"/>
<path d="M1140.7,340.1 C1137.6,342.1 1129.6,347.1 1121.9,352.3 C1114.1,357.5 1102.3,364.7 1094.1,371.3 C1086.0,377.9 1081.2,384.6 1073.1,391.9 C1064.9,399.1 1049.8,411.2 1045.1,415.1"/>
<path d="M683.6,592.6 C685.3,596.6 691.2,608.7 694.1,617.0 C696.9,625.2 699.1,634.3 700.6,642.1 C702.0,649.9 700.3,656.8 702.9,663.7 C705.6,670.7 714.2,680.3 716.5,683.6"/>
<path d="M985.6,95.4 C989.6,93.0 1001.3,83.2 1009.3,81.0 C1017.4,78.7 1024.3,80.8 1034.0,81.8 C1043.6,82.8 1061.7,86.1 1067.2,87.0"/>
<path d="M55.7,848.7 C60.3,852.5 76.9,864.0 83.3,871.7 C89.8,879.5 92.5,888.0 94.4,895.2 C96.4,902.5 91.8,908.1 94.9,915.2 C98.1,922.3 107.4,928.7 113.3,937.7 C119.2,946.7 127.5,964.1 130.3,969.4"/>
<path d="M643.3,548.1 C646.2,551.6 654.2,563.7 660.4,569.3 C666.5,574.8 675.3,576.6 680.3,581.3 C685.3,586.1 687.9,591.6 690.2,597.6 C692.6,603.6 695.6,609.9 694.5,617.3 C693.4,624.7 685.5,637.9 683.7,642.0"/>
<path d="M697.2,791.5 C700.0,794.0 709.1,798.4 714.1,806.7 C719.1,815.0 724.6,831.4 727.3,841.2 C729.9,851.0 729.6,861.4 730.1,865.4"/>
<path d="M669.3,0.1 C665.9,2.2 655.4,9.5 648.9,12.8 C642.4,16.1 638.2,18.9 630.2,19.7 C622.3,20.6 609.5,17.1 601.4,17.8 C593.3,18.6 589.8,21.7 581.9,24.2 C574.0,26.6 558.7,31.3 554.1,32.8"/>
<path d="M843.4,331.4 C839.1,336.5 828.4,354.5 817.8,361.6 C807.3,368.8 790.1,373.2 780.0,374.1 C770.0,375.0 765.1,371.8 757.5,367.1 C749.8,362.3 744.4,351.5 734.3,345.8 C724.1,340.1 707.9,338.1 696.4,332.9 C685.0,327.8 673.5,319.6 665.6,314.7 C657.8,309.8 652.2,305.2 649.5,303.3"/>
<path d="M1016.0,144.9 C1013.2,148.5 1003.4,157.3 999.6,166.1 C995.8,174.9 993.7,186.6 993.1,197.8 C992.5,209.0 992.7,222.7 995.8,233.3 C999.0,243.8 1007.0,252.5 1011.8,261.2 C1016.5,269.9 1022.7,274.8 1024.3,285.3 C1025.9,295.9 1021.5,312.3 1021.4,324.3 C1021.3,336.3 1023.5,351.8 1023.9,357.3"/>
<path d="M214.8,606.6 C209.9,605.3 193.7,601.2 185.3,599.0 C176.8,596.7 171.5,599.1 163.9,593.0 C156.3,586.9 145.5,573.7 139.6,562.2 C133.7,550.7 132.4,536.1 128.6,523.9 C124.8,511.8 118.8,495.2 116.8,489.4"/>
<path d="M268.8,678.2 C270.3,672.1 276.8,653.9 277.9,641.9 C279.0,630.0 276.1,616.7 275.1,606.7 C274.2,596.7 274.5,591.8 272.3,582.0 C270.1,572.2 263.6,553.7 261.9,548.0"/>
<path d="M991.3,774.0 C985.8,771.0 967.7,761.7 958.1,756.3 C948.4,750.9 940.1,748.5 933.5,741.9 C926.9,735.2 925.4,723.2 918.6,716.4 C911.8,709.5 897.1,703.4 892.8,700.8"/>
<path d="M1155.1,743.6 C1158.7,741.8 1170.4,736.4 1176.5,732.9 C1182.5,729.4 1185.6,727.0 1191.4,722.4 C1197.3,717.9 1207.1,714.3 1211.6,705.4 C1216.1,696.6 1217.3,678.2 1218.5,669.1 C1219.7,660.1 1218.7,654.1 1218.7,651.1"/>
<path d="M1132.4,194.7 C1131.7,199.4 1129.1,212.5 1128.2,222.6 C1127.3,232.7 1124.9,245.8 1127.0,255.2 C1129.2,264.6 1138.9,275.2 1141.3,279.2"/>
<path d="M235.5,35.0 C233.7,32.1 226.5,23.5 224.4,17.5 C222.3,11.5 221.9,8.0 223.0,-0.9 C224.0,-9.8 229.4,-30.1 230.7,-35.9"/>
<path d="M814.6,496.8 C818.4,494.1 831.3,485.8 837.5,480.4 C843.7,475.0 848.4,473.5 851.9,464.3 C855.3,455.1 854.2,436.3 858.1,425.2 C862.0,414.1 872.5,402.2 875.4,397.5"/>
<path d="M383.0,387.7 C384.1,391.7 389.9,403.9 389.5,412.0 C389.1,420.2 381.3,428.5 380.8,436.7 C380.3,444.9 385.8,450.9 386.3,461.4 C386.7,471.9 385.5,488.2 383.5,499.8 C381.6,511.4 376.2,525.9 374.7,531.2"/>
<path d="M1104.8,711.2 C1100.1,713.1 1086.7,721.9 1076.6,722.8 C1066.5,723.6 1052.8,716.4 1044.1,716.2 C1035.4,716.0 1033.0,721.0 1024.3,721.4 C1015.5,721.8 1000.5,720.4 991.5,718.6 C982.5,716.8 979.4,711.5 970.4,710.4 C961.5,709.2 943.2,711.3 937.8,711.5"/>
<path d="M205.7,293.3 C207.1,288.2 214.0,274.1 214.2,262.6 C214.4,251.0 210.0,232.9 206.9,223.9 C203.7,214.8 199.0,213.1 195.1,208.1 C191.1,203.2 188.1,199.8 183.1,194.2 C178.1,188.5 168.4,182.0 164.9,174.1 C161.4,166.3 162.6,151.7 162.2,147.2"/>
<path d="M999.7,713.0 C994.7,711.3 977.6,705.3 969.4,703.0 C961.3,700.7 956.0,701.9 950.6,699.2 C945.2,696.6 945.2,689.6 937.1,687.0 C928.9,684.5 907.7,684.5 901.9,684.0"/>
<path d="M497.4,188.2 C499.9,186.3 505.7,182.7 512.7,176.6 C519.6,170.4 528.9,158.7 539.1,151.5 C549.2,144.3 568.0,136.3 573.8,133.2"/>
<path d="M984.3,530.7 C982.2,525.9 976.9,512.1 971.3,501.7 C965.7,491.3 956.8,478.1 950.8,468.4 C944.8,458.6 937.9,447.4 935.3,443.2"/>
<path d="M104.4,72.1 C102.9,66.3 97.4,46.7 95.6,37.6 C93.7,28.4 93.5,26.8 93.3,17.2 C93.1,7.6 90.3,-9.4 94.2,-20.0 C98.2,-30.6 112.6,-35.8 116.8,-46.4 C121.0,-57.0 117.8,-73.5 119.4,-83.6 C121.1,-93.6 125.4,-102.7 126.6,-106.6"/>
<path d="M1084.1,756.5 C1087.1,752.9 1098.6,743.8 1102.4,734.9 C1106.2,726.1 1105.4,711.8 1107.1,703.5 C1108.8,695.2 1111.7,692.0 1112.7,685.1 C1113.7,678.2 1113.1,665.8 1113.2,662.0"/>
<path d="M971.0,355.5 C975.3,351.0 988.4,336.0 996.9,328.5 C1005.4,321.0 1015.2,318.8 1021.9,310.7 C1028.6,302.6 1034.5,285.1 1037.0,280.0"/>
<path d="M344.7,828.3 C346.6,830.7 349.2,836.6 356.0,842.8 C362.8,849.0 374.7,861.5 385.5,865.6 C396.3,869.6 410.6,869.9 420.8,867.0 C431.1,864.2 439.0,852.3 447.2,848.4 C455.4,844.6 466.2,844.7 470.0,843.9"/>
<path d="M437.5,192.8 C439.7,187.4 446.6,168.9 450.6,160.5 C454.7,152.1 454.8,148.8 461.6,142.4 C468.4,136.1 484.6,129.8 491.5,122.2 C498.3,114.6 495.5,104.9 502.6,96.9 C509.8,89.0 527.1,82.4 534.5,74.5 C541.9,66.6 539.7,57.6 547.1,49.7 C554.6,41.8 573.8,30.8 579.1,27.0"/>
<path d="M326.7,328.4 C323.6,330.0 314.2,336.0 308.1,337.5 C302.0,338.9 297.9,339.7 290.0,337.1 C282.2,334.4 268.6,327.2 261.0,321.5 C253.3,315.8 251.2,306.9 244.1,302.8 C237.0,298.6 226.1,301.3 218.5,296.6 C210.9,291.8 201.9,278.0 198.5,274.3"/>
<path d="M28.5,805.5 C30.7,802.7 33.9,794.2 41.5,788.8 C49.0,783.3 64.1,780.2 73.7,772.6 C83.3,765.1 91.2,749.8 98.9,743.3 C106.6,736.9 113.8,741.0 119.9,733.8 C126.1,726.7 130.6,708.0 136.0,700.4 C141.3,692.7 149.1,690.0 151.8,687.9"/>
<path d="M899.7,706.8 C899.5,703.3 901.3,694.3 898.4,686.0 C895.5,677.6 887.1,664.3 882.3,656.6 C877.5,648.9 873.4,646.8 869.4,639.7 C865.4,632.7 860.1,623.6 858.4,614.1 C856.7,604.6 859.0,588.0 859.1,582.8"/>
<path d="M200.1,557.8 C198.0,562.9 191.3,580.6 187.0,588.4 C182.7,596.3 181.6,599.2 174.5,604.9 C167.4,610.6 151.8,617.2 144.5,622.6 C137.1,628.0 132.8,634.7 130.5,637.1"/>
<path d="M318.2,705.3 C315.6,707.5 309.0,711.2 302.4,718.2 C295.9,725.2 283.7,739.3 279.1,747.4 C274.6,755.5 277.6,760.6 275.2,766.6 C272.8,772.7 268.8,778.5 264.7,783.6 C260.6,788.8 255.3,790.4 250.6,797.6 C246.0,804.9 242.9,819.7 236.9,827.2 C230.9,834.7 218.5,840.1 214.8,842.7"/>
<path d="M519.5,9.2 C516.6,12.8 507.0,22.8 501.9,30.4 C496.8,38.1 492.9,45.3 489.0,55.3 C485.2,65.3 482.8,82.4 478.7,90.5 C474.6,98.6 466.9,101.7 464.6,103.9"/>
<path d="M482.3,254.5 C485.9,256.4 497.2,259.5 503.6,265.9 C510.1,272.3 515.6,284.8 520.9,292.9 C526.3,301.0 533.2,304.6 535.7,314.7 C538.2,324.8 535.5,341.9 535.9,353.4 C536.4,364.9 539.5,375.1 538.3,383.8 C537.0,392.4 530.0,401.7 528.4,405.2"/>
<path d="M290.4,76.9 C286.7,76.8 276.8,72.6 268.2,76.3 C259.6,80.0 250.1,94.2 238.7,99.3 C227.4,104.4 211.6,103.4 200.2,106.8 C188.9,110.2 175.7,117.6 170.8,119.7"/>
<path d="M648.5,660.0 C651.5,662.8 660.7,671.3 666.6,676.9 C672.5,682.6 677.5,688.1 684.0,694.0 C690.5,699.8 700.2,703.1 705.6,712.2 C711.1,721.2 716.2,737.9 716.6,748.5 C717.1,759.0 712.4,769.1 708.2,775.7 C703.9,782.3 693.9,785.9 691.0,787.9"/>
<path d="M1085.3,581.9 C1090.5,579.0 1107.8,571.1 1116.4,564.6 C1124.9,558.0 1129.0,550.9 1136.6,542.7 C1144.2,534.5 1153.3,521.2 1161.8,515.2 C1170.4,509.3 1179.9,513.9 1188.0,507.0 C1196.1,500.2 1202.2,482.9 1210.3,474.0 C1218.5,465.1 1232.4,457.0 1236.8,453.6"/>
<path d="M798.8,67.2 C795.7,65.1 788.3,58.9 780.2,54.6 C772.2,50.3 759.0,46.6 750.4,41.5 C741.8,36.4 735.9,29.3 728.6,24.0 C721.2,18.6 710.1,11.8 706.4,9.4"/>
<path d="M250.9,270.0 C253.9,275.7 264.6,293.5 268.9,304.1 C273.2,314.8 275.2,324.9 276.8,333.7 C278.4,342.5 278.7,348.2 278.5,356.9 C278.3,365.6 278.9,378.1 275.5,385.9 C272.0,393.7 264.4,395.3 257.5,403.6 C250.6,412.0 237.9,430.6 233.9,435.9"/>
<path d="M857.6,14.9 C854.7,16.2 845.6,18.0 840.0,22.6 C834.4,27.2 832.1,36.2 823.9,42.5 C815.7,48.8 800.2,52.9 790.8,60.4 C781.5,67.8 774.7,78.6 768.0,87.1 C761.3,95.6 755.4,104.8 750.5,111.3 C745.7,117.8 741.1,118.2 738.8,126.1 C736.4,134.0 737.0,153.3 736.7,158.7"/>
<path d="M806.9,337.5 C809.6,335.3 817.7,329.9 823.0,323.9 C828.4,317.9 836.0,308.6 839.0,301.6 C842.0,294.6 841.5,291.3 840.9,282.0 C840.3,272.6 838.0,257.0 835.5,245.4 C833.0,233.9 827.5,218.2 826.0,212.8"/>
<path d="M425.6,905.5 C427.6,911.1 433.4,928.6 437.6,939.4 C441.8,950.2 445.2,960.4 450.9,970.4 C456.5,980.4 465.6,989.9 471.6,999.5 C477.5,1009.2 481.1,1019.3 486.6,1028.2 C492.1,1037.1 495.9,1045.4 504.6,1052.7 C513.4,1059.9 533.4,1068.5 539.1,1071.7"/>
<path d="M786.6,480.5 C784.0,476.9 775.6,466.4 771.2,459.0 C766.8,451.7 767.1,442.6 760.2,436.6 C753.3,430.5 735.1,425.1 730.0,422.8"/>
<path d="M497.2,574.5 C495.1,579.7 487.2,594.7 484.4,605.5 C481.7,616.3 480.8,627.8 480.8,639.2 C480.7,650.6 483.7,662.0 484.3,673.7 C484.9,685.5 487.0,700.3 484.2,709.7 C481.5,719.1 473.4,726.1 467.7,730.1 C461.9,734.2 452.8,733.3 449.9,733.9"/>
<path d="M1032.8,8.0 C1028.0,5.6 1012.9,-2.0 1004.0,-6.5 C995.1,-11.0 987.5,-13.6 979.3,-18.9 C971.1,-24.2 965.4,-33.3 954.9,-38.3 C944.5,-43.2 929.2,-45.5 916.7,-48.7 C904.2,-51.8 892.0,-55.7 880.1,-56.9 C868.1,-58.2 850.8,-56.3 845.0,-56.2"/>
<path d="M814.2,254.6 C813.3,250.1 809.0,237.3 808.8,227.4 C808.6,217.4 813.7,205.1 813.0,194.9 C812.3,184.8 806.9,176.7 804.7,166.3 C802.5,156.0 800.6,138.3 799.8,132.7"/>
<path d="M217.3,272.1 C215.4,278.2 207.4,299.0 206.0,308.5 C204.6,318.1 207.3,322.2 208.8,329.6 C210.2,337.0 213.8,349.2 214.8,353.1"/>
<path d="M428.2,533.6 C432.3,530.9 444.8,525.2 452.7,517.6 C460.7,510.1 468.3,494.3 476.0,488.3 C483.8,482.3 489.9,482.2 499.3,481.5 C508.7,480.7 523.1,482.7 532.5,483.6 C542.0,484.5 552.0,486.5 555.9,487.1"/>
<path d="M1119.5,879.1 C1125.1,877.4 1143.6,870.1 1153.1,868.8 C1162.6,867.6 1167.1,871.8 1176.7,871.7 C1186.3,871.6 1200.9,868.4 1210.6,868.3 C1220.2,868.1 1224.2,869.6 1234.7,870.8 C1245.1,872.0 1266.9,874.8 1273.3,875.6"/>
<path d="M144.8,323.4 C141.4,322.2 132.6,317.3 124.1,316.2 C115.5,315.1 102.6,316.2 93.4,316.7 C84.1,317.1 78.7,318.2 68.7,318.9 C58.8,319.6 43.7,321.6 33.8,320.8 C23.8,320.1 13.2,315.4 9.1,314.3"/>
<path d="M1081.6,723.8 C1075.7,721.4 1056.2,711.9 1046.3,709.4 C1036.5,706.9 1030.3,710.0 1022.7,708.8 C1015.0,707.5 1008.1,702.9 1000.5,702.1 C992.9,701.2 985.3,700.9 977.1,703.4 C968.8,706.0 958.3,710.2 951.0,717.2 C943.6,724.1 936.1,740.3 933.1,744.9"/>
<path d="M573.0,789.2 C571.2,794.2 565.7,807.7 562.3,819.1 C558.9,830.5 553.3,845.7 552.9,857.6 C552.4,869.5 558.3,885.1 559.4,890.6"/>
<path d="M29.4,237.7 C34.0,242.0 51.2,254.0 56.7,263.5 C62.2,273.0 60.8,286.2 62.3,294.9 C63.8,303.6 63.7,308.5 65.6,315.9 C67.4,323.3 72.2,335.4 73.5,339.3"/>
<path d="M679.2,294.3 C683.5,295.5 698.1,296.9 705.0,301.4 C711.9,306.0 718.0,312.0 720.7,321.6 C723.3,331.2 718.8,348.4 721.0,359.2 C723.1,370.0 732.0,378.6 733.4,386.5 C734.8,394.4 733.8,398.8 729.5,406.7 C725.2,414.6 711.2,429.5 707.5,434.0"/>
<path d="M879.2,544.7 C885.1,545.2 904.7,545.3 914.4,547.3 C924.1,549.2 930.1,552.4 937.5,556.6 C945.0,560.9 953.9,567.5 959.2,572.8 C964.5,578.2 967.8,586.0 969.5,588.7"/>
<path d="M1100.1,341.4 C1100.2,337.1 1097.7,325.5 1100.4,315.8 C1103.1,306.2 1113.6,292.3 1116.3,283.2 C1119.0,274.1 1118.3,268.9 1116.7,261.3 C1115.1,253.7 1109.5,245.2 1106.8,237.8 C1104.1,230.3 1101.5,223.3 1100.6,216.5 C1099.7,209.7 1101.1,200.3 1101.2,197.1"/>
<path d="M783.1,476.8 C785.2,474.6 789.1,466.7 795.7,463.4 C802.2,460.1 812.2,458.8 822.6,457.2 C833.1,455.6 852.4,454.4 858.4,453.8"/>
<path d="M310.3,7.5 C313.9,5.8 325.0,0.7 331.9,-2.8 C338.8,-6.3 344.5,-11.8 351.7,-13.5 C358.9,-15.3 367.0,-10.1 375.1,-13.3 C383.2,-16.4 392.7,-27.8 400.6,-32.6 C408.5,-37.4 418.9,-40.5 422.6,-42.0"/>
<path d="M564.1,320.1 C566.4,318.0 572.4,309.4 578.1,307.0 C583.8,304.6 589.9,302.7 598.4,305.8 C606.8,308.9 621.9,319.9 628.9,325.7 C636.0,331.5 636.9,333.7 640.7,340.6 C644.5,347.5 648.5,359.5 651.8,367.2 C655.0,374.9 658.8,383.4 660.2,386.7"/>
<path d="M594.7,733.9 C597.6,735.5 602.7,742.2 612.0,743.7 C621.3,745.2 640.7,743.7 650.4,742.8 C660.0,741.9 662.0,737.9 670.1,738.5 C678.1,739.2 689.1,746.1 698.7,746.7 C708.3,747.2 720.2,744.7 727.7,741.8 C735.1,738.9 740.7,731.4 743.3,729.3"/>
</g></g>
<defs><filter id="bl" x="-20%" y="-20%" width="140%" height="140%"><feGaussianBlur stdDeviation="2.2"/></filter><pattern id="hat" width="4" height="4" patternUnits="userSpaceOnUse" patternTransform="rotate(45)"><rect width="4" height="4" fill="#e1e1e1"/><rect width="1.2" height="4" fill="#e9e9e9"/></pattern></defs>
<g filter="url(#bl)">
<path d="M621.9,819.0 C623.6,813.8 627.1,795.9 632.2,788.0 C637.4,780.1 646.3,771.5 652.8,771.5 C659.3,771.5 666.1,791.4 671.3,788.0 C676.4,784.6 676.8,756.7 683.7,750.9 C690.6,745.1 703.7,749.6 712.6,753.0 C721.5,756.4 731.8,762.6 737.3,771.5 C742.8,780.4 747.6,799.0 745.6,806.6 C743.6,814.2 731.9,813.5 725.0,816.9 C718.1,820.3 708.1,820.7 704.3,827.2 C700.5,833.7 704.3,847.2 702.3,856.1 C700.2,865.0 697.2,875.0 692.0,880.8 C686.8,886.6 678.5,890.4 671.3,891.1 C664.1,891.8 654.9,889.4 648.7,884.9 C642.5,880.4 634.6,871.2 634.2,864.3 C633.9,857.4 647.6,848.5 646.6,843.7 C645.6,838.9 631.1,836.9 628.0,835.5Z" fill="#dedede"/>
<ellipse cx="113" cy="232" rx="16" ry="14" fill="#e2e2e2"/>
<ellipse cx="88" cy="262" rx="14" ry="10" fill="#e4e4e4"/>
<ellipse cx="243" cy="745" rx="17" ry="30" fill="#e2e2e2"/>
<ellipse cx="968" cy="704" rx="42" ry="32" fill="#e6e6e6"/>
<ellipse cx="972" cy="708" rx="18" ry="14" fill="#dedede"/>
<ellipse cx="545" cy="612" rx="10" ry="10" fill="#e2e2e2"/>
<ellipse cx="340" cy="438" rx="10" ry="9" fill="#e4e4e4"/>
<ellipse cx="58" cy="486" rx="9" ry="10" fill="#e4e4e4"/>
<ellipse cx="30" cy="820" rx="14" ry="12" fill="#e2e2e2"/>
<ellipse cx="284" cy="584" rx="8" ry="8" fill="#e5e5e5"/>
<ellipse cx="55" cy="689" rx="20" ry="9" fill="#dadada"/>
<ellipse cx="437" cy="678" rx="9" ry="8" fill="#e6e6e6"/>
<ellipse cx="757" cy="548" rx="7" ry="5" fill="#e6e6e6"/>
</g>
<path d="M683.7,752.0 C688.5,752.2 703.7,749.8 712.6,753.0 C721.5,756.2 731.8,762.6 737.3,771.5 C742.8,780.4 747.6,799.0 745.6,806.6 C743.6,814.2 732.6,814.3 725.0,816.9 C717.4,819.5 705.8,824.8 700.0,822.0 C694.2,819.2 694.0,806.2 690.0,800.0 C686.0,793.8 678.3,787.5 676.0,785.0Z" fill="url(#hat)" opacity="0.8"/>
<path d="M585.8,-2.0 C586.1,-0.6 586.4,3.9 587.5,6.7 C588.6,9.5 589.2,8.3 592.5,15.0 C595.8,21.7 602.5,36.0 607.5,46.9 C612.5,57.8 618.0,69.8 622.5,80.6 C627.0,91.3 629.7,99.8 634.7,111.4 C639.7,123.0 647.0,137.3 652.5,150.0 C658.0,162.7 663.8,175.6 667.5,187.5 C671.2,199.4 672.8,210.7 675.0,221.3 C677.2,231.9 679.5,242.6 680.6,251.3 C681.7,260.1 681.4,270.1 681.6,273.8 M681.6,273.8 C685.5,274.4 697.0,276.4 705.0,277.5 C713.0,278.6 720.6,280.6 729.4,280.7 C738.1,280.8 747.4,278.2 757.5,278.4 C767.6,278.6 779.0,281.6 790.0,281.8 C801.0,282.0 812.5,278.8 823.7,279.4 C835.0,280.0 846.2,282.5 857.5,285.2 C868.8,287.9 881.1,292.2 891.2,295.3 C901.3,298.4 909.8,301.8 918.2,303.7 C926.7,305.6 929.5,304.5 941.9,306.7 C954.3,308.9 978.5,313.2 992.5,316.9 C1006.5,320.6 1015.5,324.2 1026.2,328.7 C1036.9,333.2 1044.3,337.0 1056.6,343.9 C1068.9,350.8 1084.4,359.0 1100.0,370.0 C1115.6,381.0 1133.3,395.8 1150.0,410.0 C1166.7,424.2 1185.0,440.0 1200.0,455.0 C1215.0,470.0 1229.0,486.8 1240.0,500.0 C1251.0,513.2 1256.3,520.2 1266.0,534.0 C1275.7,547.8 1289.0,563.7 1298.0,583.0 C1307.0,602.3 1314.8,632.2 1320.0,650.0 C1325.2,667.8 1327.8,676.7 1329.0,690.0 C1330.2,703.3 1325.7,711.7 1327.0,730.0 C1328.3,748.3 1335.8,780.0 1337.0,800.0 C1338.2,820.0 1337.0,831.7 1334.0,850.0 C1331.0,868.3 1321.5,900.0 1319.0,910.0" fill="none" stroke="#919191" stroke-width="2.4" stroke-linejoin="round"/>
<path d="M476.3,0.0 L630.0,99.4 L918.0,306.0 L1056.6,391.0 L1600.0,771.0" fill="none" stroke="#a6a6a6" stroke-width="1.1" stroke-dasharray="5 3"/>
<path d="M469.0,0.0 L520.0,32.0 L935.0,306.0 L1056.6,379.0 L1600.0,742.0" fill="none" stroke="#a6a6a6" stroke-width="1.1" stroke-dasharray="5 3"/>
<path d="M640.0,100.0 L955.0,306.0 L1056.6,367.5 L1600.0,727.0" fill="none" stroke="#a6a6a6" stroke-width="1.1" stroke-dasharray="5 3"/>
<path d="M957.0,0.0 L1056.0,98.0 L1240.0,275.0 L1458.0,490.0 L1600.0,630.0" fill="none" stroke="#a6a6a6" stroke-width="1.1" stroke-dasharray="5 3"/>
<path d="M1176.0,0.0 L1236.0,45.0 L1565.0,305.0 L1600.0,333.0" fill="none" stroke="#a6a6a6" stroke-width="1.1" stroke-dasharray="5 3"/>
<path d="M1309.5,0.0 L1330.0,14.0 L1600.0,240.0" fill="none" stroke="#a6a6a6" stroke-width="1.1" stroke-dasharray="5 3"/>
<g fill="none" stroke="#d0d0d0" stroke-width="1.2" stroke-linecap="round" stroke-linejoin="round">
<path d="M139.5,0.0 C140.3,7.5 141.0,29.3 144.0,45.0 C147.0,60.8 152.3,81.0 157.5,94.5 C162.8,108.0 172.9,115.5 175.5,126.0 C178.1,136.5 176.3,144.5 173.3,157.5 C170.3,170.5 160.1,196.3 157.5,204.1"/>
<path d="M225.0,0.0 C225.0,7.5 221.3,29.3 225.0,45.0 C228.8,60.8 240.8,79.5 247.5,94.5 C254.3,109.5 259.9,120.8 265.5,135.0 C271.2,149.3 278.3,168.5 281.3,180.0 C284.3,191.5 283.2,200.1 283.5,204.1"/>
<path d="M203.6,108.0 C207.2,104.3 214.0,88.5 225.0,85.5 C236.1,82.5 258.8,94.9 270.0,90.0 C281.3,85.1 290.7,67.5 292.5,56.3 C294.4,45.0 283.2,28.1 281.3,22.5"/>
<path d="M0.0,162.0 C7.5,164.3 29.3,170.6 45.0,175.5 C60.8,180.4 79.5,190.5 94.5,191.3 C109.5,192.0 124.5,185.6 135.0,180.0 C145.5,174.4 153.8,161.3 157.5,157.5"/>
<path d="M83.3,0.0 C82.9,11.3 79.1,45.0 81.0,67.5 C82.9,90.0 93.0,112.2 94.5,135.0 C96.0,157.8 90.8,192.6 90.0,204.1"/>
<path d="M247.5,157.5 C253.2,153.8 270.0,137.3 281.3,135.0 C292.5,132.8 301.9,145.5 315.0,144.0 C328.2,142.5 352.5,129.0 360.0,126.0"/>
<path d="M238.5,204.1 C239.6,196.3 240.8,168.3 245.3,157.5 C249.8,146.8 262.2,142.5 265.5,139.5"/>
<path d="M135.0,245.0 C146.3,247.3 183.8,251.8 202.5,258.5 C221.3,265.3 239.3,278.0 247.5,285.5 C255.8,293.0 251.3,300.5 252.0,303.5"/>
<path d="M303.8,260.8 C303.0,265.6 301.5,279.1 299.3,290.0 C297.0,300.9 295.2,314.8 290.3,326.0 C285.4,337.3 273.8,344.5 270.0,357.5 C266.3,370.5 268.2,396.3 267.8,404.1"/>
<path d="M105.8,256.3 C106.1,265.6 109.9,295.6 108.0,312.5 C106.1,329.4 98.3,342.3 94.5,357.5 C90.8,372.8 87.0,396.3 85.5,404.1"/>
<path d="M112.5,326.0 C123.8,323.4 157.5,315.5 180.0,310.3 C202.5,305.0 228.8,301.6 247.5,294.5 C266.3,287.4 285.0,272.0 292.5,267.5"/>
<path d="M186.8,335.0 C193.1,333.5 211.1,326.0 225.0,326.0 C238.9,326.0 255.0,336.5 270.0,335.0 C285.0,333.5 300.0,320.8 315.0,317.0 C330.0,313.3 352.5,313.3 360.0,312.5"/>
<path d="M0.0,222.5 C7.5,221.8 32.6,217.3 45.0,218.0 C57.4,218.8 69.4,225.5 74.3,227.0"/>
<path d="M0.0,274.3 C5.6,273.1 22.5,267.1 33.8,267.5 C45.0,267.9 61.9,275.0 67.5,276.5"/>
<path d="M157.5,404.1 C165.0,400.1 187.5,385.5 202.5,380.0 C217.5,374.5 232.5,370.3 247.5,371.0 C262.5,371.8 273.8,386.8 292.5,384.5 C311.3,382.3 348.8,362.0 360.0,357.5"/>
<path d="M0.0,535.0 C5.6,531.3 24.4,518.5 33.8,512.5 C43.1,506.5 52.5,501.3 56.3,499.0"/>
<path d="M108.0,429.3 C105.0,439.4 95.6,468.6 90.0,490.0 C84.4,511.4 76.9,538.5 74.3,557.5 C71.6,576.5 74.3,596.3 74.3,604.1"/>
<path d="M213.8,445.0 C211.9,454.4 205.1,482.5 202.5,501.3 C199.9,520.0 201.8,540.4 198.0,557.5 C194.3,574.7 183.0,596.3 180.0,604.1"/>
<path d="M258.8,496.8 C264.4,493.0 283.2,481.0 292.5,474.3 C301.9,467.5 309.0,461.5 315.0,456.3 C321.0,451.0 326.3,445.0 328.5,442.8"/>
<path d="M198.0,535.0 C206.3,535.4 231.8,538.8 247.5,537.3 C263.3,535.8 277.5,529.4 292.5,526.0 C307.5,522.6 326.3,521.1 337.5,517.0 C348.8,512.9 356.3,503.9 360.0,501.3"/>
<path d="M247.5,400.0 C248.3,411.3 255.0,445.0 252.0,467.5 C249.0,490.0 232.5,512.2 229.5,535.0 C226.5,557.8 233.3,592.6 234.0,604.1"/>
<path d="M290.3,586.8 C296.3,584.5 314.7,575.1 326.3,573.3 C337.9,571.4 354.4,575.1 360.0,575.5"/>
<path d="M315.0,490.0 C319.5,494.5 335.7,505.8 342.0,517.0 C348.4,528.3 350.3,548.5 353.3,557.5 C356.3,566.5 358.9,568.8 360.0,571.0"/>
<path d="M281.3,591.3 C275.7,591.3 258.8,589.1 247.5,591.3 C236.3,593.4 219.4,602.0 213.8,604.1"/>
<path d="M0.0,427.0 C3.8,430.0 13.5,441.6 22.5,445.0 C31.5,448.4 48.8,446.9 54.0,447.3"/>
<path d="M0.0,508.0 C3.8,506.1 13.9,499.0 22.5,496.8 C31.1,494.5 46.9,494.9 51.8,494.5"/>
<path d="M186.8,600.0 C187.5,605.6 187.9,623.3 191.3,633.8 C194.6,644.3 201.4,653.6 207.0,663.0 C212.6,672.4 222.0,685.5 225.0,690.0"/>
<path d="M301.5,600.0 C301.2,607.5 304.5,630.8 299.3,645.0 C294.0,659.3 276.8,672.4 270.0,685.5 C263.3,698.6 260.7,717.4 258.8,723.8"/>
<path d="M225.0,690.0 C232.5,687.4 255.0,679.9 270.0,674.3 C285.0,668.6 300.0,661.1 315.0,656.3 C330.0,651.4 352.5,646.9 360.0,645.0"/>
<path d="M24.8,690.0 L0.0,701.3"/>
<path d="M54.0,746.3 C60.0,748.1 81.0,751.9 90.0,757.5 C99.0,763.1 106.5,772.3 108.0,780.0 C109.5,787.8 100.5,800.1 99.0,804.1"/>
<path d="M308.3,710.3 C307.5,718.1 306.4,741.9 303.8,757.5 C301.2,773.2 294.4,796.3 292.5,804.1"/>
<path d="M45.0,811.0 C52.5,810.6 75.8,808.0 90.0,808.8 C104.3,809.5 123.8,814.4 130.5,815.5"/>
<path d="M0.0,894.3 C5.6,892.4 22.5,882.6 33.8,883.0 C45.0,883.4 56.3,896.5 67.5,896.5 C78.8,896.5 95.6,885.3 101.3,883.0"/>
<path d="M236.3,829.0 C243.8,828.3 268.2,823.0 281.3,824.5 C294.4,826.0 301.9,837.3 315.0,838.0 C328.2,838.8 352.5,830.5 360.0,829.0"/>
<path d="M146.3,847.0 C151.9,849.3 170.6,853.8 180.0,860.5 C189.4,867.3 195.0,879.8 202.5,887.5 C210.0,895.3 221.3,903.8 225.0,907.1"/>
<path d="M362.5,145.8 C370.0,148.0 394.4,152.5 407.5,159.3 C420.6,166.0 435.3,176.1 441.3,186.3 C447.3,196.4 441.6,208.4 443.5,220.0 C445.4,231.6 451.8,246.6 452.5,256.0 C453.3,265.4 448.8,272.9 448.0,276.3"/>
<path d="M443.5,220.0 C448.8,216.3 467.5,205.0 475.0,197.5 C482.5,190.0 486.3,178.8 488.5,175.0"/>
<path d="M488.5,181.8 C487.8,188.1 480.6,207.6 484.0,220.0 C487.4,232.4 503.5,244.0 508.8,256.0 C514.0,268.0 514.4,286.0 515.5,292.0"/>
<path d="M407.5,274.0 C407.5,268.0 403.8,246.3 407.5,238.0 C411.3,229.8 426.3,226.8 430.0,224.5"/>
<path d="M308.5,265.0 C311.1,270.6 319.8,287.3 324.3,298.8 C328.8,310.3 333.6,328.2 335.5,334.1"/>
<path d="M346.8,143.5 C341.9,150.6 322.8,173.5 317.5,186.3 C312.3,199.0 315.6,214.4 315.3,220.0"/>
<path d="M389.5,267.3 C387.3,272.9 384.3,292.8 376.0,301.0 C367.8,309.3 353.5,313.0 340.0,316.8 C326.5,320.5 302.5,322.4 295.0,323.5"/>
<path d="M360.8,451.5 C363.0,455.3 375.0,466.5 374.3,474.0 C373.5,481.5 361.9,488.3 356.3,496.5 C350.6,504.8 343.1,519.0 340.5,523.5"/>
<path d="M300.0,386.3 C305.6,387.4 322.5,393.0 333.8,393.0 C345.0,393.0 362.3,393.0 367.5,386.3 C372.8,379.5 365.3,361.9 365.3,352.5 C365.3,343.1 367.1,333.8 367.5,330.0"/>
<path d="M430.5,665.0 C430.1,657.5 429.8,632.0 428.3,620.0 C426.8,608.0 422.6,597.5 421.5,593.0"/>
<path d="M435.0,665.0 C435.8,658.3 437.6,635.0 439.5,624.5 C441.4,614.0 445.1,605.8 446.3,602.0"/>
<path d="M345.0,530.0 C346.5,534.5 351.4,550.3 354.0,557.0 C356.6,563.8 359.6,568.3 360.8,570.5"/>
<path d="M360.8,572.8 C360.4,580.6 361.1,602.8 358.5,620.0 C355.9,637.3 347.3,666.9 345.0,676.3"/>
<path d="M300.0,635.8 C307.5,635.0 331.9,634.6 345.0,631.3 C358.1,627.9 367.5,621.9 378.8,615.5 C390.0,609.1 406.9,596.8 412.5,593.0"/>
<path d="M579.0,595.3 C585.0,597.9 606.0,603.1 615.0,611.0 C624.0,618.9 630.0,637.3 633.0,642.5"/>
<path d="M439.5,692.0 C443.3,695.8 455.3,707.5 462.0,714.5 C468.8,721.5 477.0,730.8 480.0,734.1"/>
<path d="M457.5,732.3 C464.3,733.8 488.3,740.1 498.0,741.3 C507.8,742.4 513.0,739.4 516.0,739.0"/>
<path d="M570.0,703.0 C571.9,708.6 573.8,727.0 581.3,736.8 C588.8,746.5 605.7,752.1 615.0,761.5 C624.4,770.9 630.0,787.0 637.5,793.0 C645.0,799.0 656.3,796.8 660.0,797.5"/>
<path d="M511.5,829.0 C517.5,831.3 537.8,835.0 547.5,842.5 C557.3,850.0 564.0,863.3 570.0,874.0 C576.0,884.8 581.3,901.6 583.5,907.1"/>
<path d="M650.0,606.5 C655.6,608.0 670.6,611.0 683.8,615.5 C696.9,620.0 715.6,632.8 728.8,633.5 C741.9,634.3 751.3,623.0 762.5,620.0 C773.8,617.0 790.6,616.3 796.3,615.5"/>
<path d="M830.0,530.0 C828.5,535.6 825.5,554.0 821.0,563.8 C816.5,573.5 807.1,575.4 803.0,588.5 C798.9,601.6 795.9,628.3 796.3,642.5 C796.6,656.8 802.6,662.8 805.3,674.0 C807.9,685.3 807.1,700.0 812.0,710.0 C816.9,720.0 830.8,730.1 834.5,734.1"/>
<path d="M769.3,557.0 C768.9,563.8 764.4,585.1 767.0,597.5 C769.6,609.9 780.1,621.5 785.0,631.3 C789.9,641.0 794.4,651.9 796.3,656.0"/>
<path d="M886.3,530.0 C888.1,537.5 890.8,560.0 897.5,575.0 C904.3,590.0 919.3,605.8 926.8,620.0 C934.3,634.3 939.9,653.8 942.5,660.5"/>
<path d="M841.3,620.0 C846.9,616.3 862.6,601.6 875.0,597.5 C887.4,593.4 903.9,596.8 915.5,595.3 C927.2,593.8 939.9,589.6 944.8,588.5"/>
<path d="M717.5,696.5 L767.0,697.6"/>
<path d="M1051.0,833.5 C1045.0,837.3 1026.7,848.5 1015.0,856.0 C1003.4,863.5 990.7,871.8 981.3,878.5 C971.9,885.3 968.2,891.8 958.8,896.5 C949.4,901.3 930.6,905.3 925.0,907.1"/>
<path d="M767.5,703.0 C765.6,706.8 754.4,714.3 756.3,725.5 C758.1,736.8 776.9,755.5 778.8,770.5 C780.6,785.5 769.4,808.0 767.5,815.5"/>
<path d="M835.0,802.0 C838.8,806.5 853.0,819.3 857.5,829.0 C862.0,838.8 859.0,849.3 862.0,860.5 C865.0,871.8 873.3,890.5 875.5,896.5"/>
<path d="M857.5,829.0 L902.5,820.0"/>
<path d="M981.3,725.5 C983.2,733.0 988.8,757.4 992.5,770.5 C996.3,783.6 997.0,794.5 1003.8,804.3 C1010.5,814.0 1028.2,824.9 1033.0,829.0"/>
<path d="M778.8,748.0 C784.4,747.3 801.6,743.5 812.5,743.5 C823.4,743.5 838.8,747.3 844.0,748.0"/>
<path d="M700.6,469.4 C702.8,472.8 709.1,481.6 713.8,490.0 C718.4,498.4 723.1,511.3 728.8,520.0 C734.4,528.8 744.4,538.8 747.5,542.5"/>
<path d="M593.8,456.3 C593.4,462.5 591.9,481.3 591.9,493.8 C591.9,506.3 592.8,518.5 593.8,531.3 C594.7,544.0 596.9,563.6 597.5,570.1"/>
<path d="M612.5,497.5 C618.8,497.5 639.4,493.8 650.0,497.5 C660.6,501.3 667.5,511.9 676.3,520.0 C685.0,528.1 695.3,537.9 702.5,546.3 C709.7,554.6 716.6,566.1 719.4,570.1"/>
<path d="M691.3,471.3 C688.8,476.9 682.5,495.0 676.3,505.0 C670.0,515.0 657.5,526.9 653.8,531.3"/>
<path d="M747.5,475.0 C747.5,481.3 744.4,503.1 747.5,512.5 C750.6,521.9 763.1,528.1 766.3,531.3"/>
<path d="M820.0,475.0 C824.7,476.3 841.9,479.4 848.1,482.5 C854.4,485.6 855.9,491.9 857.5,493.8"/>
<path d="M857.5,493.8 C860.6,498.4 871.6,512.5 876.3,521.9 C880.9,531.3 882.5,542.0 885.6,550.0 C888.8,558.0 893.4,566.7 895.0,570.1"/>
<path d="M979.4,505.0 C984.1,507.8 1001.3,516.3 1007.5,521.9 C1013.8,527.5 1015.3,535.9 1016.9,538.8"/>
<path d="M1065.0,598.0 C1066.7,605.0 1072.7,622.8 1075.0,640.0 C1077.3,657.2 1078.3,690.8 1079.0,701.0"/>
<path d="M1087.0,839.0 C1088.3,845.8 1092.8,868.2 1095.0,880.0 C1097.2,891.8 1099.2,905.0 1100.0,910.0"/>
</g>
<path d="M523,735 L392,905" stroke="#e2e2e2" stroke-width="4" fill="none"/>
<g fill="none" stroke="#b2b2b2" stroke-width="1.6" stroke-linecap="round" stroke-linejoin="round">
<path d="M99.0,0.0 C99.3,16.7 100.1,66.0 101.0,100.0 C101.9,134.0 103.4,182.0 104.6,204.0 C105.8,226.0 107.4,227.3 108.0,232.0"/>
<path d="M193.5,45.0 C197.6,41.3 209.3,27.8 218.3,22.5 C227.3,17.3 238.9,16.9 247.5,13.5 C256.2,10.1 266.3,4.1 270.0,2.3"/>
<path d="M0.0,102.4 C7.5,102.6 28.1,101.8 45.0,103.5 C61.9,105.2 84.4,112.3 101.3,112.5 C118.1,112.7 130.1,107.0 146.3,104.6 C162.4,102.3 189.4,99.4 198.0,98.3"/>
<path d="M203.6,118.1 C211.0,118.9 234.6,122.4 247.5,122.6 C260.5,122.8 270.0,119.3 281.3,119.3 C292.5,119.3 302.7,120.0 315.0,122.6 C327.4,125.3 348.8,133.0 355.5,135.0"/>
<path d="M40.5,200.0 C43.1,202.3 50.3,210.1 56.3,213.5 C62.3,216.9 70.9,217.3 76.5,220.3 C82.1,223.3 86.6,227.8 90.0,231.5 C93.4,235.3 95.6,240.9 96.8,242.8"/>
<path d="M132.8,238.3 C136.1,235.6 147.4,228.9 153.0,222.5 C158.6,216.1 164.3,203.8 166.5,200.0"/>
<path d="M117.0,254.0 C117.8,259.3 118.9,273.5 121.5,285.5 C124.1,297.5 129.0,311.8 132.8,326.0 C136.5,340.3 139.9,358.0 144.0,371.0 C148.1,384.0 154.5,397.0 157.5,404.1 C160.5,411.2 162.0,410.4 162.0,413.5 C162.0,416.6 158.3,421.0 157.5,422.5"/>
<path d="M139.5,240.5 C144.8,237.9 161.6,230.0 171.0,224.8 C180.4,219.5 188.3,213.1 195.8,209.0 C203.3,204.9 209.6,200.4 216.0,200.0 C222.4,199.6 225.0,203.0 234.0,206.8 C243.0,210.5 260.3,216.1 270.0,222.5 C279.8,228.9 286.9,239.0 292.5,245.0 C298.2,251.0 298.2,255.5 303.8,258.5 C309.4,261.5 316.9,262.8 326.3,263.0 C335.7,263.2 354.4,260.2 360.0,259.6"/>
<path d="M0.0,359.8 C3.8,359.4 15.0,356.4 22.5,357.5 C30.0,358.6 33.8,362.0 45.0,366.5 C56.3,371.0 78.0,379.6 90.0,384.5 C102.0,389.4 111.0,392.5 117.0,395.8 C123.0,399.0 121.5,401.1 126.0,404.1 C130.5,407.1 139.1,410.1 144.0,413.5 C148.9,416.9 153.4,422.9 155.3,424.8"/>
<path d="M56.3,490.0 C61.5,490.0 78.4,491.1 87.8,490.0 C97.1,488.9 100.9,484.8 112.5,483.3 C124.1,481.8 147.0,480.4 157.5,481.0 C168.0,481.6 167.3,486.1 175.5,486.6 C183.8,487.2 195.0,482.7 207.0,484.4 C219.0,486.1 238.9,494.7 247.5,496.8 C256.2,498.8 256.9,496.8 258.8,496.8"/>
<path d="M155.3,429.3 C155.6,433.0 155.3,444.3 157.5,451.8 C159.8,459.3 166.5,466.0 168.8,474.3 C171.0,482.5 169.1,491.9 171.0,501.3 C172.9,510.6 178.1,520.4 180.0,530.5 C181.9,540.6 181.5,551.9 182.3,562.0 C183.0,572.1 184.3,584.3 184.5,591.3 C184.7,598.3 183.6,602.0 183.4,604.1"/>
<path d="M247.5,755.3 C251.3,756.4 260.7,760.0 270.0,762.0 C279.4,764.1 292.5,767.1 303.8,767.6 C315.0,768.2 328.2,766.0 337.5,765.4 C346.9,764.8 349.8,765.3 360.0,764.3 C370.3,763.2 392.5,760.1 399.0,759.3"/>
<path d="M225.0,732.8 C230.6,731.3 244.9,727.5 258.8,723.8 C272.7,720.0 291.4,711.4 308.3,710.3 C325.2,709.1 346.8,714.8 360.0,717.0 C373.3,719.2 383.1,722.4 387.8,723.5"/>
<path d="M130.5,699.0 C133.1,701.3 141.0,707.6 146.3,712.5 C151.5,717.4 158.6,723.0 162.0,728.3 C165.4,733.5 160.9,738.4 166.5,744.0 C172.1,749.6 187.9,755.3 195.8,762.0 C203.6,768.8 209.3,777.5 213.8,784.5 C218.3,791.5 221.3,800.8 222.8,804.1"/>
<path d="M0.0,732.8 C7.5,733.1 30.8,735.0 45.0,735.0 C59.3,735.0 73.5,733.9 85.5,732.8 C97.5,731.6 108.8,727.9 117.0,728.3 C125.3,728.6 126.8,732.4 135.0,735.0 C143.3,737.6 156.4,742.5 166.5,744.0 C176.6,745.5 186.0,742.1 195.8,744.0 C205.5,745.9 220.1,753.4 225.0,755.3"/>
<path d="M33.8,708.0 C37.5,709.1 48.8,713.1 56.3,714.8 C63.8,716.4 71.3,718.5 78.8,718.1 C86.3,717.8 94.1,715.3 101.3,712.5 C108.4,709.7 116.3,703.9 121.5,701.3 C126.8,698.6 126.0,698.3 132.8,696.8 C139.5,695.3 151.5,692.3 162.0,692.3 C172.5,692.3 190.1,696.0 195.8,696.8"/>
<path d="M211.5,777.3 C206.3,779.1 189.0,784.4 180.0,788.5 C171.0,792.6 163.1,797.5 157.5,802.0 C151.9,806.5 148.9,808.8 146.3,815.5 C143.6,822.3 144.8,834.3 141.8,842.5 C138.8,850.8 132.8,858.3 128.3,865.0 C123.8,871.8 117.4,875.5 114.8,883.0 C112.1,890.5 112.9,905.5 112.5,910.0"/>
<path d="M45.0,829.0 C49.9,830.5 66.8,832.8 74.3,838.0 C81.8,843.3 85.5,853.8 90.0,860.5 C94.5,867.3 99.4,875.5 101.3,878.5"/>
<path d="M360.3,143.5 C361.0,148.0 362.1,162.3 364.8,170.5 C367.4,178.8 370.8,185.9 376.0,193.0 C381.3,200.1 390.3,206.5 396.3,213.3 C402.3,220.0 406.4,226.4 412.0,233.5 C417.6,240.6 424.0,248.9 430.0,256.0 C436.0,263.1 445.0,272.9 448.0,276.3"/>
<path d="M304.0,256.0 C305.9,250.0 314.1,229.8 315.3,220.0 C316.4,210.3 315.6,200.1 310.8,197.5 C305.9,194.9 296.1,201.3 286.0,204.3 C275.9,207.3 256.0,213.6 250.0,215.5"/>
<path d="M367.5,431.3 C372.0,429.4 388.9,424.9 394.5,420.0 C400.1,415.1 397.1,407.3 401.3,402.0 C405.4,396.8 412.1,393.0 419.3,388.5 C426.4,384.0 436.9,381.0 444.0,375.0 C451.1,369.0 457.5,358.9 462.0,352.5 C466.5,346.1 469.5,339.4 471.0,336.8"/>
<path d="M347.3,426.8 C346.9,421.9 346.9,413.6 345.0,397.5 C343.1,381.4 337.5,341.3 336.0,330.0"/>
<path d="M446.3,674.0 C448.1,671.0 452.6,660.9 457.5,656.0 C462.4,651.1 468.8,647.8 475.5,644.8 C482.3,641.8 491.3,641.0 498.0,638.0 C504.8,635.0 509.3,629.8 516.0,626.8 C522.8,623.8 534.8,621.1 538.5,620.0"/>
<path d="M439.5,692.0 C435.0,694.6 421.1,702.5 412.5,707.8 C403.9,713.0 399.0,722.4 387.8,723.5 C376.5,724.6 359.6,717.1 345.0,714.5 C330.4,711.9 307.5,708.9 300.0,707.8"/>
<path d="M549.8,620.0 C553.2,621.9 561.0,627.9 570.0,631.3 C579.0,634.6 594.4,636.1 603.8,640.3 C613.2,644.4 619.9,650.4 626.3,656.0 C632.7,661.6 636.4,668.8 642.0,674.0 C647.7,679.3 657.0,685.3 660.0,687.5"/>
<path d="M547.5,617.8 C551.3,614.4 562.5,603.1 570.0,597.5 C577.5,591.9 585.0,587.8 592.5,584.0 C600.0,580.3 603.8,578.4 615.0,575.0 C626.3,571.6 652.5,565.6 660.0,563.8"/>
<path d="M552.0,624.5 C552.4,629.8 552.0,645.5 554.3,656.0 C556.5,666.5 562.9,678.5 565.5,687.5 C568.2,696.5 568.9,702.3 570.0,710.0 C571.2,717.8 571.9,730.1 572.3,734.1"/>
<path d="M502.5,874.0 C504.0,866.5 506.3,841.4 511.5,829.0 C516.8,816.6 529.5,809.5 534.0,799.8 C538.5,790.0 537.0,781.0 538.5,770.5 C540.0,760.0 541.5,748.0 543.0,736.8 C544.5,725.5 546.8,708.6 547.5,703.0"/>
<path d="M390.0,725.5 C389.3,729.3 384.0,742.0 385.5,748.0 C387.0,754.0 397.1,754.0 399.0,761.5 C400.9,769.0 399.8,781.8 396.8,793.0 C393.8,804.3 387.8,818.5 381.0,829.0 C374.3,839.5 364.9,847.8 356.3,856.0 C347.6,864.3 335.6,869.5 329.3,878.5 C322.9,887.5 319.9,904.8 318.0,910.0"/>
<path d="M300.0,707.5 C307.5,709.0 330.4,713.7 345.0,716.5 C359.6,719.3 377.3,725.9 387.8,724.4 C398.3,722.9 404.6,710.3 408.0,707.5"/>
<path d="M390.0,847.0 C393.8,852.3 404.3,871.4 412.5,878.5 C420.8,885.6 429.8,887.9 439.5,889.8 C449.3,891.6 465.8,889.8 471.0,889.8"/>
<path d="M650.0,577.3 C655.6,574.3 672.5,564.5 683.8,559.3 C695.0,554.0 707.0,548.4 717.5,545.8 C728.0,543.1 737.0,544.3 746.8,543.5 C756.5,542.8 768.1,543.5 776.0,541.3 C783.9,539.0 791.0,531.9 794.0,530.0"/>
<path d="M746.8,559.3 C743.8,563.0 735.5,574.3 728.8,581.8 C722.0,589.3 712.3,596.0 706.3,604.3 C700.3,612.5 696.9,621.1 692.8,631.3 C688.6,641.4 683.6,654.9 681.5,665.0 C679.4,675.1 680.0,682.6 680.4,692.0 C680.8,701.4 682.8,714.3 683.8,721.3 C684.7,728.3 685.6,732.0 686.0,734.1"/>
<path d="M755.8,561.5 C759.1,561.9 770.4,561.1 776.0,563.8 C781.6,566.4 784.3,573.5 789.5,577.3 C794.8,581.0 801.5,581.8 807.5,586.3 C813.5,590.8 819.9,598.6 825.5,604.3 C831.1,609.9 834.9,615.9 841.3,620.0 C847.6,624.1 856.3,626.0 863.8,629.0 C871.3,632.0 878.8,633.5 886.3,638.0 C893.8,642.5 901.3,650.0 908.8,656.0 C916.3,662.0 924.5,668.0 931.3,674.0 C938.0,680.0 946.3,689.0 949.3,692.0"/>
<path d="M944.8,588.5 C945.2,593.8 945.9,611.0 947.0,620.0 C948.2,629.0 951.2,635.0 951.5,642.5 C951.9,650.0 948.5,657.5 949.3,665.0 C950.0,672.5 954.9,683.8 956.0,687.5"/>
<path d="M970.0,725.5 C967.4,733.0 959.5,758.5 954.3,770.5 C949.0,782.5 942.6,786.3 938.5,797.5 C934.4,808.8 931.8,825.6 929.5,838.0 C927.3,850.4 928.0,860.3 925.0,871.8 C922.0,883.3 913.8,901.2 911.5,907.1"/>
<path d="M992.5,709.8 C1000.0,710.9 1027.0,712.0 1037.5,716.5 C1048.0,721.0 1052.5,733.4 1055.5,736.8"/>
<path d="M718.0,874.0 C724.4,874.4 742.4,874.8 756.3,876.3 C770.1,877.8 788.1,880.4 801.3,883.0 C814.4,885.6 824.1,889.8 835.0,892.0 C845.9,894.3 861.3,895.8 866.5,896.5"/>
<path d="M597.5,448.8 C603.8,449.7 622.5,452.2 635.0,454.4 C647.5,456.6 661.6,459.4 672.5,461.9 C683.4,464.4 691.3,466.3 700.6,469.4 C710.0,472.5 717.8,478.4 728.8,480.6 C739.7,482.8 753.8,482.8 766.3,482.5 C778.8,482.2 791.3,480.0 803.8,478.8 C816.3,477.5 831.9,474.7 841.3,475.0 C850.6,475.3 856.9,479.7 860.0,480.6"/>
<path d="M766.3,546.3 C771.0,543.8 785.0,536.9 794.4,531.3 C803.8,525.6 814.7,517.8 822.5,512.5 C830.3,507.2 835.0,502.5 841.3,499.4 C847.5,496.3 854.2,495.3 860.0,493.8 C865.8,492.2 867.9,492.5 876.3,490.0 C884.6,487.5 899.1,480.3 910.0,478.8 C920.9,477.2 931.9,479.1 941.9,480.6 C951.9,482.2 965.3,486.9 970.0,488.1"/>
<path d="M971.9,493.8 C970.3,496.9 965.3,504.4 962.5,512.5 C959.7,520.6 956.9,532.9 955.0,542.5 C953.1,552.1 951.9,565.5 951.3,570.1"/>
<path d="M992.5,709.8 C999.9,710.8 1022.6,717.1 1037.0,716.0 C1051.4,714.9 1065.2,703.7 1079.0,703.0 C1092.8,702.3 1106.2,708.8 1120.0,712.0 C1133.8,715.2 1155.0,720.3 1162.0,722.0"/>
<path d="M976.8,714.3 C982.3,719.4 998.0,734.0 1010.0,745.0 C1022.0,756.0 1039.0,768.3 1049.0,780.0 C1059.0,791.7 1063.7,805.2 1070.0,815.0 C1076.3,824.8 1077.0,835.7 1087.0,839.0 C1097.0,842.3 1115.3,838.0 1130.0,835.0 C1144.7,832.0 1167.5,823.3 1175.0,821.0"/>
<path d="M1033.0,848.0 C1037.5,847.2 1051.0,844.5 1060.0,843.0 C1069.0,841.5 1078.7,846.2 1087.0,839.0 C1095.3,831.8 1102.0,813.2 1110.0,800.0 C1118.0,786.8 1126.7,772.0 1135.0,760.0 C1143.3,748.0 1155.8,733.3 1160.0,728.0"/>
<path d="M1176.0,818.0 C1175.3,810.0 1173.3,785.5 1172.0,770.0 C1170.7,754.5 1169.5,738.0 1168.0,725.0 C1166.5,712.0 1163.8,697.5 1163.0,692.0"/>
<path d="M1007.0,559.0 C1011.7,562.5 1025.3,573.5 1035.0,580.0 C1044.7,586.5 1054.2,589.7 1065.0,598.0 C1075.8,606.3 1088.3,618.8 1100.0,630.0 C1111.7,641.2 1124.7,654.7 1135.0,665.0 C1145.3,675.3 1157.5,687.5 1162.0,692.0"/>
<path d="M572.4,720.0 C574.5,723.4 579.2,734.4 584.7,740.6 C590.2,746.8 598.2,751.2 605.4,757.1 C612.6,763.0 619.1,769.2 628.0,775.7 C636.9,782.2 651.1,790.5 659.0,796.3 C666.9,802.1 670.0,804.2 675.5,810.7 C681.0,817.2 687.5,828.3 692.0,835.5 C696.5,842.7 700.6,850.9 702.3,854.0"/>
<path d="M683.7,720.0 C684.1,724.5 687.2,738.2 685.8,746.8 C684.4,755.4 678.6,762.9 675.5,771.5 C672.4,780.1 670.0,789.1 667.2,798.4 C664.5,807.7 662.1,819.7 659.0,827.2 C655.9,834.8 650.4,841.0 648.7,843.7"/>
<path d="M712.6,876.7 L708.5,910.0"/>
</g>
<g fill="none" stroke="#8e8e8e" stroke-width="1.55" stroke-linecap="round" stroke-linejoin="round">
<path d="M122.6,0.0 C117.2,4.9 101.1,18.8 90.0,29.3 C78.9,39.8 65.6,55.1 56.3,63.0 C46.9,70.9 41.6,73.1 33.8,76.5 C25.9,79.9 14.6,81.0 9.0,83.3 C3.4,85.5 1.5,88.9 0.0,90.0"/>
<path d="M158.6,0.0 C162.2,4.9 174.6,20.3 180.0,29.3 C185.5,38.3 188.3,44.6 191.3,54.0 C194.3,63.4 196.0,76.5 198.0,85.5 C200.1,94.5 203.3,101.3 203.6,108.0 C204.0,114.8 204.2,115.5 200.3,126.0 C196.3,136.5 186.0,158.0 180.0,171.0 C174.0,184.0 169.3,195.6 164.3,204.1 C159.3,212.6 156.0,216.7 150.0,222.0 C144.0,227.3 131.7,233.7 128.0,236.0"/>
<path d="M273.4,0.0 C277.7,6.4 290.8,27.0 299.3,38.3 C307.7,49.5 316.9,58.1 324.0,67.5 C331.2,76.9 336.0,86.3 342.0,94.5 C348.0,102.8 356.7,111.4 360.0,117.0 C363.4,122.6 361.7,126.2 362.0,128.0"/>
<path d="M0.0,123.8 C1.1,124.9 3.0,124.1 6.8,130.5 C10.5,136.9 17.1,149.8 22.5,162.0 C27.9,174.3 34.1,194.0 39.4,204.1 C44.6,214.2 48.2,217.6 54.0,222.5 C59.8,227.4 67.5,231.5 74.3,233.8 C81.0,236.0 91.1,235.6 94.5,236.0"/>
<path d="M99.0,245.0 C93.8,250.3 78.4,267.1 67.5,276.5 C56.6,285.9 45.0,292.6 33.8,301.3 C22.5,309.9 5.6,323.8 0.0,328.3"/>
<path d="M94.5,251.8 C91.1,255.5 82.5,266.4 74.3,274.3 C66.0,282.1 57.4,288.1 45.0,299.0 C32.6,309.9 7.5,332.8 0.0,339.5"/>
<path d="M126.0,236.0 C127.5,237.5 131.3,240.1 135.0,245.0 C138.8,249.9 144.8,257.8 148.5,265.3 C152.3,272.8 153.8,283.3 157.5,290.0 C161.3,296.8 166.5,300.5 171.0,305.8 C175.5,311.0 181.9,315.9 184.5,321.5 C187.1,327.1 187.1,331.6 186.8,339.5 C186.4,347.4 183.1,358.0 182.3,368.8 C181.4,379.5 182.2,397.8 181.8,404.1 C181.4,410.4 181.1,404.1 180.0,406.8 C179.0,409.4 176.3,418.0 175.5,420.3"/>
<path d="M0.0,375.5 L24.8,404.1"/>
<path d="M22.5,400.0 C26.3,403.0 39.4,412.4 45.0,418.0 C50.6,423.6 53.8,427.4 56.3,433.8 C58.7,440.1 59.6,448.8 59.6,456.3 C59.6,463.8 55.3,471.3 56.3,478.8 C57.2,486.3 62.6,493.4 65.3,501.3 C67.9,509.1 67.1,517.4 72.0,526.0 C76.9,534.6 87.8,544.4 94.5,553.0 C101.3,561.6 107.6,569.3 112.5,577.8 C117.4,586.3 122.3,600.4 123.8,604.1 C125.3,607.8 121.9,600.7 121.5,600.0"/>
<path d="M0.0,469.8 C5.6,470.1 24.8,470.5 33.8,472.0 C42.8,473.5 48.4,473.9 54.0,478.8 C59.6,483.6 65.3,491.9 67.5,501.3 C69.8,510.6 67.9,525.6 67.5,535.0 C67.1,544.4 64.1,548.1 65.3,557.5 C66.4,566.9 72.4,583.5 74.3,591.3 C76.1,599.0 75.8,597.0 76.5,604.1 C77.3,611.2 75.8,625.1 78.8,633.8 C81.8,642.4 88.9,649.5 94.5,656.3 C100.1,663.0 107.3,667.9 112.5,674.3 C117.8,680.6 123.8,691.1 126.0,694.5"/>
<path d="M33.8,472.0 C37.1,467.5 47.3,451.0 54.0,445.0 C60.8,439.0 67.5,438.6 74.3,436.0 C81.0,433.4 87.4,430.0 94.5,429.3 C101.6,428.5 111.4,429.6 117.0,431.5 C122.6,433.4 123.8,440.1 128.3,440.5 C132.8,440.9 139.5,436.0 144.0,433.8 C148.5,431.5 153.4,428.1 155.3,427.0"/>
<path d="M155.3,427.0 C159.4,427.0 172.1,425.1 180.0,427.0 C187.9,428.9 191.3,435.1 202.5,438.3 C213.8,441.4 232.5,445.9 247.5,446.1 C262.5,446.3 279.0,440.3 292.5,439.4 C306.0,438.4 322.5,440.3 328.5,440.5"/>
<path d="M180.0,427.0 C183.8,431.1 193.1,443.1 202.5,451.8 C211.9,460.4 226.9,471.3 236.3,478.8 C245.6,486.3 253.2,490.4 258.8,496.8 C264.4,503.1 266.7,507.6 270.0,517.0 C273.4,526.4 277.0,543.3 279.0,553.0 C281.1,562.8 281.3,569.9 282.4,575.5 C283.5,581.1 285.2,584.9 285.8,586.8"/>
<path d="M421.5,330.0 C409.9,345.8 365.8,402.7 351.8,424.5 C337.8,446.3 343.6,444.6 337.5,460.8 C331.4,477.0 321.8,504.6 315.0,521.5 C308.2,538.4 301.5,550.6 297.0,562.0 C292.5,573.4 291.0,583.7 288.0,590.0 C285.0,596.3 285.8,587.1 279.0,600.0 C272.2,612.9 256.9,648.4 247.5,667.5 C238.1,686.6 226.9,706.9 222.8,714.8"/>
<path d="M121.5,600.0 C123.8,604.9 129.8,619.9 135.0,629.3 C140.3,638.6 145.5,648.0 153.0,656.3 C160.5,664.5 171.8,671.6 180.0,678.8 C188.3,685.9 195.8,693.4 202.5,699.0 C209.3,704.6 215.3,707.6 220.5,712.5 C225.8,717.4 230.6,723.0 234.0,728.3 C237.4,733.5 238.9,739.1 240.8,744.0 C242.6,748.9 244.5,755.3 245.3,757.5"/>
<path d="M0.0,618.0 C2.6,620.6 12.0,628.1 15.8,633.8 C19.5,639.4 21.6,646.1 22.5,651.8 C23.4,657.4 21.0,661.1 21.4,667.5 C21.8,673.9 22.7,683.3 24.8,690.0 C26.8,696.8 30.4,701.6 33.8,708.0 C37.1,714.4 41.6,721.9 45.0,728.3 C48.4,734.6 53.3,739.5 54.0,746.3 C54.8,753.0 52.1,761.3 49.5,768.8 C46.9,776.3 39.6,785.4 38.3,791.3 C36.9,797.2 41.1,802.0 41.6,804.1"/>
<path d="M204.8,766.0 C207.4,770.5 216.8,784.0 220.5,793.0 C224.3,802.0 225.0,808.8 227.3,820.0 C229.5,831.3 231.4,845.5 234.0,860.5 C236.6,875.5 241.5,901.8 243.0,910.0"/>
<path d="M245.3,759.3 C245.5,764.9 245.6,779.9 246.4,793.0 C247.1,806.1 247.7,823.8 249.8,838.0 C251.8,852.3 255.4,866.5 258.8,878.5 C262.2,890.5 268.2,904.8 270.0,910.0"/>
<path d="M38.3,793.0 C37.5,797.5 37.1,811.0 33.8,820.0 C30.4,829.0 21.4,840.3 18.0,847.0 C14.6,853.8 13.5,852.3 13.5,860.5 C13.5,868.8 14.6,888.3 18.0,896.5 C21.4,904.8 31.1,907.8 33.8,910.0"/>
<path d="M340.0,259.4 C344.5,259.6 358.8,259.2 367.0,260.5 C375.3,261.8 382.0,265.0 389.5,267.3 C397.0,269.5 402.3,272.3 412.0,274.0 C421.8,275.7 437.5,274.8 448.0,277.4 C458.5,280.0 467.5,286.4 475.0,289.8 C482.5,293.1 487.8,296.1 493.0,297.6 C498.3,299.1 504.3,298.6 506.5,298.8"/>
<path d="M329.3,440.3 L300.0,438.0"/>
<path d="M300.0,572.8 C304.9,572.6 318.8,572.2 329.3,571.6 C339.8,571.1 352.9,569.6 363.0,569.4 C373.1,569.2 382.5,568.8 390.0,570.5 C397.5,572.2 402.8,575.9 408.0,579.5 C413.3,583.1 415.5,588.9 421.5,591.9 C427.5,594.9 437.3,595.1 444.0,597.5 C450.8,599.9 456.0,603.5 462.0,606.5 C468.0,609.5 471.8,613.8 480.0,615.5 C488.3,617.2 502.5,616.3 511.5,616.6 C520.5,617.0 530.3,617.6 534.0,617.8"/>
<path d="M547.5,620.0 C546.4,627.5 543.0,650.0 540.8,665.0 C538.5,680.0 535.9,698.5 534.0,710.0 C532.1,721.5 531.0,727.8 529.5,734.1 C528.0,740.4 525.8,745.7 525.0,748.0"/>
<path d="M412.5,772.8 L498.0,874.0"/>
<path d="M498.0,876.3 C499.5,869.9 504.0,851.9 507.0,838.0 C510.0,824.1 513.0,808.0 516.0,793.0 C519.0,778.0 522.2,763.0 525.0,748.0 C527.8,733.0 531.6,710.5 532.9,703.0"/>
<path d="M495.8,878.5 C500.6,876.3 512.6,869.1 525.0,865.0 C537.4,860.9 553.5,857.3 570.0,853.8 C586.5,850.2 609.0,845.9 624.0,843.6 C639.0,841.4 653.7,840.2 660.0,840.3 C666.4,840.3 655.6,840.9 662.2,843.7 C668.7,846.6 691.0,853.3 699.4,857.3 C707.9,861.2 710.7,865.7 713.0,867.4"/>
<path d="M493.5,883.0 L480.0,910.0"/>
<path d="M650.0,689.8 C654.9,689.4 668.0,688.6 679.3,687.5 C690.5,686.4 706.6,686.0 717.5,683.0 C728.4,680.0 735.9,672.5 744.5,669.5 C753.1,666.5 755.8,665.8 769.3,665.0 C782.8,664.3 812.4,664.6 825.5,665.0 C838.6,665.4 839.8,664.6 848.0,667.3 C856.3,669.9 866.8,677.8 875.0,680.8 C883.3,683.8 890.8,683.4 897.5,685.3 C904.3,687.1 910.3,688.3 915.5,692.0 C920.8,695.8 924.5,702.9 929.0,707.8 C933.5,712.6 936.5,716.9 942.5,721.3 C948.5,725.7 961.3,732.0 965.0,734.1"/>
<path d="M1010.0,548.0 C1009.7,556.3 1009.3,581.8 1007.8,597.5 C1006.3,613.3 1003.3,627.5 1001.0,642.5 C998.8,657.5 995.0,677.0 994.3,687.5 C993.5,698.0 996.2,702.5 996.5,705.5"/>
<path d="M686.5,867.3 C688.7,865.8 694.0,861.3 700.0,858.3 C706.0,855.3 713.1,851.9 722.5,849.3 C731.9,846.6 743.1,844.4 756.3,842.5 C769.4,840.6 791.9,841.0 801.3,838.0 C810.6,835.0 808.4,830.5 812.5,824.5 C816.6,818.5 820.4,808.0 826.0,802.0 C831.6,796.0 839.5,792.6 846.3,788.5 C853.0,784.4 860.9,782.9 866.5,777.3 C872.1,771.6 874.0,761.1 880.0,754.8 C886.0,748.4 895.0,743.1 902.5,739.0 C910.0,734.9 917.5,731.7 925.0,730.0 C932.5,728.3 940.0,730.4 947.5,728.9 C955.0,727.4 966.3,722.3 970.0,721.0"/>
<path d="M713.5,860.5 C718.8,857.7 732.3,848.5 745.0,843.6 C757.8,838.8 778.8,836.7 790.0,831.3 C801.3,825.8 805.0,817.8 812.5,811.0 C820.0,804.3 827.5,796.0 835.0,790.8 C842.5,785.5 850.4,784.4 857.5,779.5 C864.6,774.6 872.1,766.8 877.8,761.5 C883.4,756.3 885.3,752.5 891.3,748.0 C897.3,743.5 904.4,738.3 913.8,734.5 C923.1,730.8 937.4,728.5 947.5,725.5 C957.7,722.5 970.0,718.0 974.5,716.5"/>
<path d="M974.5,716.5 C971.9,721.8 963.3,739.0 958.8,748.0 C954.3,757.0 953.2,763.0 947.5,770.5 C941.9,778.0 930.3,785.5 925.0,793.0 C919.8,800.5 918.3,808.0 916.0,815.5 C913.8,823.0 913.8,828.6 911.5,838.0 C909.3,847.4 906.6,861.6 902.5,871.8 C898.4,881.9 889.4,894.3 886.8,898.8"/>
<path d="M976.8,714.3 C979.4,713.5 984.3,710.1 992.5,709.8 C1000.8,709.4 1015.8,710.9 1026.3,712.0 C1036.8,713.1 1050.7,715.8 1055.5,716.5"/>
<path d="M971.9,493.8 C973.8,496.9 980.3,506.3 983.1,512.5 C985.9,518.8 986.3,525.0 988.8,531.3 C991.3,537.5 996.6,546.9 998.1,550.0"/>
<path d="M1000.0,712.0 C1008.3,713.7 1033.3,719.3 1050.0,722.0 C1066.7,724.7 1083.3,727.3 1100.0,728.0 C1116.7,728.7 1139.5,727.0 1150.0,726.0 C1160.5,725.0 1160.8,722.7 1163.0,722.0"/>
<path d="M611.5,910.0 C616.7,908.6 631.8,904.9 642.5,901.4 C653.2,897.9 666.6,893.2 675.5,889.1 C684.4,885.0 690.6,881.5 696.1,876.7 C701.6,871.9 706.4,863.0 708.5,860.2"/>
<path d="M416.5,334.0 L441.3,304.4 L450.3,321.3 L452.0,330.0" stroke-width="1.2"/>
</g>
<g font-family="Liberation Sans, sans-serif" fill="#3e3e3e" stroke="#f4f4f4" stroke-width="2.4" stroke-linejoin="round" paint-order="stroke" style="paint-order:stroke">
<text x="191.0" y="38.5" font-size="13" textLength="41.5" lengthAdjust="spacingAndGlyphs">Caistor</text>
<text x="30.0" y="54.2" font-size="13" textLength="103.9" lengthAdjust="spacingAndGlyphs">Kirton in Lindsey</text>
<text x="-40.0" y="114.5" font-size="13" textLength="79.4" lengthAdjust="spacingAndGlyphs">Gainsborough</text>
<text x="160.9" y="123.3" font-size="13" textLength="81.7" lengthAdjust="spacingAndGlyphs">Market Rasen</text>
<text x="341.1" y="139.7" font-size="13" textLength="33.8" lengthAdjust="spacingAndGlyphs">Louth</text>
<text x="194.6" y="202.7" font-size="13" textLength="45.7" lengthAdjust="spacingAndGlyphs">Wragby</text>
<text x="81.5" y="248.6" font-size="16" textLength="50.1" lengthAdjust="spacingAndGlyphs">Lincoln</text>
<text x="37.1" y="280.7" font-size="13" textLength="95.2" lengthAdjust="spacingAndGlyphs">North Hykeham</text>
<text x="272.7" y="263.7" font-size="13" textLength="64.2" lengthAdjust="spacingAndGlyphs">Horncastle</text>
<text x="229.5" y="299.9" font-size="13" textLength="55.8" lengthAdjust="spacingAndGlyphs">Woodhall</text>
<text x="246.9" y="316.5" font-size="13" textLength="20.9" lengthAdjust="spacingAndGlyphs">Spa</text>
<text x="246.4" y="344.7" font-size="13" textLength="62.6" lengthAdjust="spacingAndGlyphs">Coningsby</text>
<text x="-55.0" y="358.7" font-size="13" textLength="68.0" lengthAdjust="spacingAndGlyphs">Newark-on</text>
<text x="442.8" y="161.0" font-size="13" textLength="77.2" lengthAdjust="spacingAndGlyphs">Mablethorpe</text>
<text x="424.4" y="224.3" font-size="13" textLength="35.6" lengthAdjust="spacingAndGlyphs">Alford</text>
<text x="489.2" y="242.7" font-size="13" textLength="56.0" lengthAdjust="spacingAndGlyphs">Chapel St</text>
<text x="489.2" y="258.9" font-size="13" textLength="55.6" lengthAdjust="spacingAndGlyphs">Leonards</text>
<text x="382.8" y="291.5" font-size="13" textLength="41.6" lengthAdjust="spacingAndGlyphs">Spilsby</text>
<text x="491.2" y="314.7" font-size="13" textLength="55.8" lengthAdjust="spacingAndGlyphs">Skegness</text>
<text x="441.7" y="333.8" font-size="13" textLength="55.8" lengthAdjust="spacingAndGlyphs">Wainfleet</text>
<text x="444.0" y="350.3" font-size="13" textLength="53.0" lengthAdjust="spacingAndGlyphs">All Saints</text>
<text x="143.6" y="426.5" font-size="13" textLength="48.8" lengthAdjust="spacingAndGlyphs">Sleaford</text>
<text x="28.1" y="493.6" font-size="13" textLength="60.3" lengthAdjust="spacingAndGlyphs">Grantham</text>
<text x="327.0" y="442.7" font-size="13" textLength="39.0" lengthAdjust="spacingAndGlyphs">Boston</text>
<text x="161.6" y="604.5" font-size="13" textLength="43.2" lengthAdjust="spacingAndGlyphs">Bourne</text>
<text x="262.0" y="591.0" font-size="13" textLength="51.5" lengthAdjust="spacingAndGlyphs">Spalding</text>
<text x="553.1" y="472.4" font-size="13" textLength="70.9" lengthAdjust="spacingAndGlyphs">Hunstanton</text>
<text x="724.2" y="452.5" font-size="13" textLength="64.8" lengthAdjust="spacingAndGlyphs">Wells-next-</text>
<text x="734.6" y="469.1" font-size="13" textLength="45.3" lengthAdjust="spacingAndGlyphs">the-Sea</text>
<text x="888.9" y="470.1" font-size="13" textLength="73.2" lengthAdjust="spacingAndGlyphs">Sheringham</text>
<text x="857.5" y="499.1" font-size="13" textLength="25.3" lengthAdjust="spacingAndGlyphs">Holt</text>
<text x="724.3" y="557.2" font-size="13" textLength="62.3" lengthAdjust="spacingAndGlyphs">Fakenham</text>
<text x="960.3" y="564.1" font-size="13" textLength="93.1" lengthAdjust="spacingAndGlyphs">North Walsham</text>
<text x="918.2" y="584.7" font-size="13" textLength="50.9" lengthAdjust="spacingAndGlyphs">Aylsham</text>
<text x="850.3" y="609.6" font-size="13" textLength="56.2" lengthAdjust="spacingAndGlyphs">Reepham</text>
<text x="379.9" y="592.5" font-size="13" textLength="72.7" lengthAdjust="spacingAndGlyphs">Long Sutton</text>
<text x="510.4" y="616.8" font-size="13" textLength="67.5" lengthAdjust="spacingAndGlyphs">King's Lynn</text>
<text x="107.6" y="695.2" font-size="13" textLength="54.4" lengthAdjust="spacingAndGlyphs">Stamford</text>
<text x="252.5" y="676.7" font-size="13" textLength="55.8" lengthAdjust="spacingAndGlyphs">Crowland</text>
<text x="-1.0" y="681.9" font-size="13" textLength="46.0" lengthAdjust="spacingAndGlyphs">Oakham</text>
<text x="-10.0" y="744.2" font-size="13" textLength="66.0" lengthAdjust="spacingAndGlyphs">Uppingham</text>
<text x="195.8" y="757.3" font-size="17" textLength="99.7" lengthAdjust="spacingAndGlyphs">Peterborough</text>
<text x="223.2" y="797.7" font-size="13" textLength="36.0" lengthAdjust="spacingAndGlyphs">Yaxley</text>
<text x="409.6" y="684.8" font-size="13" textLength="49.7" lengthAdjust="spacingAndGlyphs">Wisbech</text>
<text x="505.2" y="724.8" font-size="13" textLength="61.0" lengthAdjust="spacingAndGlyphs">Downham</text>
<text x="514.2" y="741.0" font-size="13" textLength="42.3" lengthAdjust="spacingAndGlyphs">Market</text>
<text x="381.7" y="773.0" font-size="13" textLength="36.9" lengthAdjust="spacingAndGlyphs">March</text>
<text x="652.3" y="697.8" font-size="13" textLength="59.1" lengthAdjust="spacingAndGlyphs">Swaffham</text>
<text x="770.4" y="672.6" font-size="13" textLength="55.1" lengthAdjust="spacingAndGlyphs">Dereham</text>
<text x="933.5" y="713.7" font-size="16.5" textLength="59.0" lengthAdjust="spacingAndGlyphs">Norwich</text>
<text x="13.5" y="822.0" font-size="13" textLength="34.2" lengthAdjust="spacingAndGlyphs">Corby</text>
<text x="118.8" y="826.5" font-size="13" textLength="43.7" lengthAdjust="spacingAndGlyphs">Oundle</text>
<text x="78.3" y="891.1" font-size="13" textLength="60.5" lengthAdjust="spacingAndGlyphs">Thrapston</text>
<text x="288.5" y="850.8" font-size="13" textLength="46.1" lengthAdjust="spacingAndGlyphs">Ramsey</text>
<text x="356.3" y="846.8" font-size="13" textLength="53.3" lengthAdjust="spacingAndGlyphs">Chatteris</text>
<text x="-38.0" y="870.7" font-size="13" textLength="49.3" lengthAdjust="spacingAndGlyphs">Rothwell</text>
<text x="472.1" y="891.1" font-size="16" textLength="19.6" lengthAdjust="spacingAndGlyphs">Ely</text>
<text x="566.6" y="875.3" font-size="13" textLength="69.8" lengthAdjust="spacingAndGlyphs">Lakenheath</text>
<text x="625.6" y="851.8" font-size="13" textLength="50.8" lengthAdjust="spacingAndGlyphs">Brandon</text>
<text x="683.5" y="876.5" font-size="13" textLength="50.8" lengthAdjust="spacingAndGlyphs">Thetford</text>
<text x="723.6" y="757.7" font-size="13" textLength="42.8" lengthAdjust="spacingAndGlyphs">Watton</text>
<text x="841.3" y="753.4" font-size="13" textLength="80.3" lengthAdjust="spacingAndGlyphs">Wymondham</text>
<text x="791.6" y="798.2" font-size="13" textLength="79.4" lengthAdjust="spacingAndGlyphs">Attleborough</text>
<text x="894.6" y="821.3" font-size="13" textLength="81.0" lengthAdjust="spacingAndGlyphs">Long Stratton</text>
<text x="1008.3" y="845.4" font-size="13" textLength="44.5" lengthAdjust="spacingAndGlyphs">Bungay</text>
<text x="937.4" y="887.0" font-size="13" textLength="57.4" lengthAdjust="spacingAndGlyphs">Harleston</text>
<text x="1029.0" y="785.3" font-size="13" textLength="45.0" lengthAdjust="spacingAndGlyphs">Loddon</text>
<text x="1044.0" y="602.7" font-size="13" textLength="48.0" lengthAdjust="spacingAndGlyphs">Stalham</text>
<text x="865.4" y="905.7" font-size="13" textLength="23.6" lengthAdjust="spacingAndGlyphs">Diss</text>
<text x="1067.0" y="705.7" font-size="13" textLength="25.0" lengthAdjust="spacingAndGlyphs">Acle</text>
<text x="1064.0" y="844.1" font-size="13" textLength="47.0" lengthAdjust="spacingAndGlyphs">Beccles</text>
<text x="1136.0" y="689.7" font-size="13" textLength="58.0" lengthAdjust="spacingAndGlyphs">Caister-on-</text>
<text x="1154.0" y="705.7" font-size="13" textLength="22.0" lengthAdjust="spacingAndGlyphs">Sea</text>
<text x="1113.0" y="728.9" font-size="15" textLength="104.0" lengthAdjust="spacingAndGlyphs">Great Yarmouth</text>
<text x="1143.0" y="827.0" font-size="15" textLength="64.0" lengthAdjust="spacingAndGlyphs">Lowestoft</text>
<text x="290.5" y="900.9" font-size="13" textLength="95.5" lengthAdjust="spacingAndGlyphs" fill="#a8a8a8">Cambridgeshire</text>
<text x="538.5" y="542.2" font-size="15" textLength="51.8" lengthAdjust="spacingAndGlyphs" fill="#8a8a8a" font-style="italic">Norfolk</text>
<text x="512.6" y="560.2" font-size="15" textLength="100.9" lengthAdjust="spacingAndGlyphs" fill="#8a8a8a" font-style="italic">Coast National</text>
<text x="526.8" y="578.6" font-size="15" textLength="72.5" lengthAdjust="spacingAndGlyphs" fill="#8a8a8a" font-style="italic">Landscape</text>
</g>
</g>
<g fill="#00009c">
<circle cx="2.7" cy="100.6" r="5.4" fill-opacity="0.93"/>
<circle cx="2.7" cy="123.8" r="5.4" fill-opacity="0.93"/>
<circle cx="187.9" cy="118.1" r="5.4" fill-opacity="0.93"/>
<circle cx="190.1" cy="120.4" r="5.4" fill-opacity="0.93"/>
<circle cx="201.4" cy="115.9" r="5.4" fill-opacity="0.93"/>
<circle cx="204.8" cy="118.1" r="5.4" fill-opacity="0.93"/>
<circle cx="202.5" cy="113.6" r="5.4" fill-opacity="0.93"/>
<circle cx="199.1" cy="114.8" r="5.4" fill-opacity="0.93"/>
<circle cx="209.3" cy="120.4" r="5.2" fill-opacity="0.42"/>
<circle cx="198.0" cy="112.5" r="5.2" fill-opacity="0.42"/>
<circle cx="359.4" cy="127.6" r="5.4" fill-opacity="0.93"/>
<circle cx="366.2" cy="133.3" r="5.4" fill-opacity="0.93"/>
<circle cx="357.7" cy="135.0" r="5.4" fill-opacity="0.93"/>
<circle cx="362.8" cy="138.4" r="5.4" fill-opacity="0.93"/>
<circle cx="361.0" cy="131.0" r="5.4" fill-opacity="0.93"/>
<circle cx="362.1" cy="142.5" r="5.2" fill-opacity="0.42"/>
<circle cx="72.5" cy="253.3" r="5.2" fill-opacity="0.42"/>
<circle cx="76.5" cy="269.8" r="5.2" fill-opacity="0.42"/>
<circle cx="83.3" cy="269.3" r="5.2" fill-opacity="0.42"/>
<circle cx="91.6" cy="268.6" r="5.2" fill-opacity="0.42"/>
<circle cx="75.4" cy="281.0" r="5.4" fill-opacity="0.93"/>
<circle cx="78.8" cy="282.1" r="5.4" fill-opacity="0.93"/>
<circle cx="73.1" cy="281.5" r="5.4" fill-opacity="0.93"/>
<circle cx="77.6" cy="279.2" r="5.4" fill-opacity="0.93"/>
<circle cx="169.9" cy="311.4" r="5.4" fill-opacity="0.93"/>
<circle cx="166.5" cy="312.5" r="5.4" fill-opacity="0.93"/>
<circle cx="173.3" cy="311.4" r="5.4" fill-opacity="0.93"/>
<circle cx="170.3" cy="309.1" r="5.4" fill-opacity="0.93"/>
<circle cx="168.8" cy="314.3" r="5.4" fill-opacity="0.93"/>
<circle cx="115.9" cy="333.9" r="5.4" fill-opacity="0.93"/>
<circle cx="113.6" cy="337.3" r="5.4" fill-opacity="0.93"/>
<circle cx="112.5" cy="340.6" r="5.4" fill-opacity="0.93"/>
<circle cx="110.3" cy="344.0" r="5.4" fill-opacity="0.93"/>
<circle cx="117.0" cy="336.1" r="5.4" fill-opacity="0.93"/>
<circle cx="107.6" cy="342.9" r="5.2" fill-opacity="0.42"/>
<circle cx="250.9" cy="303.5" r="5.4" fill-opacity="0.93"/>
<circle cx="254.3" cy="304.6" r="5.4" fill-opacity="0.93"/>
<circle cx="257.7" cy="304.6" r="5.4" fill-opacity="0.93"/>
<circle cx="261.0" cy="303.1" r="5.4" fill-opacity="0.93"/>
<circle cx="264.4" cy="301.3" r="5.4" fill-opacity="0.93"/>
<circle cx="253.2" cy="302.4" r="5.4" fill-opacity="0.93"/>
<circle cx="300.4" cy="260.3" r="5.4" fill-opacity="0.93"/>
<circle cx="304.9" cy="258.1" r="5.4" fill-opacity="0.93"/>
<circle cx="302.7" cy="259.6" r="5.4" fill-opacity="0.93"/>
<circle cx="296.6" cy="259.9" r="5.2" fill-opacity="0.42"/>
<circle cx="477.3" cy="150.3" r="5.4" fill-opacity="0.93"/>
<circle cx="479.5" cy="155.9" r="5.4" fill-opacity="0.93"/>
<circle cx="482.9" cy="160.4" r="5.4" fill-opacity="0.93"/>
<circle cx="476.1" cy="159.3" r="5.4" fill-opacity="0.93"/>
<circle cx="475.0" cy="162.6" r="5.4" fill-opacity="0.93"/>
<circle cx="480.6" cy="163.8" r="5.4" fill-opacity="0.93"/>
<circle cx="488.5" cy="172.8" r="5.4" fill-opacity="0.93"/>
<circle cx="489.6" cy="177.3" r="5.4" fill-opacity="0.93"/>
<circle cx="491.9" cy="181.8" r="5.4" fill-opacity="0.93"/>
<circle cx="514.4" cy="241.4" r="5.4" fill-opacity="0.93"/>
<circle cx="515.5" cy="245.9" r="5.4" fill-opacity="0.93"/>
<circle cx="517.8" cy="249.3" r="5.4" fill-opacity="0.93"/>
<circle cx="521.2" cy="291.6" r="5.4" fill-opacity="0.93"/>
<circle cx="518.9" cy="292.5" r="5.4" fill-opacity="0.93"/>
<circle cx="507.7" cy="296.5" r="5.4" fill-opacity="0.93"/>
<circle cx="511.0" cy="301.0" r="5.4" fill-opacity="0.93"/>
<circle cx="514.4" cy="305.5" r="5.4" fill-opacity="0.93"/>
<circle cx="516.7" cy="312.3" r="5.4" fill-opacity="0.93"/>
<circle cx="517.8" cy="319.0" r="5.4" fill-opacity="0.93"/>
<circle cx="508.8" cy="303.3" r="5.4" fill-opacity="0.93"/>
<circle cx="513.3" cy="310.0" r="5.4" fill-opacity="0.93"/>
<circle cx="505.4" cy="292.5" r="5.2" fill-opacity="0.42"/>
<circle cx="520.0" cy="297.6" r="5.2" fill-opacity="0.42"/>
<circle cx="336.0" cy="434.6" r="5.4" fill-opacity="0.93"/>
<circle cx="340.5" cy="435.8" r="5.4" fill-opacity="0.93"/>
<circle cx="338.3" cy="441.4" r="5.4" fill-opacity="0.93"/>
<circle cx="342.8" cy="440.3" r="5.4" fill-opacity="0.93"/>
<circle cx="340.5" cy="444.8" r="5.4" fill-opacity="0.93"/>
<circle cx="333.8" cy="438.0" r="5.4" fill-opacity="0.93"/>
<circle cx="337.1" cy="438.0" r="5.4" fill-opacity="0.93"/>
<circle cx="350.6" cy="431.3" r="5.4" fill-opacity="0.93"/>
<circle cx="355.1" cy="434.6" r="5.4" fill-opacity="0.93"/>
<circle cx="358.5" cy="438.0" r="5.4" fill-opacity="0.93"/>
<circle cx="356.3" cy="442.5" r="5.4" fill-opacity="0.93"/>
<circle cx="359.6" cy="445.9" r="5.4" fill-opacity="0.93"/>
<circle cx="360.8" cy="435.8" r="5.4" fill-opacity="0.93"/>
<circle cx="354.0" cy="440.3" r="5.4" fill-opacity="0.93"/>
<circle cx="357.4" cy="447.0" r="5.4" fill-opacity="0.93"/>
<circle cx="352.9" cy="435.8" r="5.4" fill-opacity="0.93"/>
<circle cx="365.3" cy="435.8" r="5.2" fill-opacity="0.42"/>
<circle cx="367.1" cy="440.3" r="5.2" fill-opacity="0.42"/>
<circle cx="347.3" cy="450.4" r="5.2" fill-opacity="0.42"/>
<circle cx="352.9" cy="453.3" r="5.2" fill-opacity="0.42"/>
<circle cx="343.9" cy="451.5" r="5.2" fill-opacity="0.42"/>
<circle cx="340.5" cy="458.7" r="5.4" fill-opacity="0.93"/>
<circle cx="333.8" cy="474.0" r="5.4" fill-opacity="0.93"/>
<circle cx="331.5" cy="478.5" r="5.4" fill-opacity="0.93"/>
<circle cx="329.9" cy="481.2" r="5.4" fill-opacity="0.93"/>
<circle cx="590.3" cy="468.4" r="5.4" fill-opacity="0.93"/>
<circle cx="588.7" cy="471.8" r="5.4" fill-opacity="0.93"/>
<circle cx="584.7" cy="490.9" r="5.4" fill-opacity="0.93"/>
<circle cx="586.9" cy="494.3" r="5.4" fill-opacity="0.93"/>
<circle cx="589.2" cy="497.6" r="5.4" fill-opacity="0.93"/>
<circle cx="585.8" cy="496.5" r="5.4" fill-opacity="0.93"/>
<circle cx="592.5" cy="514.5" r="5.4" fill-opacity="0.93"/>
<circle cx="590.3" cy="517.9" r="5.4" fill-opacity="0.93"/>
<circle cx="594.8" cy="515.6" r="5.4" fill-opacity="0.93"/>
<circle cx="589.2" cy="462.3" r="5.2" fill-opacity="0.42"/>
<circle cx="589.6" cy="479.6" r="5.2" fill-opacity="0.42"/>
<circle cx="591.4" cy="490.9" r="5.2" fill-opacity="0.42"/>
<circle cx="592.5" cy="534.5" r="5.4" fill-opacity="0.93"/>
<circle cx="590.3" cy="540.1" r="5.4" fill-opacity="0.93"/>
<circle cx="595.9" cy="542.4" r="5.4" fill-opacity="0.93"/>
<circle cx="592.5" cy="539.0" r="5.4" fill-opacity="0.93"/>
<circle cx="279.0" cy="584.5" r="5.4" fill-opacity="0.93"/>
<circle cx="284.7" cy="580.0" r="5.4" fill-opacity="0.93"/>
<circle cx="292.5" cy="584.5" r="5.4" fill-opacity="0.93"/>
<circle cx="283.5" cy="591.3" r="5.4" fill-opacity="0.93"/>
<circle cx="292.5" cy="591.3" r="5.4" fill-opacity="0.93"/>
<circle cx="276.8" cy="591.3" r="5.4" fill-opacity="0.93"/>
<circle cx="285.8" cy="575.5" r="5.4" fill-opacity="0.93"/>
<circle cx="288.0" cy="586.8" r="5.4" fill-opacity="0.93"/>
<circle cx="281.3" cy="587.9" r="5.4" fill-opacity="0.93"/>
<circle cx="294.8" cy="589.0" r="5.4" fill-opacity="0.93"/>
<circle cx="284.0" cy="568.3" r="5.2" fill-opacity="0.42"/>
<circle cx="288.7" cy="569.9" r="5.2" fill-opacity="0.42"/>
<circle cx="316.2" cy="572.8" r="5.2" fill-opacity="0.42"/>
<circle cx="275.7" cy="594.0" r="5.2" fill-opacity="0.42"/>
<circle cx="316.2" cy="572.3" r="5.2" fill-opacity="0.42"/>
<circle cx="363.0" cy="569.4" r="5.4" fill-opacity="0.93"/>
<circle cx="367.5" cy="568.3" r="5.4" fill-opacity="0.93"/>
<circle cx="372.0" cy="569.4" r="5.4" fill-opacity="0.93"/>
<circle cx="369.8" cy="572.8" r="5.4" fill-opacity="0.93"/>
<circle cx="365.3" cy="571.6" r="5.4" fill-opacity="0.93"/>
<circle cx="360.8" cy="568.3" r="5.4" fill-opacity="0.93"/>
<circle cx="368.6" cy="576.1" r="5.2" fill-opacity="0.42"/>
<circle cx="418.1" cy="585.1" r="5.4" fill-opacity="0.93"/>
<circle cx="417.0" cy="583.6" r="5.4" fill-opacity="0.93"/>
<circle cx="414.8" cy="582.9" r="5.2" fill-opacity="0.42"/>
<circle cx="442.9" cy="598.6" r="5.4" fill-opacity="0.93"/>
<circle cx="446.3" cy="597.5" r="5.4" fill-opacity="0.93"/>
<circle cx="448.5" cy="596.4" r="5.4" fill-opacity="0.93"/>
<circle cx="441.8" cy="599.8" r="5.4" fill-opacity="0.93"/>
<circle cx="524.6" cy="606.1" r="5.4" fill-opacity="0.93"/>
<circle cx="523.9" cy="604.3" r="5.4" fill-opacity="0.93"/>
<circle cx="552.0" cy="597.1" r="5.4" fill-opacity="0.93"/>
<circle cx="556.5" cy="597.5" r="5.4" fill-opacity="0.93"/>
<circle cx="559.9" cy="596.4" r="5.4" fill-opacity="0.93"/>
<circle cx="558.8" cy="607.6" r="5.4" fill-opacity="0.93"/>
<circle cx="561.0" cy="608.8" r="5.4" fill-opacity="0.93"/>
<circle cx="556.5" cy="609.9" r="5.4" fill-opacity="0.93"/>
<circle cx="565.1" cy="584.5" r="5.2" fill-opacity="0.42"/>
<circle cx="563.7" cy="589.0" r="5.2" fill-opacity="0.42"/>
<circle cx="562.8" cy="593.0" r="5.2" fill-opacity="0.42"/>
<circle cx="573.0" cy="594.6" r="5.2" fill-opacity="0.42"/>
<circle cx="564.4" cy="597.5" r="5.2" fill-opacity="0.42"/>
<circle cx="548.6" cy="604.3" r="5.2" fill-opacity="0.42"/>
<circle cx="545.3" cy="608.8" r="5.2" fill-opacity="0.42"/>
<circle cx="537.4" cy="615.1" r="5.2" fill-opacity="0.42"/>
<circle cx="543.0" cy="618.9" r="5.2" fill-opacity="0.42"/>
<circle cx="545.3" cy="617.8" r="5.2" fill-opacity="0.42"/>
<circle cx="547.5" cy="614.4" r="5.2" fill-opacity="0.42"/>
<circle cx="550.9" cy="600.9" r="5.2" fill-opacity="0.42"/>
<circle cx="553.2" cy="605.4" r="5.2" fill-opacity="0.42"/>
<circle cx="433.2" cy="668.8" r="5.2" fill-opacity="0.42"/>
<circle cx="441.8" cy="675.1" r="5.2" fill-opacity="0.42"/>
<circle cx="484.5" cy="671.8" r="5.2" fill-opacity="0.42"/>
<circle cx="475.5" cy="681.4" r="5.2" fill-opacity="0.42"/>
<circle cx="472.8" cy="685.3" r="5.2" fill-opacity="0.42"/>
<circle cx="542.6" cy="723.1" r="5.2" fill-opacity="0.42"/>
<circle cx="543.5" cy="726.2" r="5.2" fill-opacity="0.42"/>
<circle cx="535.1" cy="730.9" r="5.2" fill-opacity="0.42"/>
<circle cx="12.4" cy="675.4" r="5.4" fill-opacity="0.93"/>
<circle cx="16.9" cy="673.1" r="5.4" fill-opacity="0.93"/>
<circle cx="21.4" cy="668.6" r="5.4" fill-opacity="0.93"/>
<circle cx="23.6" cy="673.1" r="5.4" fill-opacity="0.93"/>
<circle cx="14.6" cy="678.8" r="5.4" fill-opacity="0.93"/>
<circle cx="9.0" cy="675.4" r="5.4" fill-opacity="0.93"/>
<circle cx="19.1" cy="675.4" r="5.4" fill-opacity="0.93"/>
<circle cx="21.4" cy="681.0" r="5.2" fill-opacity="0.42"/>
<circle cx="140.6" cy="688.2" r="5.2" fill-opacity="0.42"/>
<circle cx="16.9" cy="838.0" r="5.4" fill-opacity="0.93"/>
<circle cx="20.3" cy="834.6" r="5.4" fill-opacity="0.93"/>
<circle cx="23.6" cy="831.3" r="5.4" fill-opacity="0.93"/>
<circle cx="28.1" cy="829.0" r="5.4" fill-opacity="0.93"/>
<circle cx="31.5" cy="826.8" r="5.4" fill-opacity="0.93"/>
<circle cx="33.8" cy="824.5" r="5.4" fill-opacity="0.93"/>
<circle cx="31.5" cy="831.3" r="5.4" fill-opacity="0.93"/>
<circle cx="27.0" cy="832.4" r="5.4" fill-opacity="0.93"/>
<circle cx="15.8" cy="823.4" r="5.2" fill-opacity="0.42"/>
<circle cx="25.9" cy="818.9" r="5.2" fill-opacity="0.42"/>
<circle cx="14.6" cy="840.3" r="5.2" fill-opacity="0.42"/>
<circle cx="135.0" cy="814.4" r="5.4" fill-opacity="0.93"/>
<circle cx="138.4" cy="817.8" r="5.4" fill-opacity="0.93"/>
<circle cx="141.8" cy="821.1" r="5.4" fill-opacity="0.93"/>
<circle cx="136.1" cy="817.8" r="5.4" fill-opacity="0.93"/>
<circle cx="133.9" cy="815.5" r="5.4" fill-opacity="0.93"/>
<circle cx="139.5" cy="815.1" r="5.4" fill-opacity="0.93"/>
<circle cx="144.0" cy="824.5" r="5.2" fill-opacity="0.42"/>
<circle cx="102.4" cy="881.9" r="5.4" fill-opacity="0.93"/>
<circle cx="108.0" cy="885.3" r="5.4" fill-opacity="0.93"/>
<circle cx="112.5" cy="884.1" r="5.4" fill-opacity="0.93"/>
<circle cx="109.1" cy="889.8" r="5.4" fill-opacity="0.93"/>
<circle cx="114.8" cy="883.0" r="5.4" fill-opacity="0.93"/>
<circle cx="105.8" cy="883.0" r="5.4" fill-opacity="0.93"/>
<circle cx="111.4" cy="887.5" r="5.4" fill-opacity="0.93"/>
<circle cx="123.3" cy="877.4" r="5.2" fill-opacity="0.42"/>
<circle cx="129.4" cy="880.8" r="5.2" fill-opacity="0.42"/>
<circle cx="151.9" cy="874.0" r="5.2" fill-opacity="0.42"/>
<circle cx="698.8" cy="461.9" r="5.4" fill-opacity="0.93"/>
<circle cx="700.6" cy="465.6" r="5.4" fill-opacity="0.93"/>
<circle cx="699.7" cy="463.8" r="5.4" fill-opacity="0.93"/>
<circle cx="710.9" cy="490.9" r="5.4" fill-opacity="0.93"/>
<circle cx="712.3" cy="492.8" r="5.4" fill-opacity="0.93"/>
<circle cx="716.6" cy="509.3" r="5.4" fill-opacity="0.93"/>
<circle cx="696.9" cy="461.9" r="5.2" fill-opacity="0.42"/>
<circle cx="919.4" cy="469.4" r="5.4" fill-opacity="0.93"/>
<circle cx="923.1" cy="466.6" r="5.4" fill-opacity="0.93"/>
<circle cx="926.9" cy="465.6" r="5.4" fill-opacity="0.93"/>
<circle cx="930.6" cy="468.4" r="5.4" fill-opacity="0.93"/>
<circle cx="921.3" cy="472.2" r="5.4" fill-opacity="0.93"/>
<circle cx="925.0" cy="470.3" r="5.4" fill-opacity="0.93"/>
<circle cx="939.1" cy="469.4" r="5.4" fill-opacity="0.93"/>
<circle cx="951.3" cy="472.2" r="5.4" fill-opacity="0.93"/>
<circle cx="958.8" cy="474.1" r="5.4" fill-opacity="0.93"/>
<circle cx="964.4" cy="475.0" r="5.4" fill-opacity="0.93"/>
<circle cx="968.1" cy="478.8" r="5.4" fill-opacity="0.93"/>
<circle cx="971.9" cy="482.5" r="5.4" fill-opacity="0.93"/>
<circle cx="968.1" cy="483.4" r="5.4" fill-opacity="0.93"/>
<circle cx="962.5" cy="476.9" r="5.4" fill-opacity="0.93"/>
<circle cx="985.0" cy="483.4" r="5.4" fill-opacity="0.93"/>
<circle cx="1012.2" cy="553.8" r="5.4" fill-opacity="0.93"/>
<circle cx="1002.8" cy="563.1" r="5.4" fill-opacity="0.93"/>
<circle cx="913.8" cy="474.1" r="5.2" fill-opacity="0.42"/>
<circle cx="933.4" cy="472.2" r="5.2" fill-opacity="0.42"/>
<circle cx="954.1" cy="481.6" r="5.2" fill-opacity="0.42"/>
<circle cx="965.3" cy="487.2" r="5.2" fill-opacity="0.42"/>
<circle cx="970.9" cy="489.1" r="5.2" fill-opacity="0.42"/>
<circle cx="983.1" cy="492.8" r="5.2" fill-opacity="0.42"/>
<circle cx="990.6" cy="489.1" r="5.2" fill-opacity="0.42"/>
<circle cx="752.4" cy="544.6" r="5.4" fill-opacity="0.93"/>
<circle cx="755.8" cy="548.0" r="5.4" fill-opacity="0.93"/>
<circle cx="760.3" cy="549.1" r="5.4" fill-opacity="0.93"/>
<circle cx="764.8" cy="545.8" r="5.4" fill-opacity="0.93"/>
<circle cx="758.0" cy="552.5" r="5.4" fill-opacity="0.93"/>
<circle cx="753.5" cy="550.3" r="5.4" fill-opacity="0.93"/>
<circle cx="762.5" cy="550.3" r="5.4" fill-opacity="0.93"/>
<circle cx="762.5" cy="543.5" r="5.2" fill-opacity="0.42"/>
<circle cx="765.9" cy="542.4" r="5.2" fill-opacity="0.42"/>
<circle cx="747.9" cy="557.0" r="5.2" fill-opacity="0.42"/>
<circle cx="752.8" cy="559.7" r="5.2" fill-opacity="0.42"/>
<circle cx="941.4" cy="580.6" r="5.4" fill-opacity="0.93"/>
<circle cx="944.8" cy="578.4" r="5.4" fill-opacity="0.93"/>
<circle cx="945.9" cy="575.0" r="5.4" fill-opacity="0.93"/>
<circle cx="943.7" cy="585.1" r="5.4" fill-opacity="0.93"/>
<circle cx="947.0" cy="582.9" r="5.4" fill-opacity="0.93"/>
<circle cx="684.9" cy="698.3" r="5.2" fill-opacity="0.42"/>
<circle cx="917.8" cy="680.3" r="5.2" fill-opacity="0.42"/>
<circle cx="945.2" cy="703.3" r="5.2" fill-opacity="0.42"/>
<circle cx="914.4" cy="691.6" r="5.4" fill-opacity="0.93"/>
<circle cx="917.8" cy="693.1" r="5.4" fill-opacity="0.93"/>
<circle cx="920.0" cy="692.5" r="5.4" fill-opacity="0.93"/>
<circle cx="927.2" cy="703.3" r="5.4" fill-opacity="0.93"/>
<circle cx="909.3" cy="727.8" r="5.4" fill-opacity="0.93"/>
<circle cx="905.9" cy="732.3" r="5.4" fill-opacity="0.93"/>
<circle cx="912.6" cy="726.6" r="5.4" fill-opacity="0.93"/>
<circle cx="907.0" cy="728.9" r="5.4" fill-opacity="0.93"/>
<circle cx="913.8" cy="730.0" r="5.4" fill-opacity="0.93"/>
<circle cx="903.6" cy="730.0" r="5.4" fill-opacity="0.93"/>
<circle cx="910.4" cy="731.1" r="5.4" fill-opacity="0.93"/>
<circle cx="908.1" cy="725.5" r="5.4" fill-opacity="0.93"/>
<circle cx="881.1" cy="746.9" r="5.4" fill-opacity="0.93"/>
<circle cx="885.6" cy="750.3" r="5.4" fill-opacity="0.93"/>
<circle cx="883.4" cy="748.0" r="5.4" fill-opacity="0.93"/>
<circle cx="886.8" cy="744.6" r="5.2" fill-opacity="0.42"/>
<circle cx="881.1" cy="760.4" r="5.2" fill-opacity="0.42"/>
<circle cx="826.0" cy="795.3" r="5.4" fill-opacity="0.93"/>
<circle cx="830.5" cy="793.0" r="5.4" fill-opacity="0.93"/>
<circle cx="835.0" cy="791.9" r="5.4" fill-opacity="0.93"/>
<circle cx="840.6" cy="789.6" r="5.4" fill-opacity="0.93"/>
<circle cx="828.3" cy="797.5" r="5.4" fill-opacity="0.93"/>
<circle cx="832.8" cy="795.3" r="5.4" fill-opacity="0.93"/>
<circle cx="823.8" cy="796.4" r="5.4" fill-opacity="0.93"/>
<circle cx="824.9" cy="802.0" r="5.2" fill-opacity="0.42"/>
<circle cx="842.9" cy="788.5" r="5.2" fill-opacity="0.42"/>
<circle cx="715.3" cy="869.1" r="5.2" fill-opacity="0.42"/>
<circle cx="714.0" cy="876.3" r="5.2" fill-opacity="0.42"/>
<circle cx="1033.0" cy="847.7" r="5.2" fill-opacity="0.42"/>
<circle cx="1031.9" cy="848.8" r="5.2" fill-opacity="0.42"/>
<circle cx="873.3" cy="897.6" r="5.4" fill-opacity="0.93"/>
<circle cx="876.6" cy="899.9" r="5.4" fill-opacity="0.93"/>
<circle cx="880.0" cy="901.0" r="5.4" fill-opacity="0.93"/>
<circle cx="901.4" cy="906.6" r="5.4" fill-opacity="0.93"/>
<circle cx="884.5" cy="903.3" r="5.2" fill-opacity="0.42"/>
<circle cx="673.0" cy="789.7" r="5.2" fill-opacity="0.42"/>
</g>
</svg>
<div class="zoomctl"><a>+</a><a>&#8722;</a></div>
<div id="panel">
<div id="track"></div>
<div class="row" style="top:0.25px"><span class="cb"></span><label style="width:192.0px;letter-spacing:0.159px">Exascale FTTH Postcodes</label></div>
<div class="row" style="top:20.76px"><span class="cb"></span><label style="width:82.8px;letter-spacing:0.040px">F4RN FTTP</label></div>
<div class="row" style="top:41.27px"><span class="cb"></span><label style="width:241.3px;letter-spacing:0.102px">Fibre First FTTP (Not Openreach)</label></div>
<div class="row" style="top:61.78px"><span class="cb"></span><label style="width:258.8px;letter-spacing:0.183px">FibreNest Persimmon Homes FTTH</label></div>
<div class="row" style="top:82.29px"><span class="cb"></span><label style="width:171.9px;letter-spacing:0.092px">Fibrus FTTH Postcodes</label></div>
<div class="row" style="top:102.80px"><span class="cb"></span><label style="width:227.3px;letter-spacing:0.158px">FreedomFibre FTTP Postcodes</label></div>
<div class="row" style="top:123.31px"><span class="cb"></span><label style="width:307.4px;letter-spacing:0.064px">Full Fibre Ltd (inc BeFibre) FTTP Premises</label></div>
<div class="row" style="top:143.82px"><span class="cb"></span><label style="width:279.1px;letter-spacing:0.099px">Fusion Fibre (Factco) FTTP Postcodes</label></div>
<div class="row" style="top:164.33px"><span class="cb"></span><label style="width:332.9px;letter-spacing:0.230px">FW Networks/Hey Broadband FTTP Premises</label></div>
<div class="row" style="top:184.84px"><span class="cb"></span><label style="width:195.2px;letter-spacing:0.158px">Gigaclear FTTP Postcodes</label></div>
<div class="row" style="top:205.35px"><span class="cb"></span><label style="width:199.5px;letter-spacing:0.201px">Giganet own FTTP network</label></div>
<div class="row" style="top:225.86px"><span class="cb"></span><label style="width:126.6px;letter-spacing:0.168px">Glide FTTH/FTTC</label></div>
<div class="row" style="top:246.37px"><span class="cb"></span><label style="width:120.9px;letter-spacing:0.187px">G.Network FTTP</label></div>
<div class="row" style="top:266.88px"><span class="cb"></span><label style="width:145.9px;letter-spacing:0.156px">GoFibre FTTP/FTTH</label></div>
<div class="row" style="top:287.39px"><span class="cb"></span><label style="width:149.7px;letter-spacing:0.125px">Grain Connect FTTH</label></div>
<div class="row" style="top:307.90px"><span class="cb"></span><label style="width:171.9px;letter-spacing:0.089px">Grayshott Gigabit FTTP</label></div>
<div class="row" style="top:328.41px"><span class="cb"></span><label style="width:297.1px;letter-spacing:0.161px">Hampshire Community Broadband FTTH</label></div>
<div class="row" style="top:348.92px"><span class="cb"></span><label style="width:171.9px;letter-spacing:0.292px">Hereford-CIC.Net FTTH</label></div>
<div class="row" style="top:369.43px"><span class="cb"></span><label style="width:123.4px;letter-spacing:0.064px">Hyperoptic FTTB</label></div>
<div class="row" style="top:389.94px"><span class="cb"></span><label style="width:188.7px;letter-spacing:0.130px">ineedfibre FTTP Premises</label></div>
<div class="row" style="top:410.45px"><span class="cb"></span><label style="width:197.0px;letter-spacing:0.182px">Internetty FTTH Postcodes</label></div>
<div class="row" style="top:430.96px"><span class="cb"></span><label style="width:154.7px;letter-spacing:0.046px">ITS Technology FTTP</label></div>
<div class="row" style="top:451.47px"><span class="cb"></span><label style="width:228.5px;letter-spacing:0.130px">Jurassic Fibre FTTP Postcodes</label></div>
<div class="row" style="top:471.98px"><span class="cb"></span><label style="width:235.0px;letter-spacing:0.095px">Lightning Fibre FTTP Postcodes</label></div>
<div class="row" style="top:492.49px"><span class="cb"></span><label style="width:171.4px;letter-spacing:0.199px">LightSpeed FTTP/FTTH</label></div>
<div class="row" style="top:513.00px"><span class="cb"></span><label style="width:181.0px;letter-spacing:0.169px">KCom Lightstream FTTP</label></div>
<div class="row" style="top:533.51px"><span class="cb"></span><label style="width:288.8px;letter-spacing:0.188px">Lila Connect/VXFIBER FTTP Postcodes</label></div>
<div class="row" style="top:554.02px"><span class="cb"></span><label style="width:102.6px;letter-spacing:0.012px">Lit Fibre FTTP</label></div>
<div class="row" style="top:574.53px"><span class="cb"></span><label style="width:182.7px;letter-spacing:0.088px">Lothian Broadband FTTP</label></div>
<div class="row" style="top:595.04px"><span class="cb"></span><label style="width:225.3px;letter-spacing:0.291px">Michaelston-y-Fedw CIC FTTH</label></div>
<div class="row" style="top:615.55px"><span class="cb"></span><label style="width:147.7px;letter-spacing:0.175px">MS3 FTTP Premises</label></div>
<div class="row" style="top:636.06px"><span class="cb"></span><label style="width:272.1px;letter-spacing:0.105px">Netomnia FTTP (retailed by YouFibre)</label></div>
<div class="row" style="top:656.57px"><span class="cb checked"><svg viewBox='0 0 14 14'><path d='M3.2 7.4l2.6 2.7 5-6' fill='none' stroke='#fff' stroke-width='1.9' stroke-linecap='round' stroke-linejoin='round'/></svg></span><label style="width:256.7px;letter-spacing:0.189px">nexfibre XGS-PON wholesale FTTP</label></div>
<div class="row" style="top:677.08px"><span class="cb"></span><label style="width:190.6px;letter-spacing:0.058px">Northern Fibre (Stix) FTTP</label></div>
<div class="row" style="top:697.59px"><span class="cb"></span><label style="width:85.4px;letter-spacing:0.084px">OFNL FTTH</label></div>
<div class="row" style="top:718.10px"><span class="cb"></span><label style="width:225.3px;letter-spacing:0.098px">OGI (Spectrum Fibre Ltd) FTTP</label></div>
<div class="row" style="top:738.61px"><span class="cb"></span><label style="width:206.8px;letter-spacing:0.217px">Pine Media FTTP Postcodes</label></div>
<div class="row" style="top:759.12px"><span class="cb"></span><label style="width:143.1px;letter-spacing:0.083px">PureFibre Ltd FTTH</label></div>
<div class="row" style="top:779.63px"><span class="cb"></span><label style="width:111.1px;letter-spacing:0.022px">Quickline FTTP</label></div>
<div class="row" style="top:800.14px"><span class="cb"></span><label style="width:279.1px;letter-spacing:0.130px">Raveningham Group Broadband FTTH</label></div>
<div class="row" style="top:820.65px"><span class="cb"></span><label style="width:178.5px;letter-spacing:0.123px">Relish Home Fibre FTTH</label></div>
<div class="row" style="top:841.16px"><span class="cb"></span><label style="width:184.9px;letter-spacing:0.067px">Ridgehill Residents FTTH</label></div>
</div>
<div id="thumb"></div>
<div class="btn" style="left:1307px;width:78px;background:linear-gradient(to right,#ffffff 10%,#fbd94a);">FTTP ISP</div>
<div class="btn" style="left:1391.5px;width:99px;background:linear-gradient(to right,#ffffff 10%,#b4c4e4);">Wireless ISP</div>
<div class="btn" style="left:1497.5px;width:96.5px;background:linear-gradient(to right,#ffffff 10%,#7eecb0);">Main Layers</div>
</body></html>
